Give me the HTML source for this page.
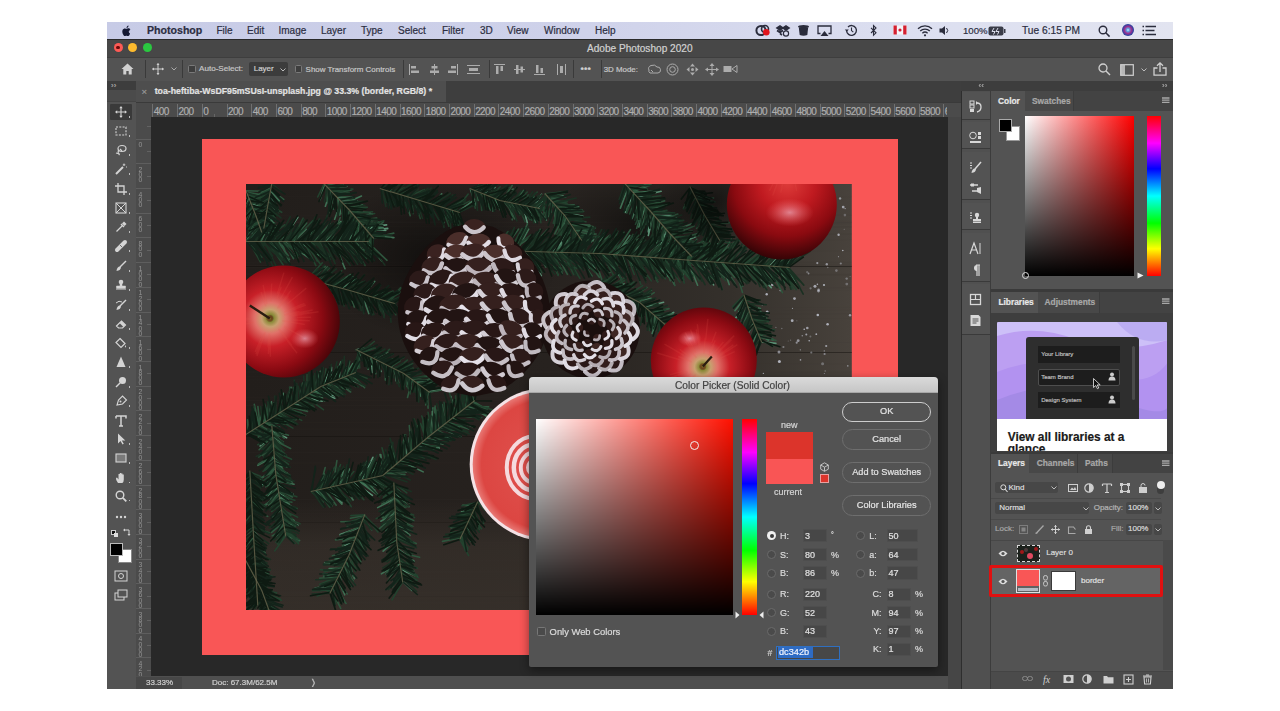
<!DOCTYPE html>
<html><head><meta charset="utf-8">
<style>
*{box-sizing:border-box}
html,body{margin:0;padding:0}
body{width:1280px;height:711px;background:#fff;position:relative;overflow:hidden;font-family:"Liberation Sans",sans-serif;}
.a{position:absolute}
.t{position:absolute;white-space:nowrap;line-height:1;-webkit-text-stroke:0.2px currentColor}
svg.a{overflow:visible}
</style></head>
<body>
<div id="root" style="position:absolute;left:0;top:0;width:1280px;height:711px;filter:blur(0.3px)">
<div class="a" style="left:107px;top:22px;width:1066px;height:16.5px;background:linear-gradient(90deg,#c7cbe6 0%,#cfd2ea 45%,#dcdff0 75%,#e2e4f0 100%);"></div>
<svg class="a" style="left:121px;top:24.5px" width="12" height="12" viewBox="0 0 12 12"><path d="M8.3 6.3c0-1.3 1.1-1.9 1.1-2-0.6-0.9-1.5-1-1.9-1-0.8-0.1-1.5 0.5-1.9 0.5-0.4 0-1-0.5-1.7-0.4C2.9 3.400 2.100 4 1.7 4.8c-0.9 1.500-0.2 3.8 0.6 5 0.4 0.6 0.9 1.300 1.5 1.300 0.6 0 0.8-0.4 1.600-0.4s0.9 0.4 1.6 0.4c0.6 0 1.1-0.6 1.4-1.200 0.5-0.7 0.6-1.300 0.6-1.400 0 0-1.300-0.5-1.300-2.2zM7 2.2c0.3-0.4 0.6-1 0.5-1.600-0.5 0-1.100 0.3-1.500 0.8-0.3 0.3-0.6 0.9-0.5 1.500 0.6 0 1.100-0.3 1.500-0.7z" fill="#141832"/></svg>
<div class="t" style="left:147px;top:25.00px;font-size:10.6px;color:#2c2e42;font-weight:bold;">Photoshop</div>
<div class="t" style="left:216.5px;top:25.6px;font-size:10px;color:#2c2e42;width:15.5px;">File</div>
<div class="t" style="left:247px;top:25.6px;font-size:10px;color:#2c2e42;width:16.8px;">Edit</div>
<div class="t" style="left:278.5px;top:25.6px;font-size:10px;color:#2c2e42;width:29px;">Image</div>
<div class="t" style="left:321px;top:25.6px;font-size:10px;color:#2c2e42;width:26px;">Layer</div>
<div class="t" style="left:361px;top:25.6px;font-size:10px;color:#2c2e42;width:23px;">Type</div>
<div class="t" style="left:398px;top:25.6px;font-size:10px;color:#2c2e42;width:29.5px;">Select</div>
<div class="t" style="left:442px;top:25.6px;font-size:10px;color:#2c2e42;width:23px;">Filter</div>
<div class="t" style="left:480px;top:25.6px;font-size:10px;color:#2c2e42;width:13px;">3D</div>
<div class="t" style="left:507px;top:25.6px;font-size:10px;color:#2c2e42;width:23px;">View</div>
<div class="t" style="left:544px;top:25.6px;font-size:10px;color:#2c2e42;width:38px;">Window</div>
<div class="t" style="left:595px;top:25.6px;font-size:10px;color:#2c2e42;width:23px;">Help</div>
<svg class="a" style="left:754px;top:24px" width="18" height="13" viewBox="0 0 18 13"><circle cx="7" cy="6.5" r="4.6" fill="none" stroke="#2a2c3c" stroke-width="2"/><circle cx="11" cy="5" r="3.5" fill="none" stroke="#2a2c3c" stroke-width="1.6"/><circle cx="12.3" cy="8.3" r="3.3" fill="#e0141c"/></svg>
<svg class="a" style="left:776px;top:24px" width="14" height="13" viewBox="0 0 14 13"><path d="M1 4l3-2 3 2-3 2zM7 4l3-2 3 2-3 2zM1 6.5l3 2 3-2M4 9.5l2 1.5" stroke="#2a2c3c" stroke-width="1.6" fill="#2a2c3c"/><circle cx="10" cy="9.5" r="2.6" fill="none" stroke="#2a2c3c" stroke-width="1.2"/></svg>
<svg class="a" style="left:797px;top:24px" width="13" height="13" viewBox="0 0 13 13"><ellipse cx="6.5" cy="2.5" rx="5.5" ry="1.6" fill="#2a2c3c"/><path d="M1.8 3.5h9.4l-0.9 7.5q-3.8 1.5-7.6 0z" fill="#2a2c3c"/></svg>
<svg class="a" style="left:817px;top:24.5px" width="15" height="12" viewBox="0 0 15 12"><path d="M3.5 8.5H1V1h13v7.5h-2.5" fill="none" stroke="#2a2c3c" stroke-width="1.3"/><path d="M7.5 6l4 5h-8z" fill="#2a2c3c"/></svg>
<svg class="a" style="left:844px;top:24px" width="14" height="13" viewBox="0 0 14 13"><path d="M2.6 6.5a4.9 4.9 0 1 0 1.4-3.5" fill="none" stroke="#2a2c3c" stroke-width="1.3"/><path d="M0.8 5.5l2 2.2 2-2.2z" fill="#2a2c3c"/><path d="M7.5 3.6v3l1.8 1.6" fill="none" stroke="#2a2c3c" stroke-width="1.1"/></svg>
<svg class="a" style="left:870px;top:24px" width="8" height="13" viewBox="0 0 8 13"><path d="M1 3.8l5 5-2.5 2.4V1.5L6 4 1 9" fill="none" stroke="#2a2c3c" stroke-width="1.1"/></svg>
<svg class="a" style="left:893px;top:25px" width="14" height="10" viewBox="0 0 14 10"><rect x="0" y="0.5" width="14" height="9" fill="#f4f4f8"/><rect x="0.5" y="0.5" width="3.3" height="9" fill="#d42030"/><rect x="10.2" y="0.5" width="3.3" height="9" fill="#d42030"/><circle cx="7" cy="5" r="1.6" fill="#d42030"/></svg>
<svg class="a" style="left:917px;top:24px" width="16" height="13" viewBox="0 0 16 13"><path d="M1 4.8a10 10 0 0 1 14 0M3.2 7a7 7 0 0 1 9.6 0M5.4 9.2a3.8 3.8 0 0 1 5.2 0" fill="none" stroke="#2a2c3c" stroke-width="1.3"/><circle cx="8" cy="11.3" r="1.1" fill="#2a2c3c"/></svg>
<svg class="a" style="left:939px;top:25px" width="11" height="11" viewBox="0 0 11 11"><path d="M0.5 3.5h2.5l3-2.5v9l-3-2.5H0.5z" fill="#2a2c3c"/><path d="M7.5 3a3.5 3.5 0 0 1 0 5" fill="none" stroke="#2a2c3c" stroke-width="1"/></svg>
<div class="t" style="left:963px;top:25.5px;font-size:9.6px;color:#2c2e42">100%</div>
<svg class="a" style="left:988px;top:25.5px" width="18" height="10" viewBox="0 0 18 10"><rect x="0.5" y="0.5" width="15" height="9" rx="2" fill="#3a3c48"/><rect x="16" y="3" width="1.5" height="4" fill="#3a3c48"/><path d="M6 2l-2 3.5h3l-1.5 3" stroke="#d8dae8" stroke-width="1" fill="none"/><path d="M10 2l-2 3.5h3l-1.5 3" stroke="#d8dae8" stroke-width="1" fill="none"/></svg>
<div class="t" style="left:1022px;top:25.8px;font-size:10.2px;color:#2c2e42">Tue 6:15 PM</div>
<svg class="a" style="left:1098px;top:24.5px" width="13" height="13" viewBox="0 0 13 13"><circle cx="5" cy="5" r="3.8" fill="none" stroke="#2a2c3c" stroke-width="1.4"/><path d="M7.8 7.8l3.8 3.8" stroke="#2a2c3c" stroke-width="1.5"/></svg>
<div class="a" style="left:1122px;top:24.3px;width:12px;height:12px;border-radius:50%;background:radial-gradient(circle at 50% 50%,#d0f0ff 0%,#60a0e0 18%,#a03090 40%,#3040a0 65%,#101a50 100%)"></div>
<svg class="a" style="left:1142px;top:25px" width="15" height="11" viewBox="0 0 15 11"><path d="M0.5 1.5h1.5M0.5 5.5h1.5M0.5 9.5h1.5M3.5 1.5h10.5M3.5 5.5h9M3.5 9.5h10.5" stroke="#2a2c3c" stroke-width="1.4"/></svg>
<div class="a" style="left:107px;top:38.5px;width:1066px;height:19px;background:#474747;border-top:1px solid #2a2a2a;"></div>
<div class="a" style="left:113.7px;top:43.2px;width:9px;height:9px;border-radius:50%;background:#fd5a55"></div>
<div class="a" style="left:128.1px;top:43.2px;width:9px;height:9px;border-radius:50%;background:#fdbb2e"></div>
<div class="a" style="left:143.2px;top:43.2px;width:9px;height:9px;border-radius:50%;background:#2ac840"></div>
<div class="a" style="left:116.4px;top:45.9px;width:3.6px;height:3.6px;border-radius:50%;background:#6b0a0a"></div>
<div class="t" style="left:587px;top:44.15px;font-size:10.1px;color:#d2d2d2;font-weight:normal;">Adobe Photoshop 2020</div>
<div class="a" style="left:107px;top:56.5px;width:1066px;height:24.5px;background:#535353;border-top:1px solid #3e3e3e;"></div>
<svg class="a" style="left:121px;top:63px" width="13" height="12" viewBox="0 0 13 12"><path d="M6.5 0.5L0.5 6h1.8v5.5h3v-3.5h2.4v3.5h3V6h1.8z" fill="#d0d0d0"/></svg>
<div class="a" style="left:144.5px;top:60px;width:1px;height:18px;background:#3a3a3a;"></div>
<svg class="a" style="left:152px;top:63px" width="12" height="12" viewBox="0 0 12 12"><path d="M6 0.5v11M0.5 6h11" stroke="#d0d0d0" stroke-width="1"/><path d="M6 0L4.5 2h3zM6 12l-1.5-2h3zM0 6l2-1.5v3zM12 6l-2-1.5v3z" fill="#d0d0d0"/></svg>
<svg class="a" style="left:171px;top:67px" width="6" height="4" viewBox="0 0 6 4"><path d="M0.5 0.5l2.5 2.5 2.5-2.5" stroke="#aaa" fill="none" stroke-width="1"/></svg>
<div class="a" style="left:182px;top:60px;width:1px;height:18px;background:#3a3a3a;"></div>
<div class="a" style="left:188.3px;top:65.3px;width:7.3px;height:7.3px;border:1px solid #7a7a7a;border-radius:1.5px;background:#3e3e3e"></div>
<div class="t" style="left:199px;top:65.45px;font-size:8.1px;color:#c6c6c6;font-weight:normal;">Auto-Select:</div>
<div class="a" style="left:249px;top:62px;width:39px;height:14px;background:#3c3c3c;border-radius:2px;"></div>
<div class="t" style="left:253.7px;top:65.30px;font-size:8px;color:#cfcfcf;font-weight:normal;">Layer</div>
<svg class="a" style="left:280px;top:67.5px" width="6" height="4" viewBox="0 0 6 4"><path d="M0.5 0.5l2.5 2.5 2.5-2.5" stroke="#bbb" fill="none" stroke-width="1"/></svg>
<div class="a" style="left:295px;top:65.3px;width:7.3px;height:7.3px;border:1px solid #7a7a7a;border-radius:1.5px;background:#3e3e3e"></div>
<div class="t" style="left:305.6px;top:65.53px;font-size:7.95px;color:#c6c6c6;font-weight:normal;">Show Transform Controls</div>
<div class="a" style="left:402.5px;top:60px;width:1px;height:18px;background:#3a3a3a;"></div>
<svg class="a" style="left:409px;top:63.5px" width="11" height="11" viewBox="0 0 11 11"><path d="M0.5 0v11" stroke="#acacac"/><rect x="2" y="2" width="5" height="2.5" fill="#acacac"/><rect x="2" y="6.5" width="8" height="2.5" fill="#acacac"/></svg>
<svg class="a" style="left:428.5px;top:63.5px" width="11" height="11" viewBox="0 0 11 11"><path d="M5.5 0v11" stroke="#acacac"/><rect x="2.5" y="2" width="6" height="2.5" fill="#acacac"/><rect x="1" y="6.5" width="9" height="2.5" fill="#acacac"/></svg>
<svg class="a" style="left:447px;top:63.5px" width="11" height="11" viewBox="0 0 11 11"><path d="M10.5 0v11" stroke="#acacac"/><rect x="4" y="2" width="5" height="2.5" fill="#acacac"/><rect x="1" y="6.5" width="8" height="2.5" fill="#acacac"/></svg>
<svg class="a" style="left:467px;top:63.5px" width="13" height="11" viewBox="0 0 13 11"><path d="M0 1.5h13M0 9.5h13" stroke="#acacac"/><rect x="2" y="4" width="9" height="3" fill="#acacac"/></svg>
<svg class="a" style="left:494px;top:63.5px" width="11" height="11" viewBox="0 0 11 11"><path d="M0 0.5h11" stroke="#acacac"/><rect x="2" y="2" width="2.5" height="8" fill="#acacac"/><rect x="6.5" y="2" width="2.5" height="5" fill="#acacac"/></svg>
<svg class="a" style="left:514px;top:63.5px" width="11" height="11" viewBox="0 0 11 11"><path d="M0 5.5h11" stroke="#acacac"/><rect x="2" y="1" width="2.5" height="9" fill="#acacac"/><rect x="6.5" y="2.5" width="2.5" height="6" fill="#acacac"/></svg>
<svg class="a" style="left:533.5px;top:63.5px" width="11" height="11" viewBox="0 0 11 11"><path d="M0 10.5h11" stroke="#acacac"/><rect x="2" y="1" width="2.5" height="8" fill="#acacac"/><rect x="6.5" y="4" width="2.5" height="5" fill="#acacac"/></svg>
<svg class="a" style="left:556px;top:63.5px" width="11" height="11" viewBox="0 0 11 11"><path d="M1.5 0v11M9.5 0v11" stroke="#acacac"/><rect x="4" y="2" width="3" height="7" fill="#acacac"/></svg>
<div class="a" style="left:489px;top:60px;width:1px;height:18px;background:#3a3a3a;"></div>
<div class="a" style="left:573px;top:60px;width:1px;height:18px;background:#3a3a3a;"></div>
<div class="t" style="left:580.5px;top:63.75px;font-size:9.5px;color:#d0d0d0;font-weight:bold;letter-spacing:0.2px;">&#8226;&#8226;&#8226;</div>
<div class="a" style="left:600.5px;top:60px;width:1px;height:18px;background:#3a3a3a;"></div>
<div class="t" style="left:603.7px;top:65.55px;font-size:7.9px;color:#c6c6c6;font-weight:normal;">3D Mode:</div>
<svg class="a" style="left:646px;top:63px" width="15" height="12" viewBox="0 0 15 12"><path d="M3 7a4 3 0 0 1 8-3 3 3 0 0 1 1 6H4a2.5 2.5 0 0 1-1-3z" fill="none" stroke="#acacac" stroke-width="1"/><path d="M5 7l2 2" stroke="#acacac"/></svg>
<svg class="a" style="left:666px;top:62.5px" width="13" height="13" viewBox="0 0 13 13"><circle cx="6.5" cy="6.5" r="5.5" fill="none" stroke="#acacac" stroke-width="1"/><circle cx="6.5" cy="6.5" r="2.8" fill="none" stroke="#acacac" stroke-width="1"/></svg>
<svg class="a" style="left:686px;top:62.5px" width="13" height="13" viewBox="0 0 13 13"><path d="M6.5 0.5l2.5 3h-5zM6.5 12.5l2.5-3h-5zM0.5 6.5l3-2.5v5zM12.5 6.5l-3-2.5v5z" fill="#acacac"/><circle cx="6.5" cy="6.5" r="1.5" fill="#acacac"/></svg>
<svg class="a" style="left:705px;top:62.5px" width="14" height="13" viewBox="0 0 14 13"><path d="M7 1v11M1 6.5h12" stroke="#acacac"/><path d="M7 0l-2.5 3h5zM7 13l-2.5-3h5zM0 6.5l3-2v4zM14 6.5l-3-2v4z" fill="#acacac"/></svg>
<svg class="a" style="left:723px;top:64px" width="15" height="10" viewBox="0 0 15 10"><rect x="0.5" y="2" width="8" height="6" fill="#acacac"/><path d="M9 5l5-3.5v7z" fill="none" stroke="#acacac"/></svg>
<svg class="a" style="left:1098px;top:63px" width="13" height="13" viewBox="0 0 13 13"><circle cx="5" cy="5" r="4" fill="none" stroke="#d0d0d0" stroke-width="1.3"/><path d="M8 8l4 4" stroke="#d0d0d0" stroke-width="1.5"/></svg>
<svg class="a" style="left:1120px;top:63.5px" width="14" height="12" viewBox="0 0 14 12"><rect x="0.7" y="0.7" width="12.6" height="10.6" fill="none" stroke="#d0d0d0" stroke-width="1.2"/><rect x="1" y="1" width="4" height="10" fill="#d0d0d0" opacity="0.8"/></svg>
<svg class="a" style="left:1141px;top:67.5px" width="6" height="4" viewBox="0 0 6 4"><path d="M0.5 0.5l2.5 2.5 2.5-2.5" stroke="#bbb" fill="none" stroke-width="1"/></svg>
<svg class="a" style="left:1153px;top:61.5px" width="14" height="14" viewBox="0 0 14 14"><path d="M4.5 6H1v7.2h12V6H9.5" fill="none" stroke="#d0d0d0" stroke-width="1.3"/><path d="M7 10V1M4 3.8L7 0.8l3 3" fill="none" stroke="#d0d0d0" stroke-width="1.3"/></svg>
<div class="a" style="left:107px;top:81px;width:28.5px;height:608px;background:#535353;"></div>
<div class="a" style="left:107px;top:81px;width:28.5px;height:9px;background:#3d3d3d;"></div>
<div class="a" style="left:107px;top:90px;width:28.5px;height:12px;background:#4b4b4b;border-bottom:1px solid #444;"></div>
<div class="t" style="left:111px;top:81.50px;font-size:8px;color:#9a9a9a;font-weight:bold;">&#8250;&#8250;</div>
<div class="a" style="left:110px;top:103.5px;width:22px;height:16.5px;background:#3a3a3a;border-radius:1px;"></div>
<svg class="a" style="left:115px;top:106px" width="12" height="12" viewBox="0 0 12 12"><path d="M6 1v10M1 6h10" stroke="#d4d4d4" stroke-width="1.1"/><path d="M6 0L4.3 2.2h3.4zM6 12l-1.7-2.2h3.4zM0 6l2.2-1.7v3.4zM12 6L9.8 4.3v3.4z" fill="#d4d4d4"/></svg>
<div class="a" style="left:128.5px;top:116px;width:1.5px;height:1.5px;background:#bbb;"></div>
<svg class="a" style="left:115px;top:125px" width="12" height="12" viewBox="0 0 12 12"><rect x="1" y="2" width="10" height="8" fill="none" stroke="#d4d4d4" stroke-width="1.1" stroke-dasharray="2 1.3"/></svg>
<div class="a" style="left:128.5px;top:135px;width:1.5px;height:1.5px;background:#bbb;"></div>
<svg class="a" style="left:115px;top:144px" width="12" height="12" viewBox="0 0 12 12"><ellipse cx="7" cy="4.5" rx="4" ry="3" fill="none" stroke="#d4d4d4" stroke-width="1.2"/><path d="M3.5 6q-1 3 1 5M1 9l4 1M5 5l2 2" stroke="#d4d4d4" stroke-width="1.1" fill="none"/></svg>
<div class="a" style="left:128.5px;top:154px;width:1.5px;height:1.5px;background:#bbb;"></div>
<svg class="a" style="left:115px;top:163px" width="12" height="12" viewBox="0 0 12 12"><path d="M1 11l7-7" stroke="#d4d4d4" stroke-width="2"/><path d="M9 0.5v2.5M7.8 1.8h2.5M11 4h1" stroke="#d4d4d4" stroke-width="0.9"/></svg>
<div class="a" style="left:128.5px;top:173px;width:1.5px;height:1.5px;background:#bbb;"></div>
<svg class="a" style="left:115px;top:183px" width="12" height="12" viewBox="0 0 12 12"><path d="M3 0v9h9M0 3h9v9" fill="none" stroke="#d4d4d4" stroke-width="1.3"/></svg>
<div class="a" style="left:128.5px;top:193px;width:1.5px;height:1.5px;background:#bbb;"></div>
<svg class="a" style="left:115px;top:202px" width="12" height="12" viewBox="0 0 12 12"><rect x="1" y="1" width="10" height="10" fill="none" stroke="#d4d4d4" stroke-width="1.1"/><path d="M1 1l10 10M11 1L1 11" stroke="#d4d4d4" stroke-width="1"/></svg>
<div class="a" style="left:128.5px;top:212px;width:1.5px;height:1.5px;background:#bbb;"></div>
<svg class="a" style="left:115px;top:221px" width="12" height="12" viewBox="0 0 12 12"><path d="M1.5 10.5l6-6" stroke="#d4d4d4" stroke-width="1.3"/><path d="M7 2.5l2-2 2.5 2.5-2 2z" fill="#d4d4d4"/><path d="M6 3l3 3" stroke="#d4d4d4" stroke-width="1.4"/></svg>
<div class="a" style="left:128.5px;top:231px;width:1.5px;height:1.5px;background:#bbb;"></div>
<svg class="a" style="left:115px;top:240px" width="12" height="12" viewBox="0 0 12 12"><path d="M2 10L10 2" stroke="#d4d4d4" stroke-width="4" stroke-linecap="round"/><path d="M5 5l2 2" stroke="#535353" stroke-width="0.8"/></svg>
<div class="a" style="left:128.5px;top:250px;width:1.5px;height:1.5px;background:#bbb;"></div>
<svg class="a" style="left:115px;top:260px" width="12" height="12" viewBox="0 0 12 12"><path d="M11 1L5 7" stroke="#d4d4d4" stroke-width="1.5"/><path d="M5 6.5q-3 0-3.5 4.5q4-0.5 4.5-3.5z" fill="#d4d4d4"/></svg>
<div class="a" style="left:128.5px;top:270px;width:1.5px;height:1.5px;background:#bbb;"></div>
<svg class="a" style="left:115px;top:279px" width="12" height="12" viewBox="0 0 12 12"><circle cx="6" cy="3" r="2.3" fill="#d4d4d4"/><path d="M5 5h2v2H5zM1.5 7h9v2.5h-9zM1 10.5h10" fill="#d4d4d4" stroke="#d4d4d4" stroke-width="0.5"/></svg>
<div class="a" style="left:128.5px;top:289px;width:1.5px;height:1.5px;background:#bbb;"></div>
<svg class="a" style="left:115px;top:299px" width="12" height="12" viewBox="0 0 12 12"><path d="M11 1L5 7" stroke="#d4d4d4" stroke-width="1.5"/><path d="M5 6.5q-3 0-3.5 4.5q4-0.5 4.5-3.5z" fill="#d4d4d4"/><path d="M1 4q3-3 6-1" fill="none" stroke="#d4d4d4" stroke-width="1"/></svg>
<div class="a" style="left:128.5px;top:309px;width:1.5px;height:1.5px;background:#bbb;"></div>
<svg class="a" style="left:115px;top:318px" width="12" height="12" viewBox="0 0 12 12"><path d="M1.5 8l5-5 4 4-3 3H3.5z" fill="none" stroke="#d4d4d4" stroke-width="1.2"/><path d="M6.5 3l4 4-2 2-4-4z" fill="#d4d4d4"/></svg>
<div class="a" style="left:128.5px;top:328px;width:1.5px;height:1.5px;background:#bbb;"></div>
<svg class="a" style="left:115px;top:337px" width="12" height="12" viewBox="0 0 12 12"><path d="M5 1.5l5 5-4 4-5-5z" fill="none" stroke="#d4d4d4" stroke-width="1.2"/><path d="M10.5 8q1.2 1.8 0 2.8q-1.2-1 0-2.8z" fill="#d4d4d4"/></svg>
<div class="a" style="left:128.5px;top:347px;width:1.5px;height:1.5px;background:#bbb;"></div>
<svg class="a" style="left:115px;top:356px" width="12" height="12" viewBox="0 0 12 12"><path d="M6 0.5L10.5 11h-9z" fill="#d4d4d4"/></svg>
<div class="a" style="left:128.5px;top:366px;width:1.5px;height:1.5px;background:#bbb;"></div>
<svg class="a" style="left:115px;top:376px" width="12" height="12" viewBox="0 0 12 12"><circle cx="7.5" cy="4.5" r="3.5" fill="#d4d4d4"/><path d="M5 7l-4 4" stroke="#d4d4d4" stroke-width="1.5"/></svg>
<div class="a" style="left:128.5px;top:386px;width:1.5px;height:1.5px;background:#bbb;"></div>
<svg class="a" style="left:115px;top:395px" width="12" height="12" viewBox="0 0 12 12"><path d="M2 10l1.5-5 4-4 4 4-4 4z" fill="none" stroke="#d4d4d4" stroke-width="1.1"/><circle cx="5.5" cy="6.5" r="1" fill="#d4d4d4"/></svg>
<div class="a" style="left:128.5px;top:405px;width:1.5px;height:1.5px;background:#bbb;"></div>
<svg class="a" style="left:115px;top:414.7px" width="12" height="12" viewBox="0 0 12 12"><path d="M1 1h10v2.5M1 1v2.5M6 1v10M4 11h4" fill="none" stroke="#d4d4d4" stroke-width="1.5"/></svg>
<svg class="a" style="left:115px;top:433px" width="12" height="12" viewBox="0 0 12 12"><path d="M3 0.5v10l2.5-2.5 2 3.5 1.3-0.8-2-3.3h3.5z" fill="#d4d4d4"/></svg>
<div class="a" style="left:128.5px;top:443px;width:1.5px;height:1.5px;background:#bbb;"></div>
<svg class="a" style="left:115px;top:452.4px" width="12" height="12" viewBox="0 0 12 12"><rect x="1" y="2" width="10" height="8" fill="#7a7a7a" stroke="#d4d4d4" stroke-width="1.1"/></svg>
<div class="a" style="left:128.5px;top:462.4px;width:1.5px;height:1.5px;background:#bbb;"></div>
<svg class="a" style="left:115px;top:471.5px" width="12" height="12" viewBox="0 0 12 12"><path d="M3 11q-2.5-3-2-5l1-0.5 1.5 2V2h1.3v4V1h1.4v5V1.5h1.3V6V2.5h1.3v5q0 2.5-1.5 3.5z" fill="#d4d4d4"/></svg>
<div class="a" style="left:128.5px;top:481.5px;width:1.5px;height:1.5px;background:#bbb;"></div>
<svg class="a" style="left:115px;top:489.8px" width="12" height="12" viewBox="0 0 12 12"><circle cx="5" cy="5" r="3.8" fill="none" stroke="#d4d4d4" stroke-width="1.4"/><path d="M7.8 7.8l3.5 3.5" stroke="#d4d4d4" stroke-width="1.8"/></svg>
<div class="a" style="left:128.5px;top:499.8px;width:1.5px;height:1.5px;background:#bbb;"></div>
<svg class="a" style="left:115px;top:511px" width="12" height="12" viewBox="0 0 12 12"><circle cx="2" cy="6" r="1.2" fill="#d4d4d4"/><circle cx="6" cy="6" r="1.2" fill="#d4d4d4"/><circle cx="10" cy="6" r="1.2" fill="#d4d4d4"/></svg>
<div class="a" style="left:111px;top:530px;width:5px;height:5px;background:#111;border:1px solid #ccc;"></div>
<div class="a" style="left:113.5px;top:532.5px;width:4.5px;height:4.5px;background:#ddd;"></div>
<svg class="a" style="left:123px;top:528px" width="8" height="8" viewBox="0 0 8 8"><path d="M1 2h5v5" fill="none" stroke="#d4d4d4" stroke-width="1"/><path d="M0 2l2-1.5v3zM6 8l-1.5-2h3z" fill="#d4d4d4"/></svg>
<div class="a" style="left:117.7px;top:549px;width:14px;height:14px;background:#fff;border:1px solid #888;"></div>
<div class="a" style="left:110.4px;top:542.7px;width:13px;height:13px;background:#000;border:1px solid #bbb;"></div>
<svg class="a" style="left:114px;top:570px" width="14" height="12" viewBox="0 0 14 12"><rect x="1" y="1" width="12" height="10" fill="none" stroke="#d4d4d4" stroke-width="1"/><circle cx="7" cy="6" r="2.5" fill="none" stroke="#d4d4d4" stroke-width="1"/></svg>
<svg class="a" style="left:114px;top:589px" width="14" height="13" viewBox="0 0 14 13"><rect x="1" y="4" width="9" height="7" fill="#535353" stroke="#d4d4d4" stroke-width="1"/><rect x="4" y="1" width="9" height="7" fill="#535353" stroke="#d4d4d4" stroke-width="1"/></svg>
<div class="a" style="left:135.5px;top:81px;width:825.5px;height:21px;background:#3e3e3e;"></div>
<div class="a" style="left:135.5px;top:81px;width:310.7px;height:21.5px;background:#4e4e4e;"></div>
<div class="t" style="left:141.5px;top:86.85px;font-size:9.5px;color:#9a9a9a;font-weight:normal;">&#215;</div>
<div class="t" style="left:154.7px;top:86.92px;font-size:8.75px;color:#e2e2e2;font-weight:bold;">toa-heftiba-WsDF95mSUsI-unsplash.jpg @ 33.3% (border, RGB/8) *</div>
<div class="a" style="left:135.5px;top:102px;width:825.5px;height:15px;background:#4b4b4b;border-top:1px solid #3a3a3a;"></div>
<div class="a" style="left:135.5px;top:117px;width:15.5px;height:559.5px;background:#4b4b4b;"></div>
<div class="a" style="left:152.37px;top:104px;width:0.7px;height:13px;background:#707070"></div>
<div class="a" style="left:164.73px;top:114px;width:0.6px;height:3px;background:#666"></div>
<div class="a" style="left:177.09px;top:104px;width:0.7px;height:13px;background:#707070"></div>
<div class="a" style="left:189.44px;top:114px;width:0.6px;height:3px;background:#666"></div>
<div class="a" style="left:201.80px;top:104px;width:0.7px;height:13px;background:#707070"></div>
<div class="a" style="left:214.16px;top:114px;width:0.6px;height:3px;background:#666"></div>
<div class="a" style="left:226.51px;top:104px;width:0.7px;height:13px;background:#707070"></div>
<div class="a" style="left:238.87px;top:114px;width:0.6px;height:3px;background:#666"></div>
<div class="a" style="left:251.23px;top:104px;width:0.7px;height:13px;background:#707070"></div>
<div class="a" style="left:263.59px;top:114px;width:0.6px;height:3px;background:#666"></div>
<div class="a" style="left:275.94px;top:104px;width:0.7px;height:13px;background:#707070"></div>
<div class="a" style="left:288.30px;top:114px;width:0.6px;height:3px;background:#666"></div>
<div class="a" style="left:300.66px;top:104px;width:0.7px;height:13px;background:#707070"></div>
<div class="a" style="left:313.01px;top:114px;width:0.6px;height:3px;background:#666"></div>
<div class="a" style="left:325.37px;top:104px;width:0.7px;height:13px;background:#707070"></div>
<div class="a" style="left:337.73px;top:114px;width:0.6px;height:3px;background:#666"></div>
<div class="a" style="left:350.08px;top:104px;width:0.7px;height:13px;background:#707070"></div>
<div class="a" style="left:362.44px;top:114px;width:0.6px;height:3px;background:#666"></div>
<div class="a" style="left:374.80px;top:104px;width:0.7px;height:13px;background:#707070"></div>
<div class="a" style="left:387.15px;top:114px;width:0.6px;height:3px;background:#666"></div>
<div class="a" style="left:399.51px;top:104px;width:0.7px;height:13px;background:#707070"></div>
<div class="a" style="left:411.87px;top:114px;width:0.6px;height:3px;background:#666"></div>
<div class="a" style="left:424.23px;top:104px;width:0.7px;height:13px;background:#707070"></div>
<div class="a" style="left:436.58px;top:114px;width:0.6px;height:3px;background:#666"></div>
<div class="a" style="left:448.94px;top:104px;width:0.7px;height:13px;background:#707070"></div>
<div class="a" style="left:461.30px;top:114px;width:0.6px;height:3px;background:#666"></div>
<div class="a" style="left:473.65px;top:104px;width:0.7px;height:13px;background:#707070"></div>
<div class="a" style="left:486.01px;top:114px;width:0.6px;height:3px;background:#666"></div>
<div class="a" style="left:498.37px;top:104px;width:0.7px;height:13px;background:#707070"></div>
<div class="a" style="left:510.73px;top:114px;width:0.6px;height:3px;background:#666"></div>
<div class="a" style="left:523.08px;top:104px;width:0.7px;height:13px;background:#707070"></div>
<div class="a" style="left:535.44px;top:114px;width:0.6px;height:3px;background:#666"></div>
<div class="a" style="left:547.80px;top:104px;width:0.7px;height:13px;background:#707070"></div>
<div class="a" style="left:560.15px;top:114px;width:0.6px;height:3px;background:#666"></div>
<div class="a" style="left:572.51px;top:104px;width:0.7px;height:13px;background:#707070"></div>
<div class="a" style="left:584.87px;top:114px;width:0.6px;height:3px;background:#666"></div>
<div class="a" style="left:597.22px;top:104px;width:0.7px;height:13px;background:#707070"></div>
<div class="a" style="left:609.58px;top:114px;width:0.6px;height:3px;background:#666"></div>
<div class="a" style="left:621.94px;top:104px;width:0.7px;height:13px;background:#707070"></div>
<div class="a" style="left:634.30px;top:114px;width:0.6px;height:3px;background:#666"></div>
<div class="a" style="left:646.65px;top:104px;width:0.7px;height:13px;background:#707070"></div>
<div class="a" style="left:659.01px;top:114px;width:0.6px;height:3px;background:#666"></div>
<div class="a" style="left:671.37px;top:104px;width:0.7px;height:13px;background:#707070"></div>
<div class="a" style="left:683.72px;top:114px;width:0.6px;height:3px;background:#666"></div>
<div class="a" style="left:696.08px;top:104px;width:0.7px;height:13px;background:#707070"></div>
<div class="a" style="left:708.44px;top:114px;width:0.6px;height:3px;background:#666"></div>
<div class="a" style="left:720.79px;top:104px;width:0.7px;height:13px;background:#707070"></div>
<div class="a" style="left:733.15px;top:114px;width:0.6px;height:3px;background:#666"></div>
<div class="a" style="left:745.51px;top:104px;width:0.7px;height:13px;background:#707070"></div>
<div class="a" style="left:757.87px;top:114px;width:0.6px;height:3px;background:#666"></div>
<div class="a" style="left:770.22px;top:104px;width:0.7px;height:13px;background:#707070"></div>
<div class="a" style="left:782.58px;top:114px;width:0.6px;height:3px;background:#666"></div>
<div class="a" style="left:794.94px;top:104px;width:0.7px;height:13px;background:#707070"></div>
<div class="a" style="left:807.29px;top:114px;width:0.6px;height:3px;background:#666"></div>
<div class="a" style="left:819.65px;top:104px;width:0.7px;height:13px;background:#707070"></div>
<div class="a" style="left:832.01px;top:114px;width:0.6px;height:3px;background:#666"></div>
<div class="a" style="left:844.36px;top:104px;width:0.7px;height:13px;background:#707070"></div>
<div class="a" style="left:856.72px;top:114px;width:0.6px;height:3px;background:#666"></div>
<div class="a" style="left:869.08px;top:104px;width:0.7px;height:13px;background:#707070"></div>
<div class="a" style="left:881.43px;top:114px;width:0.6px;height:3px;background:#666"></div>
<div class="a" style="left:893.79px;top:104px;width:0.7px;height:13px;background:#707070"></div>
<div class="a" style="left:906.15px;top:114px;width:0.6px;height:3px;background:#666"></div>
<div class="a" style="left:918.51px;top:104px;width:0.7px;height:13px;background:#707070"></div>
<div class="a" style="left:930.86px;top:114px;width:0.6px;height:3px;background:#666"></div>
<div class="a" style="left:943.22px;top:104px;width:0.7px;height:13px;background:#707070"></div>
<div class="a" style="left:151px;top:102px;width:796px;height:15px;overflow:hidden">
<div class="t" style="left:2.872000000000014px;top:5.20px;font-size:10px;color:#adadad;font-weight:normal;letter-spacing:-0.6px;">400</div>
<div class="t" style="left:27.586000000000013px;top:5.20px;font-size:10px;color:#adadad;font-weight:normal;letter-spacing:-0.6px;">200</div>
<div class="t" style="left:52.30000000000001px;top:5.20px;font-size:10px;color:#adadad;font-weight:normal;letter-spacing:-0.6px;">0</div>
<div class="t" style="left:77.01400000000001px;top:5.20px;font-size:10px;color:#adadad;font-weight:normal;letter-spacing:-0.6px;">200</div>
<div class="t" style="left:101.72800000000001px;top:5.20px;font-size:10px;color:#adadad;font-weight:normal;letter-spacing:-0.6px;">400</div>
<div class="t" style="left:126.44200000000001px;top:5.20px;font-size:10px;color:#adadad;font-weight:normal;letter-spacing:-0.6px;">600</div>
<div class="t" style="left:151.156px;top:5.20px;font-size:10px;color:#adadad;font-weight:normal;letter-spacing:-0.6px;">800</div>
<div class="t" style="left:175.87px;top:5.20px;font-size:10px;color:#adadad;font-weight:normal;letter-spacing:-0.6px;">1000</div>
<div class="t" style="left:200.584px;top:5.20px;font-size:10px;color:#adadad;font-weight:normal;letter-spacing:-0.6px;">1200</div>
<div class="t" style="left:225.298px;top:5.20px;font-size:10px;color:#adadad;font-weight:normal;letter-spacing:-0.6px;">1400</div>
<div class="t" style="left:250.012px;top:5.20px;font-size:10px;color:#adadad;font-weight:normal;letter-spacing:-0.6px;">1600</div>
<div class="t" style="left:274.726px;top:5.20px;font-size:10px;color:#adadad;font-weight:normal;letter-spacing:-0.6px;">1800</div>
<div class="t" style="left:299.44px;top:5.20px;font-size:10px;color:#adadad;font-weight:normal;letter-spacing:-0.6px;">2000</div>
<div class="t" style="left:324.154px;top:5.20px;font-size:10px;color:#adadad;font-weight:normal;letter-spacing:-0.6px;">2200</div>
<div class="t" style="left:348.868px;top:5.20px;font-size:10px;color:#adadad;font-weight:normal;letter-spacing:-0.6px;">2400</div>
<div class="t" style="left:373.582px;top:5.20px;font-size:10px;color:#adadad;font-weight:normal;letter-spacing:-0.6px;">2600</div>
<div class="t" style="left:398.29600000000005px;top:5.20px;font-size:10px;color:#adadad;font-weight:normal;letter-spacing:-0.6px;">2800</div>
<div class="t" style="left:423.01px;top:5.20px;font-size:10px;color:#adadad;font-weight:normal;letter-spacing:-0.6px;">3000</div>
<div class="t" style="left:447.72399999999993px;top:5.20px;font-size:10px;color:#adadad;font-weight:normal;letter-spacing:-0.6px;">3200</div>
<div class="t" style="left:472.438px;top:5.20px;font-size:10px;color:#adadad;font-weight:normal;letter-spacing:-0.6px;">3400</div>
<div class="t" style="left:497.15200000000004px;top:5.20px;font-size:10px;color:#adadad;font-weight:normal;letter-spacing:-0.6px;">3600</div>
<div class="t" style="left:521.866px;top:5.20px;font-size:10px;color:#adadad;font-weight:normal;letter-spacing:-0.6px;">3800</div>
<div class="t" style="left:546.5799999999999px;top:5.20px;font-size:10px;color:#adadad;font-weight:normal;letter-spacing:-0.6px;">4000</div>
<div class="t" style="left:571.2940000000001px;top:5.20px;font-size:10px;color:#adadad;font-weight:normal;letter-spacing:-0.6px;">4200</div>
<div class="t" style="left:596.008px;top:5.20px;font-size:10px;color:#adadad;font-weight:normal;letter-spacing:-0.6px;">4400</div>
<div class="t" style="left:620.722px;top:5.20px;font-size:10px;color:#adadad;font-weight:normal;letter-spacing:-0.6px;">4600</div>
<div class="t" style="left:645.4359999999999px;top:5.20px;font-size:10px;color:#adadad;font-weight:normal;letter-spacing:-0.6px;">4800</div>
<div class="t" style="left:670.1500000000001px;top:5.20px;font-size:10px;color:#adadad;font-weight:normal;letter-spacing:-0.6px;">5000</div>
<div class="t" style="left:694.864px;top:5.20px;font-size:10px;color:#adadad;font-weight:normal;letter-spacing:-0.6px;">5200</div>
<div class="t" style="left:719.578px;top:5.20px;font-size:10px;color:#adadad;font-weight:normal;letter-spacing:-0.6px;">5400</div>
<div class="t" style="left:744.2919999999999px;top:5.20px;font-size:10px;color:#adadad;font-weight:normal;letter-spacing:-0.6px;">5600</div>
<div class="t" style="left:769.0060000000001px;top:5.20px;font-size:10px;color:#adadad;font-weight:normal;letter-spacing:-0.6px;">5800</div>
<div class="t" style="left:793.72px;top:5.20px;font-size:10px;color:#adadad;font-weight:normal;letter-spacing:-0.6px;">6000</div>
</div>
<div class="a" style="left:147px;top:126.14px;width:4px;height:0.6px;background:#626262"></div>
<div class="a" style="left:136px;top:138.50px;width:15px;height:0.7px;background:#5e5e5e"></div>
<div class="a" style="left:147px;top:150.86px;width:4px;height:0.6px;background:#626262"></div>
<div class="a" style="left:136px;top:163.21px;width:15px;height:0.7px;background:#5e5e5e"></div>
<div class="a" style="left:147px;top:175.57px;width:4px;height:0.6px;background:#626262"></div>
<div class="a" style="left:136px;top:187.93px;width:15px;height:0.7px;background:#5e5e5e"></div>
<div class="a" style="left:147px;top:200.28px;width:4px;height:0.6px;background:#626262"></div>
<div class="a" style="left:136px;top:212.64px;width:15px;height:0.7px;background:#5e5e5e"></div>
<div class="a" style="left:147px;top:225.00px;width:4px;height:0.6px;background:#626262"></div>
<div class="a" style="left:136px;top:237.36px;width:15px;height:0.7px;background:#5e5e5e"></div>
<div class="a" style="left:147px;top:249.71px;width:4px;height:0.6px;background:#626262"></div>
<div class="a" style="left:136px;top:262.07px;width:15px;height:0.7px;background:#5e5e5e"></div>
<div class="a" style="left:147px;top:274.43px;width:4px;height:0.6px;background:#626262"></div>
<div class="a" style="left:136px;top:286.78px;width:15px;height:0.7px;background:#5e5e5e"></div>
<div class="a" style="left:147px;top:299.14px;width:4px;height:0.6px;background:#626262"></div>
<div class="a" style="left:136px;top:311.50px;width:15px;height:0.7px;background:#5e5e5e"></div>
<div class="a" style="left:147px;top:323.86px;width:4px;height:0.6px;background:#626262"></div>
<div class="a" style="left:136px;top:336.21px;width:15px;height:0.7px;background:#5e5e5e"></div>
<div class="a" style="left:147px;top:348.57px;width:4px;height:0.6px;background:#626262"></div>
<div class="a" style="left:136px;top:360.93px;width:15px;height:0.7px;background:#5e5e5e"></div>
<div class="a" style="left:147px;top:373.28px;width:4px;height:0.6px;background:#626262"></div>
<div class="a" style="left:136px;top:385.64px;width:15px;height:0.7px;background:#5e5e5e"></div>
<div class="a" style="left:147px;top:398.00px;width:4px;height:0.6px;background:#626262"></div>
<div class="a" style="left:136px;top:410.35px;width:15px;height:0.7px;background:#5e5e5e"></div>
<div class="a" style="left:147px;top:422.71px;width:4px;height:0.6px;background:#626262"></div>
<div class="a" style="left:136px;top:435.07px;width:15px;height:0.7px;background:#5e5e5e"></div>
<div class="a" style="left:147px;top:447.43px;width:4px;height:0.6px;background:#626262"></div>
<div class="a" style="left:136px;top:459.78px;width:15px;height:0.7px;background:#5e5e5e"></div>
<div class="a" style="left:147px;top:472.14px;width:4px;height:0.6px;background:#626262"></div>
<div class="a" style="left:136px;top:484.50px;width:15px;height:0.7px;background:#5e5e5e"></div>
<div class="a" style="left:147px;top:496.85px;width:4px;height:0.6px;background:#626262"></div>
<div class="a" style="left:136px;top:509.21px;width:15px;height:0.7px;background:#5e5e5e"></div>
<div class="a" style="left:147px;top:521.57px;width:4px;height:0.6px;background:#626262"></div>
<div class="a" style="left:136px;top:533.92px;width:15px;height:0.7px;background:#5e5e5e"></div>
<div class="a" style="left:147px;top:546.28px;width:4px;height:0.6px;background:#626262"></div>
<div class="a" style="left:136px;top:558.64px;width:15px;height:0.7px;background:#5e5e5e"></div>
<div class="a" style="left:147px;top:571.00px;width:4px;height:0.6px;background:#626262"></div>
<div class="a" style="left:136px;top:583.35px;width:15px;height:0.7px;background:#5e5e5e"></div>
<div class="a" style="left:147px;top:595.71px;width:4px;height:0.6px;background:#626262"></div>
<div class="a" style="left:136px;top:608.07px;width:15px;height:0.7px;background:#5e5e5e"></div>
<div class="a" style="left:147px;top:620.42px;width:4px;height:0.6px;background:#626262"></div>
<div class="a" style="left:136px;top:632.78px;width:15px;height:0.7px;background:#5e5e5e"></div>
<div class="a" style="left:147px;top:645.14px;width:4px;height:0.6px;background:#626262"></div>
<div class="a" style="left:136px;top:657.49px;width:15px;height:0.7px;background:#5e5e5e"></div>
<div class="a" style="left:147px;top:669.85px;width:4px;height:0.6px;background:#626262"></div>
<div class="a" style="left:136.5px;top:142.10px;font-size:6.8px;line-height:5.3px;color:#959595;width:8px;text-align:center">0</div>
<div class="a" style="left:136.5px;top:166.81px;font-size:6.8px;line-height:5.3px;color:#959595;width:8px;text-align:center">2<br>0<br>0</div>
<div class="a" style="left:136.5px;top:191.53px;font-size:6.8px;line-height:5.3px;color:#959595;width:8px;text-align:center">4<br>0<br>0</div>
<div class="a" style="left:136.5px;top:216.24px;font-size:6.8px;line-height:5.3px;color:#959595;width:8px;text-align:center">6<br>0<br>0</div>
<div class="a" style="left:136.5px;top:240.96px;font-size:6.8px;line-height:5.3px;color:#959595;width:8px;text-align:center">8<br>0<br>0</div>
<div class="a" style="left:136.5px;top:265.67px;font-size:6.8px;line-height:5.3px;color:#959595;width:8px;text-align:center">1<br>0<br>0<br>0</div>
<div class="a" style="left:136.5px;top:290.38px;font-size:6.8px;line-height:5.3px;color:#959595;width:8px;text-align:center">1<br>2<br>0<br>0</div>
<div class="a" style="left:136.5px;top:315.10px;font-size:6.8px;line-height:5.3px;color:#959595;width:8px;text-align:center">1<br>4<br>0<br>0</div>
<div class="a" style="left:136.5px;top:339.81px;font-size:6.8px;line-height:5.3px;color:#959595;width:8px;text-align:center">1<br>6<br>0<br>0</div>
<div class="a" style="left:136.5px;top:364.53px;font-size:6.8px;line-height:5.3px;color:#959595;width:8px;text-align:center">1<br>8<br>0<br>0</div>
<div class="a" style="left:136.5px;top:389.24px;font-size:6.8px;line-height:5.3px;color:#959595;width:8px;text-align:center">2<br>0<br>0<br>0</div>
<div class="a" style="left:136.5px;top:413.95px;font-size:6.8px;line-height:5.3px;color:#959595;width:8px;text-align:center">2<br>2<br>0<br>0</div>
<div class="a" style="left:136.5px;top:438.67px;font-size:6.8px;line-height:5.3px;color:#959595;width:8px;text-align:center">2<br>4<br>0<br>0</div>
<div class="a" style="left:136.5px;top:463.38px;font-size:6.8px;line-height:5.3px;color:#959595;width:8px;text-align:center">2<br>6<br>0<br>0</div>
<div class="a" style="left:136.5px;top:488.10px;font-size:6.8px;line-height:5.3px;color:#959595;width:8px;text-align:center">2<br>8<br>0<br>0</div>
<div class="a" style="left:136.5px;top:512.81px;font-size:6.8px;line-height:5.3px;color:#959595;width:8px;text-align:center">3<br>0<br>0<br>0</div>
<div class="a" style="left:136.5px;top:537.52px;font-size:6.8px;line-height:5.3px;color:#959595;width:8px;text-align:center">3<br>2<br>0<br>0</div>
<div class="a" style="left:136.5px;top:562.24px;font-size:6.8px;line-height:5.3px;color:#959595;width:8px;text-align:center">3<br>4<br>0<br>0</div>
<div class="a" style="left:136.5px;top:586.95px;font-size:6.8px;line-height:5.3px;color:#959595;width:8px;text-align:center">3<br>6<br>0<br>0</div>
<div class="a" style="left:136.5px;top:611.67px;font-size:6.8px;line-height:5.3px;color:#959595;width:8px;text-align:center">3<br>8<br>0<br>0</div>
<div class="a" style="left:136.5px;top:636.38px;font-size:6.8px;line-height:5.3px;color:#959595;width:8px;text-align:center">4<br>0<br>0<br>0</div>
<div class="a" style="left:136.5px;top:661.09px;font-size:6.8px;line-height:5.3px;color:#959595;width:8px;text-align:center">4<br>2<br>0<br>0</div>
<div class="a" style="left:151px;top:117px;width:796.5px;height:559.5px;background:#282828;"></div>
<div class="a" style="left:135.5px;top:676px;width:812px;height:12.5px;background:#4f4f4f;"></div>
<div class="a" style="left:135.5px;top:676.5px;width:46px;height:12.5px;background:#474747;"></div>
<div class="t" style="left:146px;top:678.80px;font-size:8px;color:#d0d0d0;font-weight:normal;">33.33%</div>
<div class="t" style="left:212px;top:678.80px;font-size:8px;color:#d0d0d0;font-weight:normal;">Doc: 67.3M/62.5M</div>
<div class="t" style="left:310px;top:678.80px;font-size:8px;color:#bbb;font-weight:normal;">&#x276D;</div>
<div class="a" style="left:947.5px;top:117px;width:13px;height:572px;background:#464646;"></div>
<div class="a" style="left:202px;top:138.5px;width:695.7px;height:516.2px;background:#f95656;"></div>
<svg class="a" style="left:246.2px;top:183.5px;overflow:hidden;filter:blur(0.45px)" width="605.8" height="426.5" viewBox="246.2 183.5 605.8 426.5"><defs><linearGradient id="wood" x1="0" y1="0" x2="1" y2="0"><stop offset="0" stop-color="#221e1b"/><stop offset="0.5" stop-color="#27221f"/><stop offset="0.8" stop-color="#34302b"/><stop offset="1" stop-color="#48423c"/></linearGradient><radialGradient id="ap" cx="0.45" cy="0.45" r="0.6"><stop offset="0" stop-color="#d83236"/><stop offset="0.4" stop-color="#b8161e"/><stop offset="0.78" stop-color="#8a0a12"/><stop offset="1" stop-color="#3a0406"/></radialGradient><radialGradient id="apA" cx="0.55" cy="0.3" r="0.72"><stop offset="0" stop-color="#de3c3a"/><stop offset="0.35" stop-color="#c01a20"/><stop offset="0.68" stop-color="#8a0a10"/><stop offset="1" stop-color="#2e0305"/></radialGradient><radialGradient id="apB" cx="0.38" cy="0.47" r="0.7"><stop offset="0" stop-color="#3a2a10"/><stop offset="0.05" stop-color="#8a8a38"/><stop offset="0.11" stop-color="#c8a070"/><stop offset="0.2" stop-color="#e07068"/><stop offset="0.36" stop-color="#c82028"/><stop offset="0.66" stop-color="#8a0a12"/><stop offset="1" stop-color="#2a0204"/></radialGradient><radialGradient id="apC" cx="0.49" cy="0.56" r="0.7"><stop offset="0" stop-color="#3a2a10"/><stop offset="0.05" stop-color="#8a8a38"/><stop offset="0.11" stop-color="#c8a070"/><stop offset="0.2" stop-color="#e07068"/><stop offset="0.36" stop-color="#c82028"/><stop offset="0.66" stop-color="#8a0a12"/><stop offset="1" stop-color="#2a0204"/></radialGradient><radialGradient id="hl" cx="0.5" cy="0.5" r="0.5"><stop offset="0" stop-color="#f8c8d8" stop-opacity="0.6"/><stop offset="1" stop-color="#ff8080" stop-opacity="0"/></radialGradient><radialGradient id="cav" cx="0.5" cy="0.5" r="0.5"><stop offset="0" stop-color="#8a8a30" stop-opacity="0.9"/><stop offset="0.5" stop-color="#7a3a18" stop-opacity="0.6"/><stop offset="1" stop-color="#600808" stop-opacity="0"/></radialGradient><radialGradient id="cup" cx="0.5" cy="0.5" r="0.5"><stop offset="0" stop-color="#e05450"/><stop offset="0.88" stop-color="#dc4642"/><stop offset="1" stop-color="#e87874"/></radialGradient><radialGradient id="shade" cx="0.5" cy="0.5" r="0.5"><stop offset="0" stop-color="#000" stop-opacity="0.55"/><stop offset="1" stop-color="#000" stop-opacity="0"/></radialGradient></defs><rect x="246.2" y="183.5" width="605.8" height="426.5" fill="url(#wood)"/><path d="M246.2 376.4h605.8" stroke="#3a3430" stroke-width="0.5" opacity="0.21"/><path d="M246.2 577.7h605.8" stroke="#3a3430" stroke-width="0.5" opacity="0.19"/><path d="M246.2 400.1h605.8" stroke="#3a3430" stroke-width="0.5" opacity="0.22"/><path d="M246.2 262.3h605.8" stroke="#3a3430" stroke-width="0.5" opacity="0.20"/><path d="M246.2 452.1h605.8" stroke="#3a3430" stroke-width="0.5" opacity="0.26"/><path d="M246.2 223.6h605.8" stroke="#3a3430" stroke-width="0.5" opacity="0.16"/><path d="M246.2 222.2h605.8" stroke="#3a3430" stroke-width="0.5" opacity="0.26"/><path d="M246.2 479.3h605.8" stroke="#3a3430" stroke-width="0.5" opacity="0.11"/><path d="M246.2 602.4h605.8" stroke="#3a3430" stroke-width="0.5" opacity="0.29"/><path d="M246.2 462.4h605.8" stroke="#3a3430" stroke-width="0.5" opacity="0.22"/><path d="M246.2 250.7h605.8" stroke="#3a3430" stroke-width="0.5" opacity="0.10"/><path d="M246.2 408.9h605.8" stroke="#3a3430" stroke-width="0.5" opacity="0.11"/><path d="M246.2 264.6h605.8" stroke="#3a3430" stroke-width="0.5" opacity="0.15"/><path d="M246.2 196.3h605.8" stroke="#3a3430" stroke-width="0.5" opacity="0.19"/><path d="M246.2 371.4h605.8" stroke="#3a3430" stroke-width="0.5" opacity="0.27"/><path d="M246.2 404.9h605.8" stroke="#3a3430" stroke-width="0.5" opacity="0.23"/><path d="M246.2 396.7h605.8" stroke="#3a3430" stroke-width="0.5" opacity="0.23"/><path d="M246.2 378.6h605.8" stroke="#3a3430" stroke-width="0.5" opacity="0.16"/><path d="M246.2 609.0h605.8" stroke="#3a3430" stroke-width="0.5" opacity="0.30"/><path d="M246.2 541.9h605.8" stroke="#3a3430" stroke-width="0.5" opacity="0.24"/><path d="M246.2 318.0h605.8" stroke="#3a3430" stroke-width="0.5" opacity="0.15"/><path d="M246.2 306.8h605.8" stroke="#3a3430" stroke-width="0.5" opacity="0.11"/><path d="M246.2 510.3h605.8" stroke="#3a3430" stroke-width="0.5" opacity="0.18"/><path d="M246.2 544.6h605.8" stroke="#3a3430" stroke-width="0.5" opacity="0.18"/><path d="M246.2 592.1h605.8" stroke="#3a3430" stroke-width="0.5" opacity="0.27"/><path d="M246.2 183.7h605.8" stroke="#3a3430" stroke-width="0.5" opacity="0.14"/><path d="M246.2 571.7h605.8" stroke="#3a3430" stroke-width="0.5" opacity="0.19"/><path d="M246.2 601.6h605.8" stroke="#3a3430" stroke-width="0.5" opacity="0.18"/><path d="M246.2 214.7h605.8" stroke="#3a3430" stroke-width="0.5" opacity="0.23"/><path d="M246.2 515.5h605.8" stroke="#3a3430" stroke-width="0.5" opacity="0.15"/><path d="M246.2 220.7h605.8" stroke="#3a3430" stroke-width="0.5" opacity="0.17"/><path d="M246.2 594.7h605.8" stroke="#3a3430" stroke-width="0.5" opacity="0.25"/><path d="M246.2 233.8h605.8" stroke="#3a3430" stroke-width="0.5" opacity="0.15"/><path d="M246.2 226.6h605.8" stroke="#3a3430" stroke-width="0.5" opacity="0.11"/><path d="M246.2 523.4h605.8" stroke="#3a3430" stroke-width="0.5" opacity="0.14"/><path d="M246.2 422.0h605.8" stroke="#3a3430" stroke-width="0.5" opacity="0.19"/><path d="M246.2 264.8h605.8" stroke="#3a3430" stroke-width="0.5" opacity="0.25"/><path d="M246.2 239.4h605.8" stroke="#3a3430" stroke-width="0.5" opacity="0.23"/><path d="M246.2 233.2h605.8" stroke="#3a3430" stroke-width="0.5" opacity="0.18"/><path d="M246.2 274.3h605.8" stroke="#3a3430" stroke-width="0.5" opacity="0.15"/><path d="M246.2 597.6h605.8" stroke="#3a3430" stroke-width="0.5" opacity="0.26"/><path d="M246.2 313.2h605.8" stroke="#3a3430" stroke-width="0.5" opacity="0.28"/><path d="M246.2 273.4h605.8" stroke="#3a3430" stroke-width="0.5" opacity="0.18"/><path d="M246.2 547.9h605.8" stroke="#3a3430" stroke-width="0.5" opacity="0.23"/><path d="M246.2 226.3h605.8" stroke="#3a3430" stroke-width="0.5" opacity="0.30"/><path d="M246.2 274.4h605.8" stroke="#3a3430" stroke-width="0.5" opacity="0.15"/><path d="M246.2 513.1h605.8" stroke="#3a3430" stroke-width="0.5" opacity="0.17"/><path d="M246.2 309.9h605.8" stroke="#3a3430" stroke-width="0.5" opacity="0.11"/><path d="M246.2 221.9h605.8" stroke="#3a3430" stroke-width="0.5" opacity="0.22"/><path d="M246.2 287.1h605.8" stroke="#3a3430" stroke-width="0.5" opacity="0.22"/><path d="M246.2 342.0h605.8" stroke="#3a3430" stroke-width="0.5" opacity="0.19"/><path d="M246.2 592.6h605.8" stroke="#3a3430" stroke-width="0.5" opacity="0.20"/><path d="M246.2 428.6h605.8" stroke="#3a3430" stroke-width="0.5" opacity="0.27"/><path d="M246.2 261.5h605.8" stroke="#3a3430" stroke-width="0.5" opacity="0.13"/><path d="M246.2 570.9h605.8" stroke="#3a3430" stroke-width="0.5" opacity="0.26"/><path d="M246.2 289.9h605.8" stroke="#3a3430" stroke-width="0.5" opacity="0.14"/><path d="M246.2 498.9h605.8" stroke="#3a3430" stroke-width="0.5" opacity="0.29"/><path d="M246.2 267.3h605.8" stroke="#3a3430" stroke-width="0.5" opacity="0.29"/><path d="M246.2 559.8h605.8" stroke="#3a3430" stroke-width="0.5" opacity="0.22"/><path d="M246.2 363.3h605.8" stroke="#3a3430" stroke-width="0.5" opacity="0.12"/><path d="M246.2 266h605.8" stroke="#15120f" stroke-width="1.2" opacity="0.5"/><path d="M246.2 352h605.8" stroke="#15120f" stroke-width="1.2" opacity="0.5"/><path d="M246.2 436h605.8" stroke="#15120f" stroke-width="1.2" opacity="0.5"/><path d="M246.2 522h605.8" stroke="#15120f" stroke-width="1.2" opacity="0.5"/><path d="M246.2 596h605.8" stroke="#15120f" stroke-width="1.2" opacity="0.5"/><circle cx="763.6" cy="372.9" r="0.7" fill="#c8ccd8" opacity="0.69"/><circle cx="783.6" cy="346.5" r="1.1" fill="#c8ccd8" opacity="0.46"/><circle cx="776.1" cy="326.9" r="0.6" fill="#c8ccd8" opacity="0.43"/><circle cx="811.5" cy="352.0" r="1.1" fill="#c8ccd8" opacity="0.45"/><circle cx="844.4" cy="228.8" r="0.5" fill="#c8ccd8" opacity="0.45"/><circle cx="801.0" cy="201.5" r="0.7" fill="#c8ccd8" opacity="0.50"/><circle cx="812.6" cy="215.0" r="0.9" fill="#c8ccd8" opacity="0.79"/><circle cx="850.2" cy="314.8" r="1.2" fill="#c8ccd8" opacity="0.62"/><circle cx="772.9" cy="196.7" r="0.5" fill="#c8ccd8" opacity="0.80"/><circle cx="824.5" cy="372.9" r="0.5" fill="#c8ccd8" opacity="0.65"/><circle cx="804.4" cy="328.8" r="0.8" fill="#c8ccd8" opacity="0.85"/><circle cx="766.9" cy="293.8" r="1.2" fill="#c8ccd8" opacity="0.80"/><circle cx="827.8" cy="323.7" r="1.3" fill="#c8ccd8" opacity="0.80"/><circle cx="792.4" cy="320.2" r="1.4" fill="#c8ccd8" opacity="0.78"/><circle cx="798.4" cy="340.2" r="1.4" fill="#c8ccd8" opacity="0.62"/><circle cx="817.5" cy="262.6" r="1.1" fill="#c8ccd8" opacity="0.63"/><circle cx="767.4" cy="311.5" r="1.5" fill="#c8ccd8" opacity="0.78"/><circle cx="827.0" cy="263.8" r="1.2" fill="#c8ccd8" opacity="0.62"/><circle cx="800.5" cy="349.3" r="0.6" fill="#c8ccd8" opacity="0.71"/><circle cx="762.7" cy="304.2" r="1.0" fill="#c8ccd8" opacity="0.43"/><circle cx="824.2" cy="284.5" r="1.1" fill="#c8ccd8" opacity="0.81"/><circle cx="783.5" cy="192.1" r="0.8" fill="#c8ccd8" opacity="0.67"/><circle cx="778.6" cy="222.2" r="1.4" fill="#c8ccd8" opacity="0.66"/><circle cx="800.7" cy="359.4" r="0.8" fill="#c8ccd8" opacity="0.67"/><circle cx="778.3" cy="271.9" r="1.3" fill="#c8ccd8" opacity="0.80"/><circle cx="841.0" cy="263.0" r="1.1" fill="#c8ccd8" opacity="0.47"/><circle cx="772.5" cy="284.3" r="1.3" fill="#c8ccd8" opacity="0.77"/><circle cx="825.4" cy="370.5" r="0.8" fill="#c8ccd8" opacity="0.39"/><circle cx="801.5" cy="242.3" r="0.7" fill="#c8ccd8" opacity="0.53"/><circle cx="817.6" cy="283.8" r="0.8" fill="#c8ccd8" opacity="0.76"/><circle cx="850.3" cy="276.0" r="0.6" fill="#c8ccd8" opacity="0.32"/><circle cx="840.3" cy="197.9" r="1.2" fill="#c8ccd8" opacity="0.61"/><circle cx="788.4" cy="340.4" r="0.5" fill="#c8ccd8" opacity="0.37"/><circle cx="801.8" cy="194.7" r="1.3" fill="#c8ccd8" opacity="0.43"/><circle cx="773.0" cy="198.9" r="1.1" fill="#c8ccd8" opacity="0.55"/><circle cx="818.0" cy="314.5" r="1.3" fill="#c8ccd8" opacity="0.83"/><circle cx="823.0" cy="227.9" r="1.0" fill="#c8ccd8" opacity="0.40"/><circle cx="761.0" cy="279.7" r="1.2" fill="#c8ccd8" opacity="0.40"/><circle cx="785.1" cy="255.7" r="1.2" fill="#c8ccd8" opacity="0.59"/><circle cx="816.5" cy="333.7" r="0.9" fill="#c8ccd8" opacity="0.74"/><circle cx="843.4" cy="206.6" r="1.4" fill="#c8ccd8" opacity="0.70"/><circle cx="772.0" cy="276.2" r="1.1" fill="#c8ccd8" opacity="0.80"/><circle cx="794.7" cy="298.1" r="1.4" fill="#c8ccd8" opacity="0.74"/><circle cx="846.9" cy="278.1" r="1.2" fill="#c8ccd8" opacity="0.41"/><circle cx="826.4" cy="345.5" r="1.1" fill="#c8ccd8" opacity="0.69"/><circle cx="779.6" cy="361.0" r="1.5" fill="#c8ccd8" opacity="0.84"/><circle cx="809.4" cy="340.2" r="0.8" fill="#c8ccd8" opacity="0.80"/><circle cx="838.7" cy="256.2" r="0.6" fill="#c8ccd8" opacity="0.54"/><circle cx="810.6" cy="336.0" r="1.0" fill="#c8ccd8" opacity="0.32"/><circle cx="834.4" cy="202.2" r="1.3" fill="#c8ccd8" opacity="0.40"/><circle cx="790.8" cy="339.7" r="0.6" fill="#c8ccd8" opacity="0.38"/><circle cx="807.5" cy="327.5" r="1.3" fill="#c8ccd8" opacity="0.68"/><circle cx="847.0" cy="283.6" r="1.4" fill="#c8ccd8" opacity="0.35"/><circle cx="780.4" cy="290.1" r="0.8" fill="#c8ccd8" opacity="0.70"/><circle cx="818.8" cy="289.3" r="1.3" fill="#c8ccd8" opacity="0.61"/><circle cx="788.7" cy="262.4" r="1.3" fill="#c8ccd8" opacity="0.80"/><circle cx="779.2" cy="351.6" r="1.5" fill="#c8ccd8" opacity="0.59"/><circle cx="812.7" cy="228.2" r="1.0" fill="#c8ccd8" opacity="0.58"/><circle cx="815.7" cy="195.3" r="1.5" fill="#c8ccd8" opacity="0.58"/><circle cx="796.9" cy="342.2" r="1.1" fill="#c8ccd8" opacity="0.57"/><circle cx="823.6" cy="202.5" r="1.0" fill="#c8ccd8" opacity="0.53"/><circle cx="848.0" cy="365.4" r="0.8" fill="#c8ccd8" opacity="0.56"/><circle cx="771.7" cy="272.4" r="1.3" fill="#c8ccd8" opacity="0.80"/><circle cx="803.8" cy="250.3" r="0.7" fill="#c8ccd8" opacity="0.64"/><circle cx="845.1" cy="214.6" r="1.3" fill="#c8ccd8" opacity="0.31"/><circle cx="777.9" cy="233.2" r="1.2" fill="#c8ccd8" opacity="0.48"/><circle cx="792.7" cy="307.8" r="0.6" fill="#c8ccd8" opacity="0.70"/><circle cx="771.3" cy="287.0" r="0.8" fill="#c8ccd8" opacity="0.41"/><circle cx="808.8" cy="273.0" r="0.9" fill="#c8ccd8" opacity="0.53"/><circle cx="808.7" cy="220.3" r="0.7" fill="#c8ccd8" opacity="0.65"/><circle cx="818.7" cy="290.6" r="1.4" fill="#c8ccd8" opacity="0.64"/><circle cx="838.8" cy="234.2" r="1.2" fill="#c8ccd8" opacity="0.75"/><circle cx="843.0" cy="250.0" r="0.8" fill="#c8ccd8" opacity="0.81"/><circle cx="780.1" cy="379.7" r="1.4" fill="#c8ccd8" opacity="0.37"/><circle cx="782.0" cy="328.0" r="0.8" fill="#c8ccd8" opacity="0.35"/><circle cx="836.6" cy="270.1" r="1.3" fill="#c8ccd8" opacity="0.37"/><circle cx="797.1" cy="320.2" r="0.5" fill="#c8ccd8" opacity="0.41"/><circle cx="822.8" cy="363.2" r="1.5" fill="#c8ccd8" opacity="0.36"/><circle cx="806.5" cy="334.0" r="1.0" fill="#c8ccd8" opacity="0.68"/><circle cx="777.4" cy="203.4" r="0.6" fill="#c8ccd8" opacity="0.32"/><circle cx="810.8" cy="287.8" r="1.1" fill="#c8ccd8" opacity="0.38"/><circle cx="777.0" cy="228.7" r="1.3" fill="#c8ccd8" opacity="0.84"/><circle cx="845.3" cy="208.1" r="0.6" fill="#c8ccd8" opacity="0.82"/><circle cx="802.5" cy="335.3" r="0.8" fill="#c8ccd8" opacity="0.56"/><circle cx="807.4" cy="271.7" r="1.1" fill="#c8ccd8" opacity="0.31"/><circle cx="824.5" cy="350.4" r="0.7" fill="#c8ccd8" opacity="0.55"/><circle cx="828.0" cy="267.0" r="0.7" fill="#c8ccd8" opacity="0.39"/><circle cx="807.2" cy="192.9" r="1.4" fill="#c8ccd8" opacity="0.74"/><circle cx="824.8" cy="353.5" r="1.1" fill="#c8ccd8" opacity="0.52"/><circle cx="815.2" cy="285.8" r="1.5" fill="#c8ccd8" opacity="0.74"/><linearGradient id="wb" x1="0" y1="0" x2="0" y2="1"><stop offset="0" stop-color="#3a332d" stop-opacity="0"/><stop offset="0.4" stop-color="#3a332d" stop-opacity="0.6"/><stop offset="1" stop-color="#3a332d" stop-opacity="0.75"/></linearGradient><rect x="246.2" y="500" width="605.8" height="111" fill="url(#wb)"/><ellipse cx="440" cy="260" rx="120" ry="80" fill="url(#shade)"/><ellipse cx="640" cy="225" rx="90" ry="60" fill="url(#shade)"/><path d="M248.5 196.3l-11.6 10.8M251.6 203.9l14.9 2.1M253.5 208.8l11.7 5.8M259.3 224.2l-6.8 12.1M269.6 196.2l6.3 7.3M267.1 210.1l-13.7 9.9M264.4 226.0l-15.1 7.9M337.7 197.2l14.9 -0.4M339.0 198.5l1.4 12.9M341.0 200.7l16.1 -0.5M364.4 226.8l22.4 -2.4M365.5 228.1l22.4 0.2M365.8 228.4l20.2 1.6M367.4 230.3l20.5 -2.6M270.5 241.0l12.7 13.9M281.7 241.0l16.3 -24.3M356.8 241.0l21.6 -19.2M478.4 191.4l10.4 -9.1M484.0 193.6l11.3 -6.8M522.9 204.6l4.6 17.7M533.6 206.7l8.1 -12.9M537.0 207.4l9.5 12.2M538.0 207.6l6.4 -8.8M550.0 198.5l13.2 -3.1M555.1 204.2l0.7 19.7M561.5 211.2l21.7 4.5M524.6 250.8l16.9 24.3M553.4 251.7l15.0 -18.6M557.3 251.8l11.8 -25.3M578.4 252.4l15.3 -13.3M611.7 253.9l24.7 -17.2M677.3 258.8l13.5 16.1M701.6 260.6l12.2 23.9M704.8 260.8l13.1 -17.8M744.5 263.7l12.2 -15.1M751.0 264.2l20.5 22.9M769.8 265.5l12.3 -11.7M771.4 265.6l14.6 -27.1M785.9 266.7l10.7 15.3M634.2 193.0l-8.8 18.9M637.6 196.6l23.7 -5.8M649.4 209.3l-0.9 22.2M653.7 214.2l-5.2 20.8M654.5 215.2l17.0 -0.4M667.2 229.7l-7.6 17.0M670.1 233.1l22.6 -2.3M679.5 243.0l16.4 -6.8M689.5 253.4l-5.5 14.2M615.7 289.8l2.5 17.8M645.3 306.6l18.5 -4.9M657.9 317.7l16.0 -5.8M747.2 303.5l-12.6 15.6M754.1 323.0l-9.7 15.8M761.6 341.2l14.5 1.7M293.2 403.8l13.7 5.1M294.7 402.8l19.2 4.9M304.3 396.7l18.1 4.0M311.5 392.1l-0.0 -13.4M313.9 390.5l21.1 7.3M315.5 389.5l19.5 6.0M322.1 385.5l18.5 5.7M323.8 384.9l6.1 -14.9M331.3 381.9l0.4 -15.1M344.5 376.6l12.7 5.5M356.4 349.2l10.2 -2.0M371.6 356.8l0.4 15.4M374.0 358.0l13.8 -6.4M376.8 359.4l4.4 11.6M390.9 366.4l8.2 -6.6M396.6 369.3l-0.1 11.3M428.7 391.0l11.8 -1.4M315.3 490.0l15.2 12.1M329.6 486.9l12.6 15.6M353.5 481.5l19.1 13.4M360.4 480.0l2.3 -14.3M361.9 479.7l11.2 -22.9M363.8 479.3l16.3 7.1M391.9 467.4l14.4 3.8M406.5 455.1l3.4 -18.6M418.1 445.2l21.3 2.3M455.7 415.1l-4.8 -19.3M401.1 569.3l15.9 6.4M402.8 580.6l9.4 9.3M361.1 524.0l8.3 11.9M359.9 527.1l-19.6 6.9M355.0 539.7l-14.7 8.4M351.2 549.4l-11.4 5.4M335.1 582.9l-19.8 4.8M333.7 585.6l-17.0 3.9M272.5 430.6l14.3 6.7M272.8 434.3l-12.5 11.2M275.0 461.2l10.8 12.4M276.3 476.0l-13.5 8.1M277.2 481.5l-10.5 16.0M277.7 484.5l15.6 9.2M277.8 485.1l-6.8 13.9M279.0 492.4l9.6 5.7M279.8 497.3l11.6 8.6M283.3 519.0l14.8 5.8" stroke="#5a9074" stroke-width="1.6" fill="none" stroke-linecap="round"/><path d="M246.1 190.3l-9.6 10.8M249.1 197.6l-7.2 8.6M249.3 198.2l-6.4 9.3M250.7 201.8l-5.1 19.0M256.7 217.1l15.6 3.0M258.0 220.8l-6.5 16.4M260.2 226.8l-13.2 13.4M261.3 230.1l15.1 5.4M270.6 190.4l8.8 10.0M268.7 200.9l6.4 7.9M266.2 215.5l8.1 7.1M265.0 222.1l5.6 8.5M264.6 224.6l6.8 12.1M264.1 227.4l6.4 10.1M324.3 183.3l14.3 -1.4M324.9 183.9l-4.5 15.2M327.6 186.7l19.5 -0.7M330.6 189.9l-5.0 15.9M334.1 193.5l18.1 -4.5M334.8 194.2l-4.4 12.6M338.8 198.4l2.0 15.0M341.6 201.2l-6.8 17.5M343.6 203.4l18.1 -7.9M350.7 210.8l19.6 1.4M356.7 217.9l15.9 -4.7M362.0 224.0l21.4 3.3M369.4 232.6l0.9 13.2M370.1 233.4l-7.2 12.8M371.7 235.3l22.4 1.8M246.8 241.0l6.1 -16.5M251.7 241.0l16.2 -16.9M261.1 241.0l10.8 -22.5M286.0 241.0l22.6 16.2M290.0 241.0l7.8 16.5M293.7 241.0l12.7 -12.3M299.5 241.0l17.7 -12.5M299.5 241.0l19.8 14.0M326.3 241.0l14.9 -20.2M334.1 241.0l11.1 27.2M349.0 241.0l12.0 -26.6M354.2 241.0l18.4 -19.0M355.8 241.0l18.9 -19.1M366.5 241.0l15.4 19.6M342.4 287.9l14.0 -10.1M362.0 293.5l7.0 19.6M363.6 293.9l11.3 -13.0M389.4 190.8l14.5 -12.0M413.9 198.2l11.4 -7.3M433.3 204.0l8.6 -10.7M450.0 209.0l4.6 14.8M457.7 211.3l17.1 -12.1M470.4 188.2l5.5 16.2M488.7 195.5l15.0 -3.9M495.2 198.1l5.1 11.1M500.6 200.1l12.7 -11.6M522.9 204.6l11.8 -7.7M526.9 205.4l8.9 16.5M557.8 207.1l21.1 -0.9M558.1 207.5l19.3 2.8M564.6 214.5l17.4 -5.2M565.9 216.4l-3.9 19.5M568.3 219.9l13.7 -3.0M571.2 224.2l18.9 0.5M571.2 224.2l-5.4 11.9M577.3 233.1l16.9 -0.2M497.1 250.1l14.1 -10.0M497.1 250.1l9.4 22.5M506.7 250.3l10.2 17.6M516.7 250.6l12.2 -21.9M539.5 251.3l18.8 -13.6M552.2 251.6l21.1 -16.0M561.9 251.9l16.6 -16.9M581.3 252.5l8.6 14.8M587.1 252.6l8.2 15.9M588.0 252.7l21.9 19.2M592.4 252.8l12.3 -19.8M595.7 252.9l12.2 17.7M602.7 253.2l18.5 24.2M615.5 254.2l17.4 -17.7M616.7 254.3l13.3 -19.4M624.5 254.8l10.5 -18.5M632.0 255.4l13.1 -19.9M647.0 256.5l17.0 -19.2M650.3 256.8l18.8 19.8M654.2 257.1l11.7 -16.4M656.9 257.3l13.9 -16.2M662.2 257.7l12.2 26.0M682.4 259.2l9.1 19.0M687.6 259.6l10.2 25.1M689.2 259.7l17.5 -12.1M702.3 260.6l14.8 17.0M717.0 261.7l14.6 -23.4M721.9 262.0l7.5 22.1M726.3 262.4l19.1 19.4M736.3 263.1l16.8 -12.0M758.6 264.7l14.9 15.6M776.1 266.0l14.6 20.4M627.5 185.7l24.1 -2.7M628.5 186.7l-7.9 20.9M632.5 191.1l16.8 -5.8M633.6 192.3l22.7 -2.1M633.6 192.3l-0.7 14.0M640.3 199.5l-8.0 18.5M642.2 201.5l-1.8 14.5M645.8 205.4l-6.8 21.0M648.9 208.8l18.3 -4.6M652.2 212.5l-2.5 15.0M653.7 214.2l22.9 3.2M660.3 221.8l-3.5 22.0M669.1 231.9l23.0 -8.6M676.6 239.9l-6.2 16.2M681.3 244.8l1.9 18.0M689.1 252.9l16.9 -3.5M690.0 254.0l-3.1 14.1M695.0 195.7l18.8 1.8M612.6 288.3l11.8 -5.1M619.5 291.7l-0.2 19.1M628.0 296.0l2.9 18.0M631.2 297.6l7.0 15.2M637.1 300.5l14.3 -2.8M654.5 314.7l-0.7 11.5M655.4 315.5l17.9 -2.3M657.9 317.7l-5.6 15.3M745.1 297.4l-10.0 12.8M745.8 299.3l-6.8 11.7M747.7 305.2l12.9 2.8M748.1 306.4l12.9 4.5M749.3 309.8l-10.4 17.5M757.8 331.8l-5.2 10.6M758.4 333.4l10.3 6.4M759.6 336.3l13.9 3.1M265.5 421.5l-0.5 -16.1M265.7 421.4l5.9 -20.1M278.7 413.1l4.9 -20.3M287.4 407.5l3.8 -20.6M309.7 393.3l13.0 4.1M312.7 391.3l7.8 -20.5M312.7 391.3l15.9 1.3M334.6 380.6l6.5 -19.3M339.8 378.5l0.2 -13.3M344.5 376.6l8.6 -13.6M350.7 374.1l10.0 -19.8M369.8 355.9l-1.5 12.9M407.8 375.8l-0.4 10.3M412.4 379.1l18.0 -4.4M415.1 381.1l14.3 -0.0M415.4 381.4l17.5 -1.3M416.4 382.1l10.9 -2.3M417.4 382.8l3.4 12.8M316.6 489.8l16.3 14.1M317.5 489.6l11.4 -15.6M327.4 487.3l14.7 16.4M329.6 486.9l10.2 -13.6M340.1 484.5l4.1 -16.7M342.7 484.0l10.6 15.5M346.4 483.1l3.3 -14.6M358.9 480.3l20.1 15.1M360.4 480.0l14.6 9.6M365.8 478.8l12.0 15.1M370.6 477.8l6.0 -16.0M383.3 474.7l-2.3 -20.6M385.9 472.5l-5.7 -18.5M400.5 460.2l22.9 11.2M421.2 442.6l17.5 5.5M423.9 440.4l19.3 3.1M426.7 438.0l15.4 3.8M428.1 436.8l21.9 -0.2M431.8 433.8l0.8 -26.3M440.2 427.2l20.8 9.0M441.4 426.3l-0.8 -14.7M452.5 417.6l20.5 8.6M465.1 407.8l3.5 -16.4M468.2 405.3l19.7 11.1M394.5 492.0l14.7 14.2M394.6 494.1l16.0 8.6M394.8 498.2l-16.9 8.9M395.1 504.7l7.8 9.7M395.5 512.4l-14.5 8.3M395.8 518.5l-9.6 11.9M396.0 521.8l14.1 13.1M396.7 535.8l-10.8 6.8M396.8 538.8l-13.5 11.8M397.9 548.1l16.4 12.6M400.0 562.1l-18.4 11.3M400.2 563.1l-11.8 17.0M347.3 558.4l-12.2 0.0M346.0 560.9l8.7 17.3M344.7 563.5l-19.7 -1.1M342.7 567.7l-13.4 0.3M340.7 571.7l-13.1 3.4M339.8 573.4l3.0 16.7M339.8 573.4l-16.8 -0.1M337.7 577.6l7.2 16.7M272.2 427.6l-11.7 11.1M272.6 432.3l8.5 8.1M272.9 435.8l10.5 7.6M274.5 455.6l-16.4 9.2M274.7 457.7l7.5 7.8M274.8 458.8l7.9 9.2M275.4 467.2l12.1 5.6M275.5 467.8l-13.2 9.4M277.0 480.3l17.3 3.4M278.3 488.1l-15.4 9.3M279.0 492.4l-14.0 13.1M279.5 495.7l10.1 8.2M279.6 496.2l11.2 10.8M281.6 508.9l-9.2 7.4M282.4 513.8l12.0 6.1M283.7 521.8l12.1 3.5M284.3 525.4l-6.9 10.8M285.9 535.3l13.8 4.8M475.7 505.8l-12.7 -1.1M474.0 509.4l-12.3 1.9M467.1 524.0l3.9 16.5M467.1 524.0l-15.9 3.1M250.7 482.7l-8.8 8.5M253.4 530.4l9.9 9.9M254.9 555.0l-12.4 9.2" stroke="#3f7054" stroke-width="1.6" fill="none" stroke-linecap="round"/><path d="M246.1 190.3l17.5 0.4M246.8 191.9l17.5 2.7M248.0 195.0l16.8 3.2M250.7 201.8l17.8 6.3M252.8 207.0l-5.6 18.0M253.0 207.6l12.4 4.7M255.6 214.0l14.6 5.8M255.6 214.1l-8.2 12.7M258.8 222.8l13.1 8.6M258.8 222.8l-3.7 10.9M259.3 224.2l15.3 2.4M259.8 225.7l14.8 4.9M260.2 226.8l18.1 3.9M260.5 227.6l16.4 5.1M271.2 187.2l-11.1 5.9M271.1 187.9l-9.7 6.4M270.9 189.3l13.1 9.7M268.1 204.3l-14.2 7.2M267.9 205.6l8.0 13.5M266.9 211.1l7.6 7.3M265.9 217.2l-15.5 8.3M265.0 222.1l-14.6 2.9M264.5 225.2l7.7 14.9M264.1 227.4l-10.8 2.7M326.1 185.2l13.6 -3.4M328.8 188.0l-0.3 15.2M331.1 190.3l-1.2 19.5M332.8 192.1l-2.3 20.6M336.1 195.6l-2.7 13.2M336.8 196.2l14.3 0.5M337.7 197.2l2.3 17.6M338.8 198.4l17.3 1.8M341.6 201.2l16.0 2.5M347.9 207.8l14.9 -3.6M349.5 209.5l-4.2 18.1M358.6 220.0l18.3 -2.4M359.5 221.1l20.1 1.2M359.5 221.1l-7.2 21.6M359.7 221.3l-2.0 15.5M361.0 222.9l13.4 2.8M361.0 222.9l0.5 17.3M371.7 235.3l-8.4 15.1M373.7 237.6l20.3 -5.0M373.7 237.6l-3.1 20.8M260.5 241.0l7.5 -20.3M264.8 241.0l11.9 -15.4M274.3 241.0l8.3 18.3M278.1 241.0l10.3 14.2M278.9 241.0l10.9 17.8M281.7 241.0l7.5 20.2M284.2 241.0l9.5 17.2M291.0 241.0l16.0 -18.5M310.6 241.0l15.2 17.8M314.4 241.0l15.8 -18.0M325.0 241.0l7.6 -16.7M329.7 241.0l9.1 -14.6M331.4 241.0l9.0 -23.8M338.8 241.0l15.0 -21.7M355.8 241.0l15.3 18.9M362.5 241.0l21.0 -19.7M367.2 241.0l11.0 -13.4M367.2 241.0l20.0 18.8M311.3 279.4l14.1 -13.6M316.5 280.9l10.9 -14.5M333.1 285.4l17.6 -11.4M339.5 287.1l13.5 -11.1M348.4 289.6l6.1 17.0M367.6 295.1l3.2 15.0M373.2 296.7l15.3 -7.3M404.3 195.3l6.1 19.9M452.0 209.6l6.3 11.4M473.6 189.4l14.6 -12.9M474.6 189.8l3.8 10.2M475.6 190.2l10.9 -11.9M481.6 192.6l8.4 15.4M484.3 193.7l6.3 15.6M487.8 195.1l18.1 -5.0M493.0 197.2l-0.0 13.6M502.2 200.4l10.2 -15.4M503.9 200.8l7.3 8.9M506.3 201.3l9.9 -13.7M506.3 201.3l8.5 17.0M509.5 201.9l12.2 -8.2M509.5 201.9l3.0 17.4M510.7 202.1l9.5 11.0M513.8 202.8l9.9 -12.9M517.8 203.6l12.2 13.3M550.0 198.5l1.5 13.1M550.7 199.3l-8.7 17.3M552.9 201.7l-4.3 14.3M556.2 205.3l18.2 -0.9M561.5 211.2l-1.2 12.7M562.6 212.4l-0.3 20.8M564.6 214.5l-9.7 18.9M566.4 217.1l-8.0 18.9M568.7 220.4l-10.9 16.4M569.8 222.0l-4.3 17.3M570.9 223.7l22.3 2.4M573.7 227.8l16.0 -3.0M574.8 229.4l13.5 1.6M575.9 231.0l19.7 -3.5M576.3 231.6l-4.9 11.7M576.6 232.0l17.6 1.8M578.6 234.9l17.7 -1.4M580.0 237.1l13.1 3.6M580.4 237.6l-3.1 12.5M502.6 250.2l16.3 -21.6M510.9 250.5l18.6 -12.9M514.0 250.5l13.7 -27.1M516.7 250.6l20.3 21.2M519.9 250.7l11.9 24.6M524.6 250.8l15.9 -22.0M527.2 250.9l20.3 -21.7M537.6 251.2l8.4 15.4M545.9 251.5l22.3 -19.7M547.6 251.5l10.7 22.8M553.4 251.7l8.9 21.1M554.5 251.7l14.4 13.9M555.8 251.7l17.7 -15.6M555.8 251.7l11.8 22.1M561.1 251.9l16.9 -17.5M568.2 252.1l11.8 -12.1M575.7 252.3l16.6 23.2M582.5 252.5l17.0 24.3M588.0 252.7l21.8 -17.9M588.8 252.7l13.6 16.3M593.1 252.8l9.5 28.0M613.6 254.0l8.7 28.5M614.0 254.1l16.6 -24.9M618.2 254.4l20.4 -16.1M622.3 254.7l6.4 18.7M626.0 255.0l10.5 14.3M627.4 255.1l16.0 -15.4M642.4 256.2l15.6 25.1M644.0 256.3l16.2 16.3M644.8 256.4l11.3 19.6M661.5 257.6l13.9 -14.0M663.3 257.7l7.2 22.6M664.3 257.8l19.0 -18.5M665.7 257.9l9.4 27.0M674.9 258.6l19.3 16.2M678.6 258.9l10.3 18.0M679.5 259.0l10.3 -17.6M681.3 259.1l8.4 16.1M685.8 259.4l11.2 -20.7M689.2 259.7l21.3 19.8M691.4 259.8l22.7 18.8M693.8 260.0l17.5 22.4M697.3 260.3l14.8 -11.8M708.0 261.0l18.7 -13.9M708.7 261.1l16.2 15.9M713.9 261.5l21.1 -20.2M722.4 262.1l12.7 20.9M723.8 262.2l11.0 14.8M729.8 262.6l13.1 23.3M734.0 262.9l16.1 -21.4M734.0 262.9l8.7 29.0M742.5 263.5l13.1 12.0M745.0 263.7l13.6 11.4M746.9 263.9l22.7 -19.3M753.0 264.3l13.8 21.7M766.6 265.3l7.9 15.3M768.2 265.4l14.4 26.8M773.9 265.8l15.4 -10.2M776.6 266.0l8.0 16.1M782.4 266.4l23.3 -17.2M630.0 188.4l-3.0 24.0M631.2 189.7l18.9 4.0M632.1 190.7l19.5 -7.7M637.9 197.0l-0.1 23.1M644.2 203.8l-7.3 24.0M645.4 205.0l19.5 -4.6M647.7 207.5l-6.9 22.4M654.5 215.2l0.5 16.0M655.6 216.4l14.9 1.0M657.8 219.0l16.8 0.2M658.8 220.1l19.2 -6.5M658.8 220.1l-3.4 14.3M663.0 224.9l-11.9 22.0M663.7 225.7l23.6 3.5M663.7 225.7l-0.4 24.3M665.4 227.7l-5.4 15.4M669.7 232.7l-4.0 14.1M671.2 234.3l-2.2 18.0M671.9 235.0l22.5 -9.5M675.0 238.2l2.1 20.3M676.3 239.5l22.4 -6.8M677.3 240.7l-7.9 22.8M683.4 247.0l14.8 2.8M684.1 247.8l18.4 1.5M684.9 248.5l19.6 -7.9M684.9 248.5l-1.5 20.4M685.8 249.5l16.3 -4.5M686.4 250.2l-3.8 21.0M688.0 251.8l17.7 -7.4M689.1 252.9l-6.2 23.7M690.6 254.5l22.3 -7.8M692.2 190.3l-8.5 17.7M696.2 198.1l18.8 3.2M704.2 213.5l-7.4 14.3M704.8 214.6l-3.2 13.6M710.1 223.5l19.7 -1.4M711.2 225.3l-1.8 19.5M600.3 282.2l-1.6 15.4M631.2 297.6l15.9 -10.7M638.7 301.3l13.0 -11.3M639.3 301.6l15.1 -9.5M642.6 304.3l14.4 -0.7M649.2 310.1l3.8 18.6M651.8 312.4l17.4 -4.3M655.4 315.5l0.2 14.9M656.4 316.3l2.7 11.0M664.6 323.5l17.7 -1.7M666.2 324.9l3.6 15.1M669.3 327.6l18.2 -4.5M748.1 306.4l-9.4 13.6M749.3 309.8l17.6 7.9M749.4 310.2l-10.4 9.7M750.4 313.1l-10.3 11.5M750.8 314.4l17.4 5.4M751.7 317.0l-3.9 11.5M759.0 334.7l17.2 5.2M760.0 337.1l13.1 1.1M761.0 339.5l11.8 6.0M248.4 432.5l-0.6 -13.1M251.1 430.7l12.3 3.4M254.2 428.8l16.6 10.0M254.9 428.3l13.1 8.1M258.5 426.0l3.7 -13.0M259.3 425.5l-4.8 -21.6M260.2 424.9l-2.1 -18.8M260.2 424.9l19.5 10.8M261.1 424.4l15.6 0.7M263.2 423.0l5.2 -14.2M264.3 422.3l4.1 -18.8M264.3 422.3l15.5 4.2M265.7 421.4l19.0 1.9M275.4 415.2l20.7 4.1M276.5 414.5l10.7 7.9M277.4 413.9l13.8 7.7M280.0 412.3l10.6 7.0M287.4 407.5l18.3 7.5M289.4 406.2l18.3 4.7M296.5 401.7l-1.2 -16.1M299.7 399.6l3.1 -17.0M309.2 393.6l15.7 6.8M313.2 391.0l15.2 5.3M319.1 387.2l2.4 -12.9M322.0 385.6l16.9 9.5M327.5 383.4l20.8 5.9M329.0 382.8l13.6 8.3M334.6 380.6l16.2 10.9M341.2 377.9l7.3 -12.0M341.2 377.9l11.9 6.4M342.2 377.5l5.6 -11.8M343.9 376.9l11.8 9.1M346.7 375.7l3.1 -14.9M348.3 375.1l9.8 -15.3M348.3 375.1l14.1 10.4M351.3 373.9l13.5 13.4M358.0 350.0l-0.1 18.0M359.7 350.9l-0.2 15.3M363.2 352.6l10.4 -6.5M367.5 354.7l0.3 13.4M370.6 356.3l5.4 16.9M373.8 357.9l13.6 -6.2M383.1 362.5l6.1 13.2M385.7 363.8l-0.2 15.8M386.7 364.4l-1.0 12.8M392.7 367.3l6.2 14.8M393.1 367.6l12.8 -2.3M398.8 370.4l4.2 15.5M409.9 377.3l1.5 11.1M412.4 379.1l-4.7 17.9M413.4 379.8l17.0 -0.2M413.4 379.8l2.5 10.9M417.4 382.8l18.4 -0.8M419.7 384.5l10.0 -6.3M427.3 390.0l1.0 17.6M428.7 391.0l-2.8 13.4M429.7 391.8l16.8 -3.6M318.5 489.3l13.6 16.2M319.5 489.1l5.9 -22.1M322.1 488.5l2.3 -15.4M324.4 488.0l12.0 16.7M330.6 486.6l10.9 -12.5M330.6 486.6l11.6 14.4M333.0 486.1l4.1 -26.0M339.8 484.6l8.1 -13.8M351.2 482.1l13.8 12.3M355.7 481.1l11.8 -20.7M369.3 478.1l19.4 9.0M372.2 477.4l19.8 8.7M374.2 476.9l12.0 -19.3M385.9 472.5l19.3 1.6M386.3 472.2l18.9 -1.4M388.2 470.6l16.1 0.2M391.8 467.5l18.6 1.3M397.2 462.9l-6.2 -18.1M399.1 461.3l21.9 1.9M400.5 460.2l4.4 -25.7M405.4 456.0l0.1 -16.9M411.7 450.6l-2.2 -25.5M417.2 446.0l0.9 -21.0M424.6 439.7l24.8 -1.9M431.3 434.2l-2.8 -15.4M436.2 430.3l-0.9 -24.8M437.2 429.6l14.2 7.6M437.9 429.0l-3.8 -21.7M438.4 428.6l22.2 1.0M439.2 428.0l-4.8 -19.3M441.6 426.2l17.9 0.6M445.6 423.0l-3.1 -18.9M447.4 421.6l21.5 6.8M456.1 414.8l15.3 1.7M462.2 410.0l3.5 -26.1M464.7 408.1l23.8 6.1M467.2 406.1l21.7 0.3M472.8 401.7l12.9 6.9M473.8 401.0l-3.4 -20.1M473.8 401.0l13.5 8.2M394.2 486.1l9.9 8.6M394.7 495.7l-12.7 7.9M394.8 497.6l11.1 5.7M394.8 497.6l-12.7 16.2M394.8 498.2l10.5 8.7M395.2 505.5l10.1 11.9M395.4 510.1l-12.0 7.6M395.4 510.7l-12.9 6.2M395.5 512.4l18.4 7.7M395.6 513.9l-15.7 14.0M395.8 517.6l17.3 8.3M396.1 523.5l-9.6 10.5M396.6 534.4l19.8 8.5M396.9 539.2l-12.8 8.4M397.0 541.3l10.5 8.6M398.5 551.8l21.3 5.0M398.6 552.6l13.5 12.2M399.1 556.1l-12.9 17.5M399.6 559.3l-7.3 11.2M399.7 560.3l11.1 5.4M400.8 567.5l13.1 2.9M401.2 569.9l-8.7 16.5M364.6 515.0l-14.0 2.7M363.4 518.1l8.6 11.3M362.3 520.9l-21.3 0.4M362.1 521.4l-14.7 5.2M360.3 526.0l-19.9 8.9M357.2 534.1l6.7 15.6M356.5 535.7l-13.3 5.0M356.1 536.7l-20.4 2.7M355.7 537.9l-13.1 6.8M355.5 538.3l6.2 14.1M351.7 548.2l9.3 13.1M350.7 550.7l-18.1 4.5M348.7 555.5l4.7 20.4M347.8 557.5l-21.4 4.0M346.5 560.1l3.3 13.6M344.7 563.5l9.4 11.3M343.8 565.4l9.5 15.1M342.9 567.2l4.8 14.4M342.9 567.2l-19.1 8.6M339.2 574.6l3.9 15.5M338.2 576.7l-18.3 1.1M336.7 579.6l10.8 13.9M335.1 582.9l10.3 18.9M333.1 586.9l13.2 16.1M331.8 589.4l9.1 18.5M272.2 427.6l12.2 10.1M272.3 428.2l-13.9 8.3M272.4 429.7l16.2 5.1M272.4 429.7l-7.4 10.4M272.8 435.0l10.6 6.4M272.9 435.8l-13.6 13.4M273.1 438.3l-6.6 8.6M273.2 439.3l17.6 8.7M273.4 442.3l12.7 12.4M273.7 445.5l10.3 8.4M273.7 445.5l-11.1 9.5M274.4 454.5l8.5 8.4M274.4 454.5l-15.7 9.0M274.6 456.3l-9.6 12.9M274.7 457.7l-9.7 6.9M275.1 463.1l12.1 3.4M275.4 466.4l-6.5 11.0M275.4 467.2l-14.6 11.4M275.7 470.2l13.1 10.1M275.7 470.2l-14.8 7.4M275.7 470.9l8.8 7.5M275.9 472.3l16.7 9.4M276.0 473.4l-6.2 9.3M276.1 474.8l13.0 4.7M277.0 480.2l11.8 11.0M277.0 480.2l-11.1 6.2M278.2 487.7l-7.8 8.0M278.3 488.1l14.3 8.4M279.4 494.9l-16.1 10.5M279.5 495.7l-10.6 9.0M279.8 497.3l-8.6 8.9M280.1 499.1l12.0 2.6M283.3 519.0l-11.3 11.3M283.7 521.8l-11.9 10.2M283.9 523.0l-10.0 14.3M284.0 523.8l-8.7 11.2M284.7 528.2l-12.3 7.2M472.1 513.5l7.1 10.1M463.8 530.9l-11.1 5.9M460.8 537.2l-18.1 3.7M250.9 486.2l-9.7 9.2M251.4 494.9l-10.7 9.1M251.7 500.2l9.9 8.7M252.2 508.3l15.7 7.6M253.4 529.3l-12.8 13.5M253.7 535.0l-12.4 10.7M253.8 536.9l-13.4 12.2M253.9 538.9l11.6 13.6M254.0 539.2l-12.8 11.3M254.2 543.1l8.7 5.7M256.7 583.7l-8.9 11.2M249.0 565.7l-7.1 10.9M250.2 567.9l18.7 5.5" stroke="#2e553d" stroke-width="1.6" fill="none" stroke-linecap="round"/><path d="M247.6 193.9l13.6 2.4M248.0 195.0l-8.1 7.4M248.5 196.3l15.7 0.4M249.1 197.6l11.4 1.0M249.3 198.2l11.8 3.5M249.8 199.4l-6.6 15.3M250.8 202.1l-9.5 8.8M252.3 205.7l12.6 3.9M252.3 205.7l-8.3 15.7M253.0 207.6l-8.8 13.5M253.6 209.1l13.4 5.9M254.0 210.1l15.5 2.6M254.5 211.3l-5.4 17.3M255.1 212.8l-9.4 10.6M257.5 219.4l-6.1 11.0M258.0 220.8l17.6 5.2M258.2 221.3l12.7 8.8M258.2 221.3l-11.3 15.9M261.7 231.2l15.3 7.9M270.9 188.8l-9.7 4.7M270.9 189.3l-8.8 7.8M270.0 194.0l9.5 8.1M269.5 196.9l-10.7 6.9M269.3 197.9l-13.8 2.8M269.1 199.1l-11.3 9.9M268.7 200.9l-11.9 6.8M268.2 203.6l13.7 8.2M267.5 208.1l-11.4 8.5M266.3 215.0l-11.1 5.2M265.9 217.2l11.9 10.2M265.6 219.0l-15.8 5.7M265.2 221.2l6.3 7.8M264.8 223.2l9.1 6.8M324.3 183.3l-6.4 13.2M326.4 185.5l0.7 15.1M328.4 187.6l15.2 -3.3M328.8 188.0l13.0 -1.7M331.1 190.3l18.4 1.5M331.8 191.1l21.3 -2.5M346.9 206.8l20.7 -0.1M347.1 206.9l-0.6 17.0M350.7 210.8l-0.7 19.8M351.3 211.6l14.5 -4.2M351.4 211.6l16.0 0.3M352.8 213.3l19.9 -2.1M355.3 216.1l17.4 2.4M355.3 216.1l-7.7 14.5M356.1 217.2l18.7 -4.2M356.7 217.9l1.0 14.0M357.1 218.2l-0.3 15.0M357.7 219.0l-0.9 17.8M359.7 221.3l17.6 -2.3M362.0 224.0l1.0 15.2M363.5 225.8l20.6 -5.5M363.5 225.8l-3.2 19.8M367.4 230.3l-2.8 19.7M368.4 231.4l-6.9 13.6M368.6 231.7l12.8 0.7M370.1 233.4l14.2 2.9M370.9 234.4l1.1 18.3M248.0 241.0l14.0 15.9M249.3 241.0l11.4 20.6M254.2 241.0l15.0 -13.1M254.8 241.0l6.3 -17.1M256.2 241.0l11.3 -25.4M257.5 241.0l11.4 -19.2M262.9 241.0l22.2 -16.9M268.1 241.0l15.3 23.5M268.4 241.0l14.0 14.9M272.1 241.0l11.9 13.8M275.7 241.0l7.4 18.7M278.9 241.0l14.3 -15.7M282.7 241.0l13.6 16.8M283.3 241.0l16.5 13.8M287.2 241.0l10.5 14.3M291.7 241.0l11.6 -23.4M292.7 241.0l20.5 -20.9M293.7 241.0l15.7 16.5M298.1 241.0l11.9 15.2M304.2 241.0l11.9 24.1M304.3 241.0l16.7 23.3M307.1 241.0l10.3 19.6M310.7 241.0l13.7 16.3M312.7 241.0l8.2 15.6M317.6 241.0l11.9 15.2M319.5 241.0l22.1 -18.8M319.5 241.0l7.9 15.6M327.5 241.0l13.4 16.4M332.4 241.0l11.5 15.0M334.1 241.0l14.5 -14.8M336.0 241.0l14.8 19.1M337.3 241.0l22.1 16.2M338.8 241.0l14.0 9.8M340.3 241.0l11.2 12.0M343.8 241.0l14.5 -14.7M346.0 241.0l20.7 17.2M350.7 241.0l14.6 24.0M357.4 241.0l14.1 -12.1M363.7 241.0l13.1 -13.1M364.7 241.0l12.4 -12.4M307.9 278.5l14.6 -16.2M308.9 278.8l7.0 12.6M309.1 278.8l6.7 20.0M312.2 279.7l2.8 17.5M315.4 280.6l13.9 -12.7M315.4 280.6l10.0 18.8M317.8 281.2l9.9 -7.4M324.5 283.1l17.4 -12.8M328.0 284.0l5.2 12.0M332.2 285.2l6.8 15.3M334.4 285.7l16.6 -9.7M357.6 292.2l12.1 -9.1M373.2 296.7l7.5 12.7M376.9 297.8l16.4 -7.3M378.4 298.2l3.0 12.4M381.6 299.1l2.9 17.8M386.5 300.6l16.2 -10.1M387.6 300.9l13.1 -13.7M387.6 300.9l8.5 13.5M389.8 301.5l11.3 -13.7M391.6 302.0l8.8 13.9M390.8 191.2l11.0 -11.6M394.2 192.3l10.9 -5.3M397.9 193.4l3.5 12.3M400.0 194.0l16.1 -6.9M407.8 196.3l16.9 -7.3M412.1 197.6l1.2 15.6M413.9 198.2l6.5 19.9M419.0 199.7l10.3 -7.9M433.6 204.1l10.9 18.0M442.2 206.7l6.9 19.0M445.4 207.6l9.8 16.7M446.4 207.9l2.8 12.3M447.2 208.2l11.9 17.2M449.2 208.8l15.0 -9.9M452.0 209.6l17.7 -9.0M455.1 210.5l13.3 -16.9M472.3 188.9l3.1 18.7M480.5 192.2l1.4 17.7M484.0 193.6l3.9 10.8M488.7 195.5l1.9 11.7M490.3 196.1l10.0 -9.7M494.5 197.8l0.5 11.2M495.2 198.1l14.6 -11.1M504.8 201.0l9.0 -7.7M515.6 203.1l11.9 -11.6M518.1 203.6l7.2 17.6M519.2 203.8l9.5 -9.5M519.2 203.8l10.6 15.3M524.5 204.9l12.9 -13.4M525.7 205.1l6.0 14.6M533.7 206.7l4.1 14.1M535.4 207.1l11.0 -11.3M535.4 207.1l4.7 10.6M537.0 207.4l7.1 -10.1M538.0 207.6l3.1 14.5M545.3 193.4l20.8 -2.4M545.3 193.4l-1.6 22.6M546.5 194.7l-3.7 15.0M548.0 196.3l16.8 -3.6M549.2 197.6l16.8 -0.8M549.2 197.6l-3.5 18.0M550.2 198.7l14.1 2.9M550.7 199.3l15.6 3.0M552.8 201.6l14.7 -1.1M552.8 201.6l-5.5 14.5M552.9 201.7l14.5 1.1M554.0 202.9l-8.1 15.4M554.4 203.4l1.4 13.4M557.0 206.2l13.8 2.2M557.8 207.1l-3.1 20.4M558.1 207.5l-4.6 15.2M559.8 209.3l-4.0 16.6M563.0 212.8l20.9 -1.9M563.7 213.6l-4.8 17.9M565.4 215.6l-6.2 13.9M567.9 219.3l18.3 2.0M570.0 222.4l-0.9 18.7M572.0 225.2l20.0 4.8M572.6 226.1l16.2 1.3M572.9 226.6l-10.2 16.0M573.7 227.8l-3.7 22.3M576.6 232.0l-5.5 13.0M578.3 234.6l15.0 2.3M579.1 235.7l-1.1 12.8M580.0 237.1l-0.9 14.0M580.4 237.6l17.8 -2.1M582.0 239.9l22.6 -4.8M495.2 250.0l12.9 -19.0M496.9 250.1l13.3 -16.0M498.7 250.1l11.9 19.1M500.5 250.2l8.1 24.0M504.7 250.3l15.0 24.2M506.7 250.3l13.5 -11.0M508.0 250.4l19.4 -22.6M508.0 250.4l16.4 21.8M509.0 250.4l21.9 -15.8M509.0 250.4l9.9 15.6M509.9 250.4l12.3 -22.4M509.9 250.4l17.0 13.9M514.0 250.5l9.9 15.0M517.4 250.6l8.3 23.2M523.7 250.8l10.9 17.3M530.6 251.0l13.9 11.4M531.7 251.0l10.5 21.5M540.8 251.3l12.2 12.2M547.2 251.5l10.7 -18.9M549.3 251.6l14.6 -22.9M549.3 251.6l9.1 23.4M551.4 251.6l11.7 19.0M557.3 251.8l19.6 16.4M559.4 251.8l14.1 -11.2M561.1 251.9l23.0 17.7M561.9 251.9l14.0 11.2M563.2 251.9l10.7 22.2M563.3 252.0l19.1 -16.2M564.7 252.0l15.4 25.9M574.4 252.3l20.8 19.4M581.3 252.5l11.0 -25.7M584.3 252.6l16.0 12.8M593.1 252.8l17.2 -16.4M598.2 252.9l13.9 -15.7M598.2 252.9l18.8 15.8M601.7 253.1l14.1 25.5M603.8 253.3l12.7 15.5M607.7 253.6l10.3 -22.8M608.7 253.7l15.1 -13.1M610.5 253.8l13.8 -22.2M613.6 254.0l16.1 -9.8M614.0 254.1l7.9 26.3M616.7 254.3l8.2 18.2M619.2 254.4l19.8 -19.6M620.8 254.6l12.3 -20.7M627.4 255.1l7.1 18.9M630.7 255.3l10.3 28.5M632.0 255.4l14.1 21.5M634.1 255.6l17.4 24.8M637.3 255.8l15.1 -16.7M638.2 255.9l14.6 -18.1M646.1 256.5l23.5 -17.7M648.7 256.7l9.0 24.1M650.3 256.8l16.3 -15.9M651.8 256.9l13.8 21.4M655.8 257.2l16.4 -12.0M656.8 257.3l5.6 17.4M664.3 257.8l15.9 24.1M667.9 258.1l19.1 -19.7M668.8 258.2l16.7 -17.0M671.6 258.4l18.3 20.1M672.0 258.4l12.4 20.9M673.0 258.5l11.9 -22.7M674.7 258.6l18.4 20.6M676.4 258.7l8.1 23.8M683.2 259.2l24.5 -15.8M684.7 259.3l18.5 -15.8M687.3 259.5l15.2 -18.9M687.3 259.5l11.9 20.9M687.6 259.6l12.2 -11.8M689.6 259.7l21.3 -16.7M693.8 260.0l12.9 -17.5M695.8 260.1l13.3 -27.5M697.3 260.3l13.5 23.7M698.2 260.3l13.5 -16.1M704.8 260.8l21.2 19.3M707.0 261.0l13.6 -19.6M710.4 261.2l14.9 -22.0M713.9 261.5l8.7 27.5M714.7 261.5l8.4 -17.2M714.7 261.5l10.7 13.6M715.9 261.6l9.1 -17.1M719.1 261.8l20.4 -21.9M720.0 261.9l16.6 -22.1M728.3 262.5l19.4 -20.5M737.4 263.2l17.7 -17.2M737.4 263.2l8.6 17.8M739.8 263.4l19.5 18.9M743.4 263.6l18.6 -11.4M744.5 263.7l9.8 15.8M745.0 263.7l16.5 -23.3M749.6 264.1l22.4 -16.8M751.0 264.2l17.5 -13.0M751.9 264.2l11.5 -17.1M753.6 264.4l15.8 17.6M758.3 264.7l23.2 -19.1M763.0 265.0l21.3 18.9M765.0 265.2l17.5 -25.1M766.6 265.3l8.0 -16.6M768.2 265.4l14.0 -23.9M772.7 265.7l14.1 -15.9M772.7 265.7l19.2 20.5M773.9 265.8l6.0 19.2M778.4 266.2l20.9 -16.6M779.4 266.2l17.0 22.9M779.7 266.3l13.5 22.2M786.9 266.8l12.9 19.3M626.7 184.8l17.3 -1.7M628.7 187.0l20.9 -6.4M630.0 188.4l16.9 -6.2M630.3 188.7l17.4 -0.2M630.3 188.7l-5.6 20.2M634.8 193.6l15.9 -0.1M634.8 193.6l-7.6 18.4M636.5 195.4l-6.7 18.1M638.9 198.0l22.2 -2.7M641.0 200.3l-4.5 17.0M642.1 201.5l21.3 -2.8M643.2 202.7l20.1 0.8M644.3 203.9l13.8 0.5M644.3 203.9l-8.6 19.9M645.4 205.0l0.8 19.2M647.7 207.5l18.7 -2.3M650.1 210.2l24.8 2.4M650.1 210.2l-9.4 23.5M652.2 212.5l15.0 -2.8M653.2 213.7l23.6 5.0M654.8 215.6l-1.8 14.0M657.8 219.0l-3.1 20.6M659.3 220.7l21.8 4.9M660.7 222.3l19.9 -3.7M661.8 223.6l22.1 -3.7M665.0 227.3l-7.9 24.0M665.4 227.7l15.9 1.6M666.3 228.7l1.9 19.9M667.9 230.6l-5.9 18.5M671.2 234.3l19.3 -2.6M671.9 235.0l1.7 19.5M673.4 236.5l18.2 -0.7M674.0 237.2l25.1 -2.0M675.0 238.2l19.4 2.5M675.4 238.6l-0.1 24.6M677.3 240.7l18.8 2.0M679.5 243.0l-4.2 13.6M683.1 246.7l-3.2 16.4M683.4 247.0l-2.4 19.5M684.1 247.8l-5.5 18.3M688.0 251.8l-3.2 13.9M690.6 254.5l-4.8 15.2M691.3 255.3l-1.7 14.7M690.3 186.7l14.7 7.0M691.7 189.4l9.8 4.5M691.7 189.4l-6.6 16.0M695.6 196.8l-9.2 10.8M696.2 198.1l-2.2 16.0M696.4 198.5l11.8 3.1M699.6 204.6l13.6 1.3M700.4 206.2l-6.6 15.6M711.9 226.5l-6.0 18.1M714.5 230.9l12.6 1.3M717.8 236.3l-3.6 18.8M720.0 239.9l16.4 4.9M601.3 282.7l13.0 -7.8M601.3 282.7l0.8 17.2M602.1 283.1l15.3 -9.3M603.8 283.9l4.8 15.1M606.5 285.2l8.2 -7.2M609.7 286.8l16.5 -10.5M611.3 287.7l17.3 -3.5M611.8 287.9l12.9 -7.9M615.2 289.6l18.6 -3.5M617.1 290.5l7.2 17.1M620.0 292.0l14.3 -10.6M625.6 294.8l10.3 -3.5M626.6 295.3l16.3 -10.2M627.3 295.6l6.1 14.9M638.7 301.3l-0.1 11.0M642.1 303.9l-0.3 13.4M646.0 307.2l1.2 12.5M648.7 309.6l-1.6 11.3M649.2 310.1l16.6 -1.0M650.2 311.0l-0.4 19.1M653.1 313.5l-1.1 14.0M653.7 314.0l19.0 1.3M661.4 320.7l-4.5 18.7M663.4 322.5l13.3 -3.2M665.2 324.0l-4.4 17.3M667.3 325.9l19.3 -1.6M669.3 327.6l-0.6 15.2M670.1 328.3l-3.0 17.6M670.4 328.6l10.9 -1.5M670.4 328.6l-2.7 12.3M671.2 329.3l-3.0 19.0M744.2 294.5l-11.4 11.7M745.8 299.3l11.9 1.4M751.4 316.3l12.3 6.9M751.4 316.3l-5.8 15.1M752.0 318.0l16.6 3.3M753.4 321.4l-10.3 12.3M754.4 323.8l17.1 1.5M754.6 324.2l-9.3 10.7M755.4 326.1l-6.6 19.1M756.3 328.4l18.6 0.9M758.2 333.0l16.9 2.2M758.4 333.4l-5.3 15.3M248.9 432.1l14.2 4.1M253.9 428.9l0.7 -23.0M259.3 425.5l13.7 9.7M265.5 421.5l22.9 1.8M268.2 419.8l-3.2 -16.3M271.4 417.7l2.0 -15.3M273.8 416.2l19.3 11.4M275.4 415.2l0.4 -13.5M279.1 412.8l17.2 11.0M280.0 412.3l1.6 -16.9M282.4 410.7l19.5 9.2M285.9 408.5l15.6 3.7M288.1 407.1l1.3 -12.8M291.2 405.0l14.4 2.5M292.3 404.4l-2.5 -17.8M293.4 403.7l12.5 4.5M294.7 402.8l-1.3 -16.1M297.3 401.2l16.6 6.3M301.4 398.5l12.6 7.8M303.1 397.5l14.7 4.2M305.3 396.1l18.3 13.1M306.9 395.0l0.3 -20.9M319.3 387.1l13.5 6.4M324.1 384.7l2.0 -16.3M326.2 383.9l14.5 8.7M330.2 382.3l12.8 11.8M336.0 380.0l13.3 7.5M338.3 379.1l-0.3 -13.1M351.3 373.9l6.7 -18.6M352.6 373.3l14.7 4.5M353.7 372.9l5.5 -17.5M357.9 349.9l2.0 17.5M359.7 350.9l14.7 -5.1M361.5 351.7l13.0 -10.7M362.4 352.2l13.1 -4.6M375.8 358.9l14.0 -10.1M378.1 360.1l15.2 -6.5M384.2 363.1l9.0 -5.0M387.3 364.7l16.8 -7.6M390.6 366.3l9.7 -5.8M395.7 368.8l11.9 -9.2M398.8 370.4l14.2 -7.4M401.1 371.6l12.4 -4.1M402.8 372.4l5.9 16.1M406.5 374.8l10.8 -1.1M406.6 374.9l10.8 -2.8M410.8 377.9l-0.5 15.6M411.1 378.2l14.6 -2.9M419.7 384.5l2.9 10.7M421.5 385.8l16.3 -4.3M311.2 491.0l12.3 10.7M316.6 489.8l9.9 -11.4M317.5 489.6l12.5 17.1M321.0 488.8l13.9 -22.1M332.0 486.3l8.7 -22.1M337.4 485.1l14.1 21.0M343.4 483.8l10.6 -12.7M348.9 482.6l15.2 16.6M358.9 480.3l9.5 -12.5M360.2 480.1l18.9 8.0M363.0 479.4l11.2 -20.7M363.8 479.3l12.5 -14.8M364.9 479.0l20.5 12.6M365.8 478.8l9.5 -20.7M370.7 477.7l18.9 16.1M381.1 475.4l6.8 -17.4M382.8 475.0l13.1 11.9M384.3 473.9l16.1 2.5M384.7 473.6l-0.0 -16.7M387.4 471.3l1.0 -17.4M388.2 470.6l-6.0 -23.3M390.1 469.0l14.7 3.3M391.8 467.5l-1.4 -14.9M396.1 463.9l-6.4 -18.9M396.1 463.9l18.2 -1.4M403.2 457.8l2.7 -23.5M410.1 452.0l14.2 5.4M410.6 451.6l2.0 -24.0M412.8 449.7l25.6 -1.6M415.2 447.7l-2.5 -15.9M418.9 444.6l21.0 1.2M422.6 441.4l-8.3 -22.9M424.6 439.7l-1.6 -19.5M425.9 438.6l-5.1 -15.5M428.8 436.2l-6.8 -20.6M432.5 433.2l-4.3 -21.5M434.5 431.7l2.5 -22.1M437.9 429.0l20.6 -0.6M444.1 424.2l19.2 0.7M447.4 421.6l-3.2 -19.9M449.6 419.9l5.2 -20.9M451.8 418.2l1.5 -16.5M455.7 415.1l26.3 1.9M456.1 414.8l-6.9 -23.9M457.0 414.1l-1.2 -18.8M466.0 407.1l1.6 -14.8M468.9 404.8l3.0 -20.9M469.5 404.3l16.3 6.8M471.1 403.0l21.8 6.2M394.0 482.3l13.0 10.1M394.1 484.3l-12.0 15.8M394.2 486.1l-11.8 8.0M394.4 489.1l-10.8 7.6M394.4 490.3l-11.4 8.7M394.9 500.5l12.2 6.2M395.3 508.1l18.5 6.5M395.3 508.9l-18.9 9.2M395.4 510.7l19.3 6.4M395.5 512.9l-12.9 16.5M395.6 513.9l15.3 7.3M395.9 520.3l16.1 5.9M396.0 522.1l17.4 10.1M396.1 524.4l7.8 9.6M396.5 532.1l13.9 6.6M396.5 532.8l18.1 10.2M396.7 535.8l14.3 7.5M396.8 537.7l13.9 5.2M397.1 542.9l11.3 10.5M397.4 544.7l15.5 8.4M398.7 553.6l-7.6 13.3M399.4 557.9l11.7 8.5M399.6 559.3l17.8 8.4M400.2 563.1l17.3 11.7M400.7 566.7l17.8 10.5M401.3 570.6l15.9 9.2M401.6 572.5l15.4 13.2M401.6 572.6l10.6 7.2M402.9 581.2l-10.7 18.2M364.8 514.4l13.3 17.1M364.8 514.4l-13.7 0.7M364.6 515.0l15.4 15.4M364.0 516.6l-11.4 3.9M356.1 536.7l5.9 16.9M354.5 540.9l7.9 11.8M349.9 552.7l5.6 18.4M347.3 558.4l8.8 9.5M343.4 566.1l-19.1 5.3M342.3 568.3l10.0 16.8M341.2 570.6l-20.6 -1.4M340.7 571.7l11.1 14.1M338.7 575.6l-18.9 8.4M334.6 583.8l-13.6 6.6M332.8 587.4l3.1 16.1M331.8 589.4l-19.1 0.9M331.4 590.2l-14.1 5.2M272.3 428.2l8.8 7.7M272.6 432.9l11.0 10.0M273.0 437.3l-15.0 6.9M273.4 441.9l8.0 7.4M273.4 441.9l-8.2 9.8M273.5 443.6l10.2 8.7M273.7 445.2l8.7 6.6M273.7 445.2l-14.8 11.5M273.8 447.4l12.8 7.5M273.9 448.8l-9.9 7.9M274.1 450.7l17.6 8.1M274.2 452.4l14.5 11.4M274.8 459.3l-9.9 10.1M275.0 462.0l-10.8 7.8M275.1 463.5l8.9 6.5M275.1 463.5l-11.9 7.4M275.2 464.5l15.3 10.3M275.2 464.5l-9.0 9.7M275.7 470.9l-15.3 11.8M276.1 474.8l-13.3 10.9M276.3 476.0l13.7 4.7M276.8 479.1l14.6 4.8M277.0 480.3l-9.9 15.6M277.7 484.5l-6.6 9.2M277.9 485.7l9.4 7.5M278.7 490.4l18.3 5.9M278.7 490.9l13.3 7.8M279.1 493.5l-8.2 12.0M279.4 494.9l15.6 4.9M280.1 499.3l10.7 2.2M280.7 503.2l16.8 4.7M280.8 503.9l-9.0 7.1M281.1 505.8l8.6 8.7M281.5 508.4l9.5 6.6M281.5 508.4l-9.0 6.5M281.6 508.9l16.2 7.7M281.9 510.3l11.0 8.1M282.1 511.8l11.5 9.8M282.5 514.2l12.6 11.7M282.8 516.3l17.5 6.9M283.1 517.9l11.8 5.0M283.4 520.1l13.2 4.3M283.9 523.0l12.3 5.0M284.7 528.2l12.3 9.3M285.0 529.5l13.7 13.6M285.0 529.5l-8.8 12.5M285.3 531.5l14.0 7.8M285.3 531.8l13.5 9.6M285.5 533.2l9.7 9.8M285.5 533.2l-7.8 8.0M285.8 534.8l-8.2 8.8M285.9 535.3l-10.9 15.1M477.9 501.3l7.2 8.4M477.5 502.1l-15.3 3.2M477.0 503.2l-14.4 5.5M476.1 505.0l5.2 9.8M475.7 505.8l8.2 17.2M475.3 506.7l-16.0 8.3M473.4 510.6l6.0 18.2M472.2 513.3l-13.0 0.2M472.1 513.5l-10.8 1.8M471.4 514.9l10.3 13.4M464.2 530.0l-13.3 2.4M462.2 534.4l5.6 15.2M461.8 535.3l3.6 14.4M461.8 535.3l-17.0 1.4M461.3 536.2l5.5 12.8M460.8 537.2l7.2 10.5M460.0 538.9l8.8 16.1M250.1 471.6l11.1 4.3M251.8 501.5l11.3 7.8M252.0 504.6l-8.0 9.1M252.3 510.6l-9.2 14.3M252.6 514.7l-8.3 6.8M252.8 518.2l-13.2 9.4M253.1 524.7l8.8 5.4M253.3 527.0l16.5 5.3M253.3 527.0l-9.5 5.0M253.6 533.0l-11.7 6.9M254.1 541.1l-12.4 6.7M254.2 544.0l-11.2 7.3M254.3 544.3l-10.6 7.5M254.6 549.0l10.3 8.0M254.9 555.0l9.2 9.7M255.2 559.1l11.4 4.8M255.3 561.9l10.4 3.2M255.4 562.8l-11.2 7.9M255.5 565.0l14.7 4.8M255.5 565.0l-10.9 9.1M256.0 572.9l12.4 4.3M256.2 575.8l6.7 7.8M256.5 581.4l10.6 6.3M256.8 585.9l9.9 6.6M256.9 587.6l-6.8 9.6M257.7 600.9l13.9 7.5M257.9 603.2l-15.6 7.0M247.1 562.0l17.6 4.4M248.5 564.6l-9.4 11.2M249.6 566.8l-4.6 14.9M253.2 573.4l19.0 2.1M253.9 574.9l11.4 -0.1M253.9 574.9l-8.2 16.9M254.1 575.2l10.5 4.7M256.1 578.9l-2.4 19.7M261.9 589.9l14.9 2.5M262.8 592.3l17.6 6.3M263.6 594.5l18.1 5.3M264.0 595.4l-14.1 13.1M265.5 599.6l-5.6 10.4M266.6 602.6l13.9 2.0M266.9 603.4l15.8 8.9M267.7 605.8l-8.4 11.6M268.7 608.5l9.4 6.2M269.0 609.3l10.7 2.8" stroke="#22422e" stroke-width="1.6" fill="none" stroke-linecap="round"/><path d="M246.9 192.3l10.4 3.1M247.6 193.9l-8.5 13.1M249.8 199.4l15.6 4.1M250.8 202.1l14.7 0.4M251.8 204.6l-6.3 10.1M255.6 214.0l-10.4 10.3M256.1 215.3l-7.2 9.0M256.6 216.7l-8.2 15.3M256.7 217.1l-14.2 12.6M257.3 218.8l12.4 5.7M257.5 219.4l13.0 5.4M259.8 225.7l-12.3 14.5M260.8 228.7l-5.6 13.5M261.7 231.2l-5.0 11.4M272.0 183.2l9.4 7.6M271.6 185.0l10.3 6.8M270.3 192.2l-10.8 3.1M270.0 194.0l-9.6 8.4M269.6 196.2l-10.8 3.2M268.9 200.0l10.2 12.7M267.9 205.6l-11.2 5.4M267.8 206.2l13.4 11.2M267.4 208.5l10.6 6.7M267.1 210.1l9.8 10.1M266.8 211.9l9.0 6.5M265.7 218.4l8.3 10.1M265.7 218.4l-13.4 3.2M265.3 220.3l9.4 7.5M265.3 220.3l-7.8 7.2M264.5 225.2l-10.6 6.5M327.6 186.7l-3.0 14.7M328.4 187.6l2.3 22.8M330.6 189.9l11.9 -5.2M339.0 198.5l15.7 -0.7M340.2 199.8l-2.7 14.9M341.0 200.7l-2.8 12.7M342.2 201.9l21.4 -1.0M342.2 201.9l-4.7 14.1M342.7 202.4l0.4 17.5M344.6 204.4l0.7 15.3M345.5 205.3l15.0 -3.7M345.5 205.3l1.4 22.4M348.7 208.7l16.4 -4.0M348.7 208.7l-5.5 13.9M351.3 211.6l0.7 17.1M351.4 211.6l-1.0 14.2M352.4 212.8l0.7 16.2M352.8 213.3l-4.2 12.1M353.7 214.3l-3.8 18.4M354.3 215.1l12.8 1.2M356.1 217.2l-2.6 16.8M357.7 219.0l17.7 4.5M358.6 220.0l-7.6 14.2M360.7 222.4l15.1 1.6M362.9 225.0l-5.3 15.1M364.3 226.7l13.5 -3.3M364.4 226.8l0.3 19.8M366.8 229.6l16.5 -0.7M366.8 229.6l-8.2 19.8M368.6 231.7l0.2 19.2M370.9 234.4l21.1 -0.0M372.4 236.2l0.3 13.4M250.4 241.0l10.5 12.5M253.2 241.0l23.0 -18.5M258.3 241.0l12.1 18.6M259.3 241.0l7.0 -16.9M260.5 241.0l22.8 18.8M261.1 241.0l11.8 24.2M262.9 241.0l19.6 18.7M263.5 241.0l9.2 14.5M264.8 241.0l11.3 24.1M267.0 241.0l18.3 20.8M269.6 241.0l19.7 16.3M270.5 241.0l22.4 -18.2M272.9 241.0l9.6 -19.5M275.3 241.0l11.8 21.3M275.7 241.0l12.9 -15.2M277.4 241.0l7.9 17.9M278.1 241.0l12.3 -24.8M280.9 241.0l20.1 -14.5M284.2 241.0l18.9 -16.3M286.0 241.0l8.3 -15.8M287.2 241.0l17.0 -12.3M287.6 241.0l10.8 -14.2M287.6 241.0l13.4 11.1M288.7 241.0l15.3 11.5M295.6 241.0l8.9 -22.1M296.5 241.0l15.2 -14.7M296.5 241.0l13.0 16.5M304.3 241.0l8.0 -14.8M305.3 241.0l10.0 -24.4M308.6 241.0l11.0 -22.7M312.9 241.0l15.9 13.7M314.4 241.0l16.3 17.8M315.9 241.0l18.7 18.2M316.2 241.0l11.0 19.1M317.6 241.0l10.1 -26.6M318.2 241.0l12.1 20.6M320.4 241.0l17.4 -15.7M320.4 241.0l20.5 16.8M323.7 241.0l13.0 -12.5M325.0 241.0l10.4 22.1M333.4 241.0l10.6 -13.6M333.4 241.0l17.0 23.9M342.7 241.0l10.5 -16.7M343.8 241.0l14.0 22.9M347.1 241.0l14.7 21.7M352.2 241.0l13.4 11.8M353.7 241.0l15.2 -21.7M359.2 241.0l15.2 -19.8M362.5 241.0l7.5 16.8M364.7 241.0l16.2 17.4M365.7 241.0l12.1 15.7M366.5 241.0l10.9 -13.6M368.2 241.0l9.1 -21.1M368.2 241.0l16.9 23.6M307.9 278.5l5.4 19.2M308.9 278.8l9.2 -10.2M309.1 278.8l12.2 -9.4M311.3 279.4l4.1 12.6M312.2 279.7l12.6 -15.1M313.8 280.1l8.6 10.6M314.4 280.3l14.5 -13.4M317.8 281.2l6.0 15.6M319.7 281.7l16.9 -13.3M322.6 282.5l5.1 13.8M324.1 282.9l16.9 -10.1M332.2 285.2l12.4 -8.4M333.1 285.4l3.4 15.7M335.3 286.0l1.5 15.3M337.7 286.6l6.7 19.1M338.1 286.8l14.6 -12.4M343.6 288.3l13.9 -5.7M346.7 289.1l3.3 11.8M347.8 289.4l16.9 -8.7M348.4 289.6l14.1 -8.4M350.4 290.1l14.2 -15.7M350.4 290.1l8.4 13.1M351.2 290.4l6.3 12.8M352.1 290.6l9.2 -8.6M356.4 291.8l6.5 11.4M357.6 292.2l3.9 17.8M361.0 293.2l3.0 20.1M366.1 294.7l8.1 19.4M369.0 295.5l3.5 18.9M374.2 297.0l9.8 17.9M378.7 298.3l15.1 -7.2M378.7 298.3l5.8 18.6M381.7 299.2l8.0 11.5M388.6 301.2l20.1 -8.5M389.8 301.5l1.4 20.3M392.9 302.4l13.8 -7.4M395.0 303.0l9.5 -8.3M395.0 303.0l8.6 14.5M380.9 188.3l6.2 13.8M381.5 188.5l10.0 -9.1M382.2 188.7l3.9 17.3M384.1 189.2l7.7 18.7M385.2 189.5l10.0 15.0M386.5 190.0l17.3 -7.2M392.5 191.7l15.1 -9.8M395.3 192.6l9.0 -8.9M397.1 193.1l17.3 -12.0M399.4 193.8l11.7 -9.8M400.8 194.3l17.7 -8.0M400.8 194.3l7.2 14.5M404.3 195.3l14.0 -11.5M406.0 195.8l13.4 -14.8M406.0 195.8l2.4 15.7M406.9 196.1l11.3 -6.4M407.8 196.3l8.4 11.9M410.0 197.0l8.9 -8.5M413.7 198.1l10.4 -8.2M415.6 198.7l12.6 -11.0M416.3 198.9l15.4 -11.3M416.3 198.9l6.3 18.9M418.4 199.5l11.6 -9.1M418.4 199.5l9.2 18.3M419.0 199.7l8.6 11.9M425.0 201.5l6.3 13.0M429.4 202.8l11.3 -4.5M429.4 202.8l9.7 16.6M430.3 203.1l13.7 -6.4M433.6 204.1l17.0 -11.3M436.2 204.9l13.5 -5.1M440.9 206.3l12.1 -12.0M440.9 206.3l3.3 20.7M446.4 207.9l11.3 -6.0M447.8 208.3l12.2 -8.2M449.2 208.8l2.1 21.0M450.0 209.0l14.8 -7.5M453.8 210.1l12.2 -11.5M454.4 210.3l11.4 -10.1M455.1 210.5l3.2 20.2M456.5 210.9l18.0 -6.9M457.7 211.3l7.2 17.3M458.7 211.6l2.3 19.1M459.4 211.8l14.9 -7.1M471.7 188.7l18.1 -4.5M474.6 189.8l15.1 -10.8M475.6 190.2l2.1 19.6M477.3 190.9l4.0 11.2M483.0 193.2l9.3 -7.9M484.3 193.7l12.6 -4.8M486.0 194.4l0.9 11.6M489.7 195.9l16.1 -7.4M492.0 196.8l15.2 -12.5M494.5 197.8l10.6 -3.2M498.4 199.4l2.8 10.9M504.8 201.0l7.5 9.3M505.9 201.2l6.6 10.1M508.2 201.6l11.8 13.2M510.4 202.1l6.6 18.2M510.7 202.1l8.2 -7.9M512.4 202.5l8.9 -12.0M512.4 202.5l11.9 13.4M513.1 202.6l7.3 8.9M515.6 203.1l8.4 9.4M520.9 204.2l15.7 -11.3M523.8 204.8l9.1 -13.7M523.8 204.8l7.6 12.0M525.7 205.1l9.4 -12.6M527.7 205.5l11.2 -10.7M530.2 206.0l11.7 -11.6M530.2 206.0l5.1 12.5M531.3 206.3l14.9 -9.0M531.3 206.3l2.7 16.1M532.4 206.5l11.8 -7.9M533.7 206.7l12.3 -12.1M536.5 207.3l15.2 -12.2M539.4 207.9l12.2 -6.9M539.4 207.9l2.7 11.5M545.9 194.0l-4.7 17.1M546.5 194.7l17.1 1.4M547.5 195.7l-8.3 16.4M554.0 202.9l22.4 -5.4M555.1 204.2l20.6 1.3M557.0 206.2l0.3 18.5M560.3 209.8l-2.6 15.0M563.7 213.6l18.8 -1.8M566.4 217.1l17.0 2.9M567.3 218.4l22.7 -1.8M567.3 218.4l-5.5 18.6M567.9 219.3l-3.0 12.4M568.3 219.9l-11.9 17.2M568.7 220.4l13.1 -2.3M572.9 226.6l20.3 0.9M574.2 228.6l14.2 -1.2M574.2 228.6l-3.9 15.6M574.8 229.4l-4.6 19.5M575.9 231.0l-12.1 18.8M576.3 231.6l15.6 5.2M577.3 233.1l-4.4 14.8M579.1 235.7l14.3 2.6M581.0 238.6l13.6 -1.9M582.0 239.9l-8.4 16.9M498.7 250.1l9.9 -15.4M499.6 250.1l10.9 -16.4M500.5 250.2l10.0 -16.3M502.1 250.2l7.8 15.3M504.1 250.3l10.4 -23.2M505.7 250.3l7.7 -17.8M515.6 250.6l12.7 -24.3M515.6 250.6l7.6 22.0M517.4 250.6l20.8 -14.2M518.9 250.7l20.2 -16.5M521.0 250.7l16.9 -12.1M521.3 250.8l13.4 21.4M522.4 250.8l13.6 13.3M526.3 250.9l14.3 -14.7M535.5 251.2l8.4 -15.8M535.5 251.2l19.6 22.5M536.2 251.2l11.1 -12.9M536.2 251.2l14.5 11.8M538.5 251.2l16.1 -13.3M539.5 251.3l14.1 13.2M540.8 251.3l15.6 -12.3M542.1 251.3l17.0 18.6M542.9 251.4l13.6 11.2M544.8 251.4l12.0 12.1M547.2 251.5l12.6 14.5M547.6 251.5l10.6 -17.3M552.2 251.6l19.5 16.3M559.0 251.8l15.0 13.9M559.4 251.8l7.8 16.8M563.2 251.9l15.2 -12.1M566.3 252.0l10.1 23.1M567.4 252.1l7.4 -17.2M568.2 252.1l15.5 13.5M568.6 252.1l9.8 15.8M569.6 252.1l16.8 -15.8M571.0 252.2l14.0 13.6M572.5 252.2l18.6 -21.2M580.0 252.4l19.2 15.2M582.5 252.5l12.0 -21.2M584.3 252.6l10.9 -26.1M585.6 252.6l18.3 -13.6M585.6 252.6l16.6 14.5M588.8 252.7l13.0 -23.5M590.3 252.7l7.1 -16.3M596.5 252.9l12.4 22.1M599.3 253.0l11.2 -18.6M599.3 253.0l16.2 13.7M600.6 253.0l11.8 -12.7M608.7 253.7l13.6 12.4M615.5 254.2l8.8 14.8M617.8 254.3l25.7 -15.4M619.2 254.4l8.0 27.9M624.2 254.8l21.8 -15.2M626.0 255.0l9.4 -19.1M628.8 255.2l12.8 18.8M630.1 255.3l12.9 -18.3M633.3 255.5l19.8 -14.9M634.1 255.6l23.3 -19.3M635.6 255.7l16.6 15.1M636.3 255.7l18.4 18.8M637.3 255.8l8.7 15.1M638.2 255.9l7.9 26.0M640.9 256.1l12.1 17.6M641.7 256.1l18.7 -23.4M641.7 256.1l16.7 21.6M644.8 256.4l11.8 -25.4M646.1 256.5l16.8 21.4M648.1 256.6l10.6 -14.7M648.7 256.7l16.0 -13.2M651.8 256.9l15.0 -19.2M653.4 257.0l16.1 -23.4M654.2 257.1l15.4 18.0M658.1 257.4l14.5 16.4M659.3 257.5l17.6 -15.5M659.3 257.5l16.8 17.2M661.5 257.6l15.8 18.7M662.2 257.7l13.0 -13.4M666.6 258.0l9.2 -14.7M673.0 258.5l10.1 17.0M676.4 258.7l14.9 -16.8M677.3 258.8l13.1 -24.3M678.6 258.9l20.2 -13.2M679.5 259.0l12.8 20.8M681.0 259.1l11.8 16.9M684.7 259.3l7.4 19.0M692.3 259.9l12.9 24.3M694.9 260.1l7.0 20.4M695.8 260.1l18.8 18.0M702.3 260.6l11.5 -18.3M703.3 260.7l20.6 -21.1M707.0 261.0l10.3 15.3M711.5 261.3l16.6 -18.0M721.9 262.0l15.4 -23.4M722.4 262.1l9.3 -19.1M723.8 262.2l21.3 -16.1M725.4 262.3l21.7 20.8M726.3 262.4l15.0 -15.9M727.8 262.5l12.2 -25.4M731.5 262.7l10.7 -19.0M731.5 262.7l7.7 17.7M732.4 262.8l20.0 -22.1M732.4 262.8l16.6 19.6M737.8 263.2l10.9 14.8M738.9 263.3l22.1 -21.0M741.1 263.4l15.4 -13.8M747.4 263.9l15.5 -12.2M748.8 264.0l21.6 -20.3M748.8 264.0l15.1 22.9M749.6 264.1l17.4 25.2M751.9 264.2l8.2 21.7M754.5 264.4l18.7 -14.1M754.5 264.4l18.3 18.5M756.6 264.6l20.8 22.5M758.3 264.7l10.0 15.4M763.0 265.0l14.9 -26.4M763.8 265.1l21.5 -18.7M767.3 265.3l20.1 -19.4M767.3 265.3l8.5 15.4M769.8 265.5l13.1 11.5M781.0 266.3l13.8 -13.4M782.9 266.5l19.0 15.7M784.3 266.6l6.8 22.2M785.9 266.7l24.7 -16.2M788.5 266.9l15.5 17.7M789.1 266.9l14.3 26.7M625.1 183.2l19.2 -3.1M625.1 183.2l-5.8 15.8M625.7 183.8l24.4 1.6M627.5 185.7l-7.5 17.4M628.7 187.0l-3.1 22.9M635.2 194.0l16.4 2.0M639.6 198.8l14.9 -6.0M639.6 198.8l-4.7 20.9M642.1 201.5l-0.5 25.1M643.2 202.7l-2.3 23.0M647.1 206.9l20.4 -3.6M647.1 206.9l-2.7 20.5M651.7 212.0l22.7 1.4M651.7 212.0l1.3 24.0M659.3 220.7l-8.5 16.5M660.3 221.8l21.5 -7.2M661.7 223.5l-8.3 19.9M663.0 224.9l15.1 -4.5M664.4 226.6l-6.0 14.6M665.0 227.3l17.8 -4.8M666.3 228.7l19.7 -2.1M670.1 233.1l-7.5 21.5M672.8 235.9l-9.3 23.2M673.4 236.5l-6.5 23.3M676.3 239.5l-1.8 19.9M676.6 239.9l13.7 -5.3M678.2 241.6l13.1 -5.7M679.7 243.1l-0.9 13.8M680.5 244.0l14.8 1.9M683.1 246.7l19.3 1.9M689.5 253.4l19.8 -1.8M690.0 254.0l20.7 -1.5M694.2 194.2l-10.3 14.7M697.2 199.9l-6.5 18.4M698.6 202.7l12.4 2.9M699.6 204.6l-4.5 14.1M701.5 208.3l-3.2 15.4M702.2 209.7l13.7 1.6M702.2 209.7l-10.5 14.7M703.7 212.5l-9.8 11.1M705.1 215.2l-8.0 11.1M706.4 217.4l12.1 -0.0M706.8 218.0l-4.3 16.5M707.5 219.2l-9.4 11.6M708.9 221.5l11.1 -0.9M710.6 224.4l19.0 4.2M711.9 226.5l15.6 2.4M712.4 227.3l-9.6 11.9M713.8 229.6l16.7 3.9M714.5 230.9l-2.9 14.5M715.2 231.9l12.0 4.7M715.7 232.9l-2.0 15.2M720.0 239.9l-3.0 17.3M600.3 282.2l9.2 -7.8M603.8 283.9l11.1 -6.7M604.6 284.3l12.3 -11.4M609.0 286.5l0.5 11.9M611.8 287.9l4.2 17.9M612.6 288.3l6.5 12.9M615.2 289.6l-1.2 16.1M617.1 290.5l11.0 -6.2M617.5 290.8l17.7 -6.4M617.5 290.8l7.3 15.1M619.5 291.7l12.2 -10.6M621.8 292.9l10.5 -7.7M621.8 292.9l4.8 12.0M622.0 293.0l16.2 -2.5M623.0 293.5l3.5 16.6M625.6 294.8l1.6 17.4M628.0 296.0l15.9 -3.7M629.3 296.6l16.8 -9.4M629.9 296.9l6.6 14.3M632.4 298.2l2.1 13.9M633.9 299.0l8.5 -7.5M633.9 299.0l1.1 17.9M634.6 299.3l12.7 -2.1M634.6 299.3l-0.8 16.1M635.6 299.8l16.1 -11.1M637.5 300.7l13.9 -9.6M640.7 302.6l15.0 -5.0M641.6 303.4l14.3 -5.4M644.6 306.0l-4.0 18.7M646.0 307.2l16.7 -2.5M646.9 308.0l11.7 -4.4M647.4 308.5l10.5 -5.4M650.5 311.2l17.0 -6.2M650.5 311.2l-2.9 18.4M651.8 312.4l1.9 12.4M652.3 312.7l10.8 -0.8M654.5 314.7l16.7 -2.8M657.5 317.3l-3.7 10.7M659.7 319.3l-1.3 11.7M660.3 319.8l14.4 -1.6M662.8 321.9l12.0 -1.3M662.8 321.9l-0.3 11.9M664.6 323.5l-5.6 16.6M667.3 325.9l-0.2 12.9M668.3 326.7l12.8 -3.6M745.0 297.0l-6.1 12.3M746.3 300.9l11.1 6.2M746.4 301.3l13.2 9.1M746.4 301.3l-6.5 16.9M746.9 302.8l19.6 1.5M749.0 308.9l-8.4 16.1M749.8 311.4l-5.1 16.5M750.1 312.3l15.3 1.2M750.1 312.3l-7.6 16.7M750.8 314.4l-4.7 11.5M752.0 318.0l-7.4 13.8M752.7 319.8l12.2 6.7M753.4 321.4l12.7 0.1M755.3 325.9l16.8 -0.7M755.4 326.1l16.4 0.6M756.1 327.9l15.1 5.1M756.1 327.9l-3.1 11.2M756.3 328.4l-7.4 11.5M759.0 334.7l-5.0 14.2M759.4 335.7l-8.3 17.8M760.0 337.1l-12.4 15.2M761.0 339.5l-12.7 11.9M247.4 433.1l18.2 1.3M252.2 430.0l0.5 -18.1M252.2 430.0l17.6 4.7M253.0 429.5l2.9 -13.8M253.0 429.5l15.8 1.1M258.5 426.0l11.7 7.1M261.1 424.4l4.4 -15.6M262.7 423.3l-1.9 -17.3M269.4 419.0l-1.6 -17.7M269.4 419.0l16.4 1.1M270.9 418.1l3.4 -12.7M271.4 417.7l15.6 1.1M272.1 417.3l-3.2 -15.8M275.9 414.9l-0.5 -13.1M276.5 414.5l-1.4 -19.0M278.7 413.1l11.8 6.8M279.1 412.8l1.8 -15.5M281.1 411.5l6.9 -17.8M281.1 411.5l17.0 12.4M283.2 410.2l5.8 -19.4M288.1 407.1l11.7 7.8M295.3 402.5l17.9 1.3M297.3 401.2l-2.9 -21.6M297.8 400.8l-0.8 -18.0M297.8 400.8l11.6 7.3M300.9 398.9l-2.5 -13.2M301.4 398.5l4.9 -17.4M304.3 396.7l-0.3 -21.2M305.3 396.1l4.1 -12.3M306.0 395.6l2.4 -14.6M306.0 395.6l11.3 6.3M307.9 394.4l5.9 -18.9M309.2 393.6l-0.1 -22.3M311.5 392.1l10.8 6.7M313.9 390.5l-0.2 -12.9M315.5 389.5l-0.6 -16.5M316.2 389.1l5.4 -17.6M317.2 388.5l0.4 -17.8M317.2 388.5l13.3 2.4M319.1 387.2l20.9 8.0M322.0 385.6l1.5 -18.5M324.1 384.7l18.7 6.4M329.0 382.8l2.5 -18.9M329.5 382.6l16.3 11.6M332.9 381.2l4.2 -19.9M336.0 380.0l6.6 -20.6M339.8 378.5l11.5 10.9M342.2 377.5l16.4 9.0M343.9 376.9l0.6 -21.0M345.4 376.2l20.4 9.3M347.7 375.3l10.2 -19.2M347.7 375.3l13.2 8.0M349.0 374.8l20.1 5.9M354.5 372.6l3.1 -13.7M356.0 372.0l2.6 -19.0M357.9 349.9l11.9 -4.4M362.4 352.2l7.0 15.4M367.3 354.6l9.8 -3.1M371.6 356.8l13.5 -8.3M372.8 357.4l8.1 -6.7M379.9 360.9l7.2 13.5M380.6 361.3l11.3 -7.7M384.2 363.1l5.8 13.6M390.6 366.3l3.7 11.1M390.9 366.4l-1.9 17.7M392.7 367.3l13.1 -2.3M394.5 368.2l8.8 -5.8M394.5 368.2l5.0 17.9M395.5 368.7l12.1 -5.1M397.7 369.9l-0.5 13.0M403.5 372.8l0.9 11.3M404.4 373.3l-0.0 13.1M405.2 373.8l16.1 -7.2M406.5 374.8l3.9 14.0M406.6 374.9l-2.5 13.5M408.4 376.2l12.9 -3.2M408.4 376.2l2.1 11.6M410.8 377.9l17.9 -1.2M413.7 380.1l1.7 11.7M415.1 381.1l-1.7 10.3M418.4 383.5l15.0 -3.4M418.4 383.5l-2.0 10.8M419.5 384.3l-0.6 17.3M424.9 388.3l15.1 -1.0M424.9 388.3l2.6 16.0M427.8 390.4l-2.1 12.1M312.1 490.7l11.6 16.1M318.5 489.3l7.5 -15.2M321.0 488.8l10.5 16.4M324.4 488.0l10.1 -15.1M325.8 487.7l16.3 9.6M333.0 486.1l9.8 10.8M334.6 485.7l9.2 -20.1M334.6 485.7l16.5 14.9M335.1 485.6l3.0 -18.7M335.7 485.5l10.7 -13.4M335.7 485.5l23.2 10.0M337.4 485.1l2.7 -17.8M342.7 484.0l4.6 -20.0M346.4 483.1l12.9 15.6M347.8 482.8l14.2 11.2M352.6 481.8l13.6 -19.7M357.9 480.6l12.1 -19.5M363.0 479.4l17.1 17.3M367.2 478.5l9.9 -24.0M368.5 478.2l16.8 9.0M370.7 477.7l9.1 -11.6M372.2 477.4l16.9 -18.8M372.8 477.3l13.5 8.2M376.2 476.5l12.6 9.5M376.8 476.4l14.3 -19.5M379.0 475.9l14.7 13.9M384.7 473.6l22.6 7.8M386.3 472.2l-0.3 -23.0M389.1 469.8l21.5 9.6M391.9 467.4l1.2 -25.5M394.6 465.1l18.7 8.6M397.2 462.9l20.9 0.2M397.9 462.4l-7.6 -24.6M401.5 459.3l18.6 -1.7M403.2 457.8l18.4 -0.1M405.4 456.0l16.8 -1.5M405.8 455.6l-3.0 -14.5M407.5 454.2l3.2 -23.1M408.1 453.7l3.0 -18.8M412.8 449.7l3.4 -17.3M413.6 449.1l22.6 9.9M415.4 447.6l20.2 -0.9M417.2 446.0l15.4 4.0M422.2 441.8l-7.9 -22.6M422.6 441.4l25.8 -0.2M425.3 439.1l-0.4 -20.6M428.1 436.8l2.5 -22.1M429.6 435.5l-4.1 -16.0M430.6 434.7l-2.7 -14.8M430.6 434.7l20.7 5.6M435.2 431.1l-3.1 -15.4M438.4 428.6l-4.1 -15.3M443.1 425.0l-6.2 -21.6M443.1 425.0l19.9 6.0M443.9 424.3l5.2 -23.7M444.1 424.2l-3.0 -14.3M445.6 423.0l22.7 8.0M445.7 422.9l-4.7 -19.9M445.7 422.9l23.7 10.3M449.6 419.9l15.5 -0.5M451.2 418.6l17.9 6.1M454.5 416.1l-3.5 -18.3M457.0 414.1l23.5 2.5M458.4 413.0l19.9 -0.9M459.2 412.4l3.1 -18.0M460.6 411.3l-2.9 -24.2M461.5 410.6l5.0 -20.4M461.5 410.6l17.8 8.6M462.6 409.7l25.9 2.4M463.7 408.9l-1.3 -16.7M464.7 408.1l-2.8 -22.7M467.2 406.1l-5.7 -21.3M469.5 404.3l-4.5 -18.3M394.1 483.5l-13.8 11.3M394.1 484.3l17.3 6.6M394.2 486.5l14.6 15.1M394.4 489.1l12.2 6.5M394.4 490.8l15.0 7.7M394.7 495.8l14.4 9.8M394.7 495.8l-12.7 5.6M394.9 499.2l13.0 14.8M394.9 499.2l-13.8 14.1M395.0 501.6l-15.9 9.3M395.2 505.5l-13.1 6.0M395.2 506.4l13.8 8.5M395.3 508.1l-13.6 16.5M395.6 514.7l-14.0 14.5M395.7 515.9l-7.9 9.1M395.8 517.6l-14.1 6.0M396.2 525.9l-13.1 8.7M396.3 528.7l13.4 11.0M396.4 530.4l-12.9 10.9M396.4 530.7l16.2 10.6M396.7 535.3l-12.2 12.1M396.8 538.8l19.7 8.3M396.9 540.8l11.0 12.1M396.9 540.8l-11.3 16.9M397.2 543.7l-10.7 15.2M397.4 544.7l-9.9 12.5M397.5 545.6l14.8 6.3M397.9 548.1l-12.9 13.0M398.2 550.3l-6.8 10.9M398.4 551.2l15.1 15.9M398.6 552.6l-11.2 8.8M399.3 557.2l14.1 12.7M399.3 557.2l-16.2 10.2M401.1 569.3l-9.9 16.9M401.3 570.6l-8.8 13.1M402.0 575.4l-13.4 13.6M402.2 576.6l-11.8 10.5M402.2 576.7l14.5 14.3M363.8 517.1l6.4 11.1M363.4 518.1l-11.5 7.0M362.7 519.9l9.5 8.9M362.1 521.4l6.9 15.6M361.8 522.2l5.9 13.4M361.0 524.3l-14.0 0.4M360.3 526.0l11.5 11.5M358.7 530.2l9.3 15.9M358.0 532.0l8.4 16.8M358.0 532.0l-12.3 1.4M355.7 537.9l10.3 15.6M355.5 538.3l-11.6 4.4M354.2 541.7l-11.9 6.6M353.2 544.1l-11.2 4.4M352.9 545.1l-14.8 2.1M352.3 546.7l5.6 15.5M351.8 547.7l4.9 15.9M350.7 550.7l7.7 18.6M349.3 554.2l9.8 13.9M346.8 559.4l-13.5 1.1M345.5 562.1l5.6 16.6M345.5 562.1l-19.8 -0.7M344.7 563.6l-20.9 0.8M343.8 565.4l-20.2 -1.9M342.7 567.7l13.0 17.1M341.7 569.5l-17.8 0.1M337.7 577.6l-16.2 8.2M337.4 578.3l-21.4 1.0M336.7 579.6l-15.1 4.5M336.4 580.1l3.0 12.6M335.4 582.2l-20.6 5.9M334.2 584.6l6.1 11.5M334.2 584.6l-12.7 1.2M330.2 592.7l-17.8 0.8M272.0 425.2l9.9 10.2M272.0 425.2l-8.8 9.6M272.1 426.4l-6.3 8.9M272.5 430.6l-11.3 10.6M272.6 432.9l-11.4 11.1M272.8 434.3l10.7 7.9M273.0 437.3l11.8 12.7M273.1 438.3l7.9 8.8M273.2 439.3l-9.6 9.9M273.2 440.3l7.9 8.6M273.4 442.3l-11.5 6.4M273.5 443.6l-8.7 12.7M273.8 447.4l-17.3 8.5M274.1 450.3l8.2 7.1M274.1 450.7l-7.4 11.5M274.6 456.3l15.0 4.7M274.8 459.3l15.6 7.4M275.4 466.4l15.7 11.5M276.0 473.4l18.1 7.2M276.5 477.3l14.4 4.5M278.7 490.4l-10.2 12.4M280.1 499.3l-8.8 8.9M280.2 500.3l-6.3 8.8M280.7 503.2l-10.9 6.2M280.8 503.9l15.3 3.0M281.1 505.5l14.3 3.2M281.4 507.3l9.7 9.9M281.9 510.3l-6.2 9.5M282.1 512.0l-12.7 10.0M282.5 514.2l-7.0 8.4M282.7 515.4l15.1 10.0M282.8 516.3l-13.3 11.2M284.0 523.8l14.8 9.3M284.3 525.4l12.0 10.7M284.5 526.8l11.5 4.6M284.5 526.8l-6.2 8.9M285.0 530.1l10.9 3.9M285.0 530.1l-10.9 9.3M285.3 531.5l-5.9 10.7M477.5 502.1l4.1 17.8M474.0 509.4l5.0 11.4M473.9 509.6l-12.8 3.0M472.8 511.9l6.5 9.7M472.8 511.9l-12.3 5.6M471.2 515.5l-15.2 0.1M470.6 516.7l6.1 11.3M469.4 519.1l10.2 12.6M468.8 520.4l4.5 12.9M468.8 520.4l-12.2 4.6M468.2 521.7l5.6 12.3M468.2 521.7l-15.2 3.6M467.3 523.5l-13.9 2.4M465.9 526.5l7.9 13.1M465.6 527.1l-16.5 -1.0M463.4 531.8l-11.1 3.4M463.1 532.4l-17.2 1.5M461.3 536.2l-11.0 2.2M250.1 472.2l9.0 11.3M250.2 473.5l12.5 5.3M250.2 473.5l-8.5 11.7M250.3 475.5l-9.0 5.5M250.4 477.8l-10.6 8.6M250.5 479.1l10.3 8.4M250.6 480.7l-12.1 9.6M251.0 487.0l8.5 6.1M251.0 487.0l-10.6 6.6M251.2 490.6l13.9 7.8M251.3 492.9l-8.9 13.6M251.4 494.9l12.3 4.8M251.5 497.0l-10.6 12.1M251.6 497.7l15.7 9.0M251.7 499.6l-12.9 6.5M252.0 504.6l13.7 10.1M252.1 506.5l9.3 8.4M252.1 506.5l-10.0 13.9M252.3 509.9l12.7 3.9M252.6 516.3l-9.4 13.1M252.9 520.7l-12.7 7.3M253.0 522.9l-8.7 9.4M253.1 524.7l-13.1 11.0M253.2 525.6l16.2 7.6M253.4 530.4l-9.2 9.7M253.6 532.4l15.2 10.7M253.6 533.0l7.6 8.7M253.7 534.1l11.0 9.7M253.8 536.0l-14.7 6.9M254.0 539.2l8.2 8.2M254.1 541.1l10.9 12.6M254.4 546.1l-7.0 10.7M254.4 547.0l-5.5 8.8M254.8 552.2l15.8 6.7M255.1 557.1l12.2 5.3M255.3 561.9l-10.0 11.8M255.4 562.8l15.0 6.2M255.5 563.7l7.6 6.9M255.5 563.7l-15.1 6.8M255.6 566.0l12.7 4.1M255.9 570.5l11.9 11.8M256.2 575.8l-11.7 7.6M256.4 579.0l11.6 10.1M256.6 582.1l-11.9 12.9M256.7 583.7l16.3 8.8M256.7 584.3l15.5 6.1M256.7 584.3l-5.9 8.3M256.8 585.9l-9.5 7.5M257.2 591.3l-11.2 13.6M257.5 597.2l13.7 12.3M257.7 599.6l16.1 9.0M257.8 602.0l11.9 5.6M257.9 604.0l11.2 9.6M248.6 564.8l14.1 1.7M248.6 564.8l-2.4 11.2M249.0 565.7l16.7 5.3M250.2 567.9l-3.2 18.3M252.1 571.4l13.4 3.4M252.8 572.8l-4.7 14.3M253.2 573.4l-2.6 16.7M255.7 578.3l11.2 1.9M256.7 580.1l-2.3 11.3M258.1 582.7l-4.3 13.7M260.1 586.4l13.5 6.1M260.1 586.4l-4.1 16.9M262.2 590.5l-6.7 17.2M264.7 597.4l14.9 7.2M267.4 605.0l16.3 10.2M268.2 607.1l-8.0 12.7M268.7 608.5l-12.3 11.3M269.0 609.3l-11.5 15.5M269.8 611.5l17.8 1.4" stroke="#1a3022" stroke-width="1.6" fill="none" stroke-linecap="round"/><path d="M246.9 192.3l-9.5 13.4M250.1 200.3l-4.1 10.4M251.6 203.9l-10.8 12.1M252.8 207.0l17.4 -0.0M254.0 210.1l-6.7 13.5M255.1 212.8l13.2 6.3M256.1 215.3l11.4 1.7M256.6 216.7l13.1 2.6M257.3 218.8l-14.1 12.5M259.1 223.9l13.9 8.9M259.1 223.9l-11.1 12.4M260.5 227.6l-7.4 12.6M260.8 228.7l14.2 0.2M261.3 230.0l11.3 7.5M261.3 230.0l-11.0 14.0M261.3 230.1l-3.4 11.3M272.0 183.2l-12.9 3.7M271.6 185.0l-13.2 2.6M271.6 185.1l13.6 8.5M271.6 185.1l-12.3 6.1M270.9 188.8l12.8 12.0M270.6 190.4l-15.0 6.7M270.2 193.0l8.2 14.0M270.2 193.0l-8.5 5.7M269.7 195.5l-13.0 8.0M269.5 196.9l8.5 11.0M269.3 197.9l8.1 13.1M268.4 202.7l10.2 7.6M268.4 202.7l-8.4 4.9M268.2 203.6l-8.9 3.9M268.1 204.3l7.7 7.1M267.8 206.2l-15.3 5.6M266.9 211.1l-13.7 9.6M266.5 213.4l12.6 7.9M266.5 213.4l-14.4 5.7M266.4 214.0l7.8 5.8M266.4 214.0l-9.4 5.2M266.3 215.0l7.1 11.8M266.2 215.5l-12.2 5.5M265.2 221.2l-10.3 5.2M264.6 224.6l-8.2 8.2M264.4 226.0l7.4 15.1M324.9 183.9l12.4 -4.4M326.4 185.5l20.1 0.1M329.3 188.5l20.5 0.4M329.3 188.5l-0.3 18.4M331.8 191.1l-3.7 22.3M332.8 192.1l18.9 1.8M333.5 192.9l17.7 0.9M334.8 194.2l17.2 -1.2M335.6 195.0l20.7 -2.9M336.1 195.6l17.8 -3.4M340.2 199.8l14.5 -3.8M342.7 202.4l14.2 -2.0M346.9 206.8l2.0 16.6M347.9 207.8l-3.5 13.7M352.4 212.8l19.4 2.9M354.3 215.1l-8.0 16.7M357.1 218.2l22.8 0.7M360.7 222.4l-0.2 18.0M362.9 225.0l20.1 0.2M364.3 226.7l-4.6 14.3M365.5 228.1l1.4 20.0M368.4 231.4l14.3 2.3M369.4 232.6l16.4 -0.7M372.4 236.2l12.7 1.8M246.8 241.0l16.8 19.4M248.0 241.0l19.4 -14.0M249.0 241.0l16.7 -18.4M249.0 241.0l20.2 20.0M249.3 241.0l18.0 -19.1M250.4 241.0l14.1 -11.3M251.7 241.0l20.8 18.9M253.2 241.0l7.0 17.9M254.2 241.0l7.6 19.1M254.8 241.0l16.6 18.6M257.5 241.0l13.8 16.3M259.3 241.0l9.1 24.5M263.5 241.0l7.9 -17.1M266.0 241.0l8.3 -16.2M266.0 241.0l13.1 10.4M268.1 241.0l23.4 -18.0M272.1 241.0l10.3 -18.4M272.9 241.0l17.5 23.0M274.3 241.0l17.5 -16.5M275.3 241.0l18.2 -22.4M280.9 241.0l15.1 16.6M283.3 241.0l6.6 -17.8M288.7 241.0l9.1 -17.3M292.7 241.0l7.2 15.2M295.6 241.0l8.5 19.8M297.3 241.0l14.0 19.0M298.1 241.0l16.6 -13.2M300.4 241.0l11.9 -17.5M300.4 241.0l13.4 20.1M301.6 241.0l15.4 12.1M303.0 241.0l17.9 -21.3M304.2 241.0l9.0 -18.6M305.3 241.0l21.4 15.1M308.6 241.0l13.8 11.2M310.6 241.0l16.6 -23.4M312.7 241.0l15.6 -20.2M312.9 241.0l10.7 -15.6M315.9 241.0l17.6 -18.6M316.2 241.0l21.8 -16.5M322.2 241.0l9.8 -23.5M322.2 241.0l9.6 24.1M323.2 241.0l9.8 -17.2M323.2 241.0l19.0 13.7M323.7 241.0l14.3 14.1M327.5 241.0l18.1 -19.8M328.6 241.0l14.4 -19.0M332.4 241.0l17.5 -15.4M340.3 241.0l9.5 -19.5M340.6 241.0l13.2 -19.2M340.6 241.0l11.6 19.1M342.3 241.0l13.7 -12.0M342.3 241.0l16.6 21.0M342.7 241.0l20.2 19.5M344.7 241.0l9.2 -17.2M344.7 241.0l19.2 22.5M346.0 241.0l11.6 -27.2M347.1 241.0l9.8 -18.9M348.6 241.0l18.7 -13.3M352.2 241.0l11.5 -12.4M353.7 241.0l6.4 16.1M354.2 241.0l11.1 14.6M356.8 241.0l21.5 15.5M357.4 241.0l12.2 11.1M359.2 241.0l12.3 10.8M359.5 241.0l17.6 -17.1M359.5 241.0l15.3 19.3M360.9 241.0l9.8 -22.0M360.9 241.0l13.2 18.1M306.5 278.1l17.7 -10.2M313.8 280.1l12.7 -9.5M320.8 282.0l7.9 -10.6M320.8 282.0l5.3 18.9M322.0 282.4l7.8 20.5M324.1 282.9l4.3 16.0M326.2 283.5l10.9 -7.6M326.2 283.5l6.5 18.3M328.0 284.0l11.9 -4.4M329.8 284.5l11.0 -13.1M331.4 284.9l11.8 -11.6M334.4 285.7l5.4 17.9M335.3 286.0l17.5 -9.1M335.7 286.1l4.5 13.5M339.5 287.1l11.4 16.2M340.5 287.4l8.9 -11.8M342.4 287.9l7.3 20.3M343.6 288.3l5.5 19.5M346.7 289.1l10.2 -10.5M349.2 289.8l1.6 15.3M353.1 290.9l18.7 -11.3M354.1 291.2l5.1 18.3M355.6 291.6l15.4 -8.5M356.4 291.8l14.2 -5.0M358.9 292.6l13.0 -9.6M358.9 292.6l6.0 15.6M362.0 293.5l11.7 -11.7M363.2 293.8l1.5 17.4M364.5 294.2l7.0 20.2M366.6 294.8l14.4 -9.9M370.9 296.0l2.4 13.6M372.1 296.4l7.7 -9.8M375.5 297.4l13.5 -12.3M376.1 297.5l13.4 17.2M376.9 297.8l9.2 14.3M382.9 299.5l15.8 -7.3M382.9 299.5l9.8 14.7M384.1 299.9l10.1 -7.2M385.7 300.3l12.3 -10.1M385.7 300.3l1.4 13.2M388.6 301.2l2.3 15.4M390.9 301.8l14.7 -6.5M391.6 302.0l13.4 -7.3M381.5 188.5l1.1 14.0M385.2 189.5l11.6 -5.1M386.5 190.0l2.2 17.4M388.1 190.4l3.6 18.0M388.2 190.5l12.0 -8.4M389.4 190.8l2.7 14.6M390.8 191.2l5.8 14.9M391.6 191.5l7.5 -10.0M392.5 191.7l5.8 13.8M395.3 192.6l8.4 14.1M397.1 193.1l6.4 10.7M400.0 194.0l2.0 14.3M402.3 194.7l10.8 17.1M405.0 195.5l11.9 -10.3M405.0 195.5l7.9 16.7M406.9 196.1l1.6 14.9M408.9 196.7l10.2 -11.7M408.9 196.7l7.7 12.7M410.9 197.3l18.6 -7.1M410.9 197.3l10.1 13.1M412.1 197.6l15.3 -5.4M415.6 198.7l3.5 13.1M417.0 199.1l1.2 15.0M420.6 200.2l12.1 -10.7M425.9 201.8l11.5 -11.7M425.9 201.8l5.9 14.6M426.9 202.1l11.1 -10.4M426.9 202.1l6.8 10.4M427.5 202.3l12.1 -4.3M428.5 202.6l6.2 19.4M430.3 203.1l3.3 14.7M431.6 203.5l3.7 20.9M434.9 204.5l8.6 19.6M436.5 204.9l14.7 -9.4M438.1 205.4l14.6 -8.5M438.8 205.6l11.4 -4.7M438.8 205.6l12.7 16.5M439.9 206.0l3.3 17.3M442.2 206.7l14.3 -9.8M442.6 206.8l12.9 -12.8M442.6 206.8l1.4 12.4M444.0 207.2l8.5 -10.7M444.0 207.2l10.7 16.3M447.2 208.2l15.8 -5.6M447.8 208.3l8.7 12.6M470.4 188.2l11.9 -4.8M471.7 188.7l2.2 16.2M476.9 190.8l9.7 -5.0M476.9 190.8l7.0 18.4M477.3 190.9l9.3 -7.1M478.4 191.4l6.9 14.0M479.0 191.6l17.3 -7.6M479.0 191.6l4.3 14.9M480.5 192.2l13.4 -3.7M486.0 194.4l13.7 -13.3M489.7 195.9l5.0 14.7M492.6 197.0l15.9 -11.1M493.0 197.2l12.6 -7.4M497.3 198.9l18.1 -4.7M497.3 198.9l7.1 12.1M499.8 199.9l16.8 -6.9M500.6 200.1l4.3 12.1M508.2 201.6l7.9 -10.0M513.8 202.8l5.0 11.2M516.7 203.3l8.8 -13.5M516.7 203.3l10.6 11.8M518.1 203.6l14.6 -6.6M520.9 204.2l9.5 13.7M521.2 204.2l14.8 -6.9M524.5 204.9l6.5 9.0M528.7 205.7l10.5 -7.0M532.4 206.5l5.3 16.4M536.5 207.3l9.5 12.2M547.5 195.7l20.3 -5.5M548.0 196.3l-0.6 21.6M550.2 198.7l-4.9 11.9M551.9 200.5l18.6 -6.4M551.9 200.5l-1.8 17.5M554.4 203.4l19.1 3.3M556.2 205.3l-7.8 19.3M558.8 208.2l-3.0 17.7M559.8 209.3l16.8 1.1M560.3 209.8l17.8 -4.7M561.4 211.0l20.3 -1.4M561.4 211.0l-3.5 13.4M565.9 216.4l17.1 -0.1M570.0 222.4l14.1 -0.6M570.9 223.7l-7.7 20.4M572.0 225.2l-9.4 15.8M572.6 226.1l-1.6 15.2M496.9 250.1l12.0 17.1M502.1 250.2l8.6 -20.5M505.7 250.3l11.6 15.2M512.7 250.5l12.1 -23.7M513.2 250.5l12.8 24.3M518.9 250.7l14.8 14.4M521.0 250.7l19.3 20.7M522.4 250.8l14.5 -19.3M523.7 250.8l15.5 -21.2M527.2 250.9l12.3 17.7M527.6 250.9l23.1 -17.6M527.6 250.9l24.4 18.3M532.4 251.1l17.6 14.5M533.8 251.1l22.7 19.2M534.5 251.1l13.2 -18.1M534.5 251.1l19.9 17.6M537.6 251.2l18.9 -16.3M538.5 251.2l22.7 19.0M542.1 251.3l13.7 -25.3M542.9 251.4l12.2 -16.0M545.9 251.5l16.4 22.7M550.2 251.6l18.4 -23.6M550.2 251.6l17.3 16.3M551.4 251.6l9.5 -13.9M556.9 251.8l24.4 -18.1M556.9 251.8l14.4 23.2M563.3 252.0l13.9 11.6M566.3 252.0l20.1 -15.6M567.4 252.1l19.0 15.7M569.6 252.1l15.1 25.7M571.0 252.2l20.6 -17.7M572.5 252.2l11.1 17.1M573.5 252.2l18.7 -13.7M573.5 252.2l14.7 15.7M574.4 252.3l16.5 -11.5M575.7 252.3l15.3 -12.0M576.8 252.3l14.2 -9.6M576.8 252.3l10.5 13.2M577.0 252.3l8.7 -17.7M578.4 252.4l12.9 23.9M580.0 252.4l10.0 -23.7M581.0 252.5l10.4 -26.2M583.6 252.5l8.7 -17.2M583.6 252.5l11.7 12.9M587.1 252.6l20.7 -22.7M591.5 252.8l13.1 -23.4M592.4 252.8l15.1 24.9M597.4 252.9l19.8 19.6M600.6 253.0l7.2 19.3M602.7 253.2l13.8 -25.2M604.9 253.4l12.5 13.2M606.2 253.5l17.3 22.0M607.1 253.5l18.9 24.1M607.7 253.6l14.2 21.2M611.1 253.8l14.6 18.3M611.7 253.9l6.0 17.7M617.8 254.3l6.1 15.8M621.1 254.6l16.0 -23.2M624.2 254.8l7.4 21.8M630.1 255.3l9.8 24.5M630.7 255.3l23.0 -19.4M633.3 255.5l12.5 24.6M635.6 255.7l12.4 -13.9M639.5 256.0l22.2 -15.4M639.5 256.0l15.2 19.8M644.0 256.3l14.7 -18.9M647.0 256.5l7.9 22.2M651.5 256.9l24.8 -16.1M651.5 256.9l18.3 17.6M656.8 257.3l17.2 -18.0M660.6 257.5l12.7 -19.3M660.6 257.5l5.6 17.6M663.3 257.7l17.9 -19.0M666.6 258.0l15.4 18.3M667.9 258.1l12.8 14.8M668.8 258.2l5.8 19.6M670.0 258.3l12.5 21.7M672.0 258.4l9.1 -16.8M674.7 258.6l18.3 -11.1M681.0 259.1l15.4 -18.7M682.4 259.2l18.7 -15.9M683.2 259.2l17.1 19.3M685.8 259.4l7.1 21.4M689.6 259.7l18.5 15.6M691.4 259.8l11.0 -12.9M692.3 259.9l25.7 -15.4M692.7 259.9l18.2 23.6M698.2 260.3l16.2 22.5M699.3 260.4l14.4 -9.6M699.3 260.4l17.5 14.5M700.8 260.5l8.1 20.3M703.3 260.7l9.2 22.4M705.9 260.9l13.3 25.7M708.0 261.0l22.2 18.4M708.7 261.1l14.1 -20.4M711.3 261.3l20.6 -12.6M711.3 261.3l8.2 24.2M711.5 261.3l9.0 15.2M713.3 261.4l8.9 27.6M715.9 261.6l10.2 14.2M717.0 261.7l14.0 14.0M718.0 261.8l9.9 15.8M719.1 261.8l17.9 24.9M720.0 261.9l14.7 22.6M727.8 262.5l14.2 22.3M729.8 262.6l16.8 -12.7M730.8 262.7l13.9 13.3M735.2 263.0l10.1 -16.7M736.3 263.1l19.8 20.3M738.9 263.3l9.5 14.4M747.4 263.9l23.0 19.8M756.4 264.6l11.1 17.4M756.6 264.6l14.9 -21.3M759.8 264.8l9.2 15.2M761.0 264.9l9.4 -20.9M762.0 265.0l12.5 -17.8M762.0 265.0l21.2 18.1M763.8 265.1l21.5 21.8M765.0 265.2l13.1 10.9M771.1 265.6l15.5 15.4M775.1 265.9l9.0 -16.4M775.1 265.9l19.9 17.5M776.1 266.0l20.7 -15.3M778.4 266.2l6.8 22.7M779.4 266.2l22.6 -19.1M779.7 266.3l18.1 -24.8M782.4 266.4l11.3 14.3M784.9 266.6l15.0 -12.3M784.9 266.6l10.8 17.3M786.9 266.8l9.1 -14.8M788.5 266.9l10.1 -14.6M625.7 183.8l-5.9 18.5M626.7 184.8l2.2 18.1M631.2 189.7l-7.1 22.1M632.1 190.7l0.3 16.0M635.2 194.0l-3.7 24.3M635.9 194.7l23.9 -5.8M636.5 195.4l16.5 -2.1M637.9 197.0l15.3 0.9M638.9 198.0l1.7 19.0M641.0 200.3l13.8 -2.6M642.2 201.5l18.5 -0.9M644.2 203.8l21.1 -5.5M648.4 208.2l13.8 0.9M648.9 208.8l-1.6 19.3M649.4 209.3l15.1 -2.1M650.9 211.0l-9.9 18.8M653.2 213.7l-8.8 20.9M654.8 215.6l19.7 2.4M656.6 217.6l24.2 0.8M657.2 218.3l17.1 -0.9M660.7 222.3l-0.4 17.0M661.7 223.5l15.9 3.7M664.4 226.6l14.2 -4.5M667.2 229.7l20.0 -7.3M668.2 230.9l14.8 -1.8M668.2 230.9l-5.5 15.5M669.1 231.9l-4.5 13.1M675.4 238.6l18.2 -2.4M678.2 241.6l-0.9 14.0M679.7 243.1l22.0 0.6M680.5 244.0l2.5 24.4M681.3 244.8l22.9 3.6M682.4 246.0l-8.7 20.7M685.8 249.5l-0.8 19.7M686.4 250.2l13.3 -4.8M687.4 251.2l20.1 -5.0M691.3 255.3l22.1 -5.8M691.4 188.6l-4.7 14.2M692.5 190.9l13.3 1.3M692.5 190.9l-5.9 18.8M693.4 192.6l18.7 5.1M694.6 195.0l15.4 6.8M695.0 195.7l-8.2 10.3M695.6 196.8l11.3 2.3M696.4 198.5l-7.4 14.3M697.2 199.9l15.5 2.6M697.5 200.5l-5.2 11.6M698.8 203.0l15.2 -1.4M700.1 205.5l-4.5 14.8M701.5 208.3l15.2 -0.9M701.8 208.8l-8.1 15.7M702.6 210.4l16.0 5.3M703.1 211.3l14.1 6.8M704.8 214.6l11.4 3.8M705.1 215.2l16.1 4.9M705.8 216.3l-4.4 14.4M707.9 219.9l11.7 3.0M707.9 219.9l-7.4 13.9M708.9 221.5l-5.3 13.5M710.6 224.4l-2.6 14.1M712.8 228.1l-8.8 11.3M713.8 229.6l-7.1 11.7M714.2 230.4l14.9 2.2M716.3 233.9l16.1 -3.0M716.9 234.9l-1.7 18.9M717.6 236.0l-7.0 11.5M718.5 237.5l13.5 3.1M719.1 238.5l16.2 1.4M605.6 284.8l13.5 -12.3M605.6 284.8l1.4 12.5M607.0 285.5l2.5 12.1M607.8 285.9l11.3 -3.2M611.3 287.7l-0.2 14.6M618.2 291.1l9.9 -7.9M618.2 291.1l2.2 12.8M620.0 292.0l0.9 16.7M622.0 293.0l-0.6 11.0M626.6 295.3l4.7 13.9M627.3 295.6l13.9 -5.6M629.3 296.6l2.3 12.5M629.9 296.9l12.6 -4.0M632.4 298.2l18.2 -3.9M635.6 299.8l1.6 15.5M637.1 300.5l2.1 14.2M637.5 300.7l-1.2 14.1M642.1 303.9l12.2 -5.0M644.6 306.0l15.4 -6.5M646.9 308.0l2.1 12.2M652.3 312.7l-5.2 13.5M653.7 314.0l-2.5 16.0M656.4 316.3l12.7 0.5M657.5 317.3l12.5 -5.2M658.9 318.5l15.4 -0.3M663.4 322.5l-1.3 10.7M665.2 324.0l13.4 0.7M666.2 324.9l16.4 -2.6M666.8 325.4l12.9 -6.1M666.8 325.4l2.1 14.5M668.3 326.7l-3.0 13.0M671.2 329.3l19.1 0.4M744.5 295.5l-10.8 12.1M745.0 297.0l13.5 6.0M745.1 297.4l18.2 6.7M745.5 298.6l14.8 1.0M746.3 300.9l-6.7 19.3M746.9 302.8l-8.4 15.3M747.4 304.3l-10.4 10.3M747.7 305.2l-6.0 19.3M748.6 307.7l12.4 1.6M748.6 307.7l-6.6 14.9M749.0 308.9l13.2 7.4M749.4 310.2l18.8 5.8M749.8 311.4l19.7 1.2M751.1 315.2l14.5 2.2M751.1 315.2l-4.7 13.2M751.7 317.0l18.4 2.6M752.7 319.8l-7.8 15.3M753.2 321.0l-8.1 9.4M754.1 323.0l13.7 1.0M754.6 324.2l19.5 6.4M755.3 325.9l-6.1 18.5M756.9 329.7l-9.1 12.6M758.2 333.0l-6.1 19.8M759.4 335.7l11.4 2.5M759.6 336.3l-11.8 15.8M761.2 340.2l-5.9 12.4M761.6 341.2l-7.3 16.6M246.7 433.6l7.9 -21.5M247.4 433.1l6.4 -19.8M248.9 432.1l5.7 -21.1M249.7 431.6l2.2 -20.4M249.7 431.6l17.7 3.2M253.9 428.9l17.5 13.1M254.2 428.8l-0.7 -20.3M254.9 428.3l-2.7 -21.7M256.6 427.2l-1.6 -13.5M256.6 427.2l14.0 5.6M262.0 423.7l20.9 8.1M262.7 423.3l12.8 6.6M267.1 420.5l21.9 2.1M268.9 419.4l15.3 11.4M272.1 417.3l14.7 10.5M273.2 416.6l-4.5 -20.8M273.2 416.6l22.2 1.9M273.8 416.2l2.8 -20.4M282.4 410.7l-2.8 -17.8M283.7 409.9l0.4 -14.2M283.7 409.9l13.5 4.1M286.2 408.2l15.2 6.5M289.4 406.2l0.9 -13.1M289.8 406.0l1.1 -17.4M291.2 405.0l4.6 -21.3M293.4 403.7l2.3 -13.2M295.3 402.5l-0.5 -21.0M296.5 401.7l13.5 7.0M299.5 399.7l4.6 -18.5M300.9 398.9l19.0 3.9M303.1 397.5l6.5 -16.5M303.4 397.3l-3.1 -14.4M309.7 393.3l1.9 -20.8M310.7 392.6l1.5 -14.3M310.7 392.6l14.1 3.7M316.2 389.1l13.3 8.9M317.9 388.0l-0.9 -16.7M317.9 388.0l17.9 13.0M319.3 387.1l3.0 -19.7M320.1 386.6l-0.6 -14.7M325.1 384.4l7.3 -13.3M325.1 384.4l19.1 12.0M329.5 382.6l0.4 -16.4M331.3 381.9l19.6 5.4M332.9 381.2l11.9 10.0M333.7 380.9l8.1 -13.4M337.9 379.2l1.4 -12.8M337.9 379.2l11.3 5.9M340.0 378.4l6.0 -11.8M345.4 376.2l3.7 -16.0M350.7 374.1l13.3 6.2M352.6 373.3l7.3 -12.4M353.7 372.9l13.6 10.3M354.5 372.6l17.7 10.5M356.0 372.0l15.3 5.3M356.4 349.2l6.0 11.2M360.4 351.2l16.9 -6.8M360.4 351.2l7.5 16.3M361.5 351.7l4.3 13.9M364.7 353.3l5.9 13.9M366.1 354.0l15.1 -4.5M367.3 354.6l4.9 9.9M367.5 354.7l12.1 -4.8M368.9 355.4l10.7 -8.8M370.6 356.3l14.4 -3.2M374.0 358.0l3.2 10.9M374.9 358.5l12.2 -8.4M374.9 358.5l0.5 13.4M376.8 359.4l13.1 -6.4M378.1 360.1l0.1 16.9M378.8 360.4l14.8 -7.2M378.8 360.4l-0.6 11.2M379.9 360.9l11.0 -2.9M381.7 361.9l17.2 -4.2M381.7 361.9l6.1 12.6M383.1 362.5l11.9 -1.9M385.1 363.6l0.5 13.2M386.7 364.4l10.7 -6.5M387.3 364.7l1.8 10.1M388.1 365.1l16.3 -8.8M389.8 365.9l2.1 17.5M395.5 368.7l5.8 12.3M395.7 368.8l1.5 12.0M397.7 369.9l15.7 -9.8M399.8 370.9l12.8 -6.0M399.8 370.9l1.6 12.3M401.4 371.7l11.0 -2.9M401.4 371.7l0.5 17.3M403.5 372.8l8.6 -7.1M404.4 373.3l12.5 -1.1M407.8 375.8l17.3 -6.2M409.9 377.3l11.5 -7.4M411.1 378.2l-1.4 12.0M413.7 380.1l13.2 -0.1M419.5 384.3l12.8 0.0M421.5 385.8l1.1 13.1M423.8 387.5l1.3 13.1M424.3 387.8l2.8 11.5M425.8 389.0l0.3 10.6M429.7 391.8l2.2 17.9M311.2 491.0l4.7 -23.5M312.1 490.7l3.4 -25.0M314.0 490.3l9.6 -10.8M314.0 490.3l17.5 15.3M314.2 490.3l9.7 -10.7M314.2 490.3l11.0 16.0M315.3 490.0l7.9 -15.4M319.5 489.1l13.5 12.0M322.1 488.5l10.8 15.5M322.4 488.5l6.3 -18.5M324.3 488.0l12.0 -15.6M325.8 487.7l3.9 -16.8M327.4 487.3l5.3 -18.5M328.4 487.1l15.1 10.0M328.9 487.0l11.6 -16.5M339.8 484.6l21.6 11.7M341.8 484.2l9.4 -14.5M341.8 484.2l19.8 8.6M344.7 483.5l3.6 -15.8M344.7 483.5l15.5 14.7M345.5 483.3l4.2 -24.8M345.5 483.3l9.7 14.9M348.9 482.6l15.3 -20.9M349.8 482.4l12.4 -18.4M350.2 482.3l10.4 -11.8M351.2 482.1l14.4 -16.3M357.9 480.6l14.8 19.2M360.2 480.1l7.0 -14.4M364.9 479.0l3.5 -22.7M369.3 478.1l10.4 -13.5M374.2 476.9l17.5 7.5M375.3 476.7l11.3 -20.0M375.3 476.7l20.8 11.1M378.1 476.1l12.8 -19.6M379.0 475.9l12.0 -22.2M380.8 475.5l9.5 -13.0M380.8 475.5l14.6 10.2M381.1 475.4l16.2 8.9M383.3 474.7l24.6 1.5M384.3 473.9l-2.3 -14.5M387.4 471.3l23.5 -1.5M389.1 469.8l1.6 -19.2M390.1 469.0l-4.1 -17.2M390.5 468.6l0.1 -25.0M394.2 465.5l-5.3 -18.0M394.6 465.1l4.9 -25.8M395.4 464.5l15.2 2.3M397.9 462.4l15.9 8.3M402.1 458.8l0.2 -15.4M402.7 458.3l-3.0 -16.2M402.7 458.3l22.7 9.3M404.4 456.9l0.7 -14.9M405.8 455.6l14.7 -0.5M406.5 455.1l15.2 8.5M407.5 454.2l18.8 5.5M408.1 453.7l19.4 -1.4M409.4 452.6l20.8 5.5M410.1 452.0l-4.3 -16.7M414.2 448.5l2.2 -17.8M415.2 447.7l14.8 1.3M415.4 447.6l-4.8 -16.0M416.3 446.8l16.7 1.1M418.1 445.2l-0.8 -17.4M419.6 443.9l-6.4 -25.4M419.6 443.9l18.8 8.5M420.2 443.4l-0.9 -22.5M422.2 441.8l17.5 1.8M425.3 439.1l21.8 9.2M425.9 438.6l17.0 4.0M429.6 435.5l20.1 10.3M431.3 434.2l23.0 5.6M431.8 433.8l16.8 6.8M432.5 433.2l14.4 2.8M433.4 432.5l1.1 -18.2M433.4 432.5l13.2 6.8M434.5 431.7l22.4 3.7M435.2 431.1l22.8 5.9M436.2 430.3l18.9 9.0M437.2 429.6l0.8 -18.2M439.2 428.0l22.3 6.6M440.2 427.2l1.5 -25.4M441.4 426.3l19.8 10.3M441.6 426.2l-1.8 -25.5M443.9 424.3l22.8 10.3M448.2 420.9l2.2 -17.4M448.2 420.9l25.2 -0.4M451.8 418.2l22.1 12.2M452.5 417.6l-7.6 -24.8M458.1 413.2l0.9 -22.0M458.1 413.2l17.7 -0.6M459.2 412.4l25.3 0.1M460.6 411.3l20.3 4.6M462.2 410.0l22.4 1.4M462.6 409.7l-6.6 -23.8M463.7 408.9l15.6 9.3M465.1 407.8l24.6 2.9M466.0 407.1l16.3 5.6M468.2 405.3l1.8 -15.4M468.9 404.8l24.6 7.0M470.5 403.5l-5.4 -21.8M471.7 402.6l-3.4 -25.3M471.7 402.6l14.4 8.3M394.3 488.1l18.2 11.1M394.3 488.1l-12.6 5.8M394.4 490.8l-9.2 10.0M394.6 493.1l8.9 10.2M394.9 500.5l-7.4 10.9M395.0 502.3l-14.2 6.0M395.1 503.9l10.3 8.2M395.1 503.9l-10.7 11.4M395.1 504.7l-14.6 6.8M395.3 508.9l13.2 12.9M395.5 512.9l17.8 8.5M395.8 518.5l13.3 13.2M395.9 519.3l16.7 9.5M396.0 522.1l-12.8 15.8M396.1 523.5l15.1 5.1M396.1 524.4l-13.6 10.3M396.2 525.9l20.5 7.8M396.2 526.5l13.4 14.9M396.2 526.5l-7.5 11.9M396.3 527.4l12.5 7.6M396.4 530.4l12.7 9.3M396.4 530.7l-16.9 10.1M396.5 532.8l-15.0 10.0M396.6 534.4l-14.5 10.7M396.7 535.3l19.2 10.2M397.2 543.7l16.8 4.5M398.1 549.1l16.0 12.8M398.1 549.1l-16.0 10.6M398.4 551.2l-8.5 14.6M398.9 554.7l-9.5 16.1M399.1 556.1l13.4 4.9M400.0 561.7l11.2 8.2M400.0 562.1l16.0 5.3M400.5 565.1l-13.6 8.5M400.6 565.9l13.8 6.6M400.7 566.7l-13.4 9.6M400.8 567.5l-6.8 12.7M401.6 572.5l-10.5 14.7M401.6 572.6l-10.4 7.5M401.9 574.5l-15.8 14.7M402.0 575.4l16.0 11.6M402.2 576.6l11.8 7.0M402.4 577.9l13.0 7.8M402.4 577.9l-8.2 14.6M402.6 579.6l-9.3 9.8M402.9 581.2l14.6 12.8M363.8 517.1l-11.9 5.8M362.7 519.9l-17.0 2.5M361.8 522.2l-17.3 5.8M361.1 524.0l-20.3 4.6M361.0 524.3l8.8 15.8M360.4 525.7l14.5 13.8M360.4 525.7l-18.3 2.0M359.9 527.1l7.0 11.1M359.4 528.3l4.7 13.7M359.4 528.3l-13.4 8.7M358.9 529.5l9.0 12.6M358.7 530.2l-17.5 4.7M358.3 531.2l11.0 14.0M358.3 531.2l-13.2 2.0M357.4 533.6l8.9 16.0M357.2 534.1l-20.0 4.2M354.2 541.7l14.0 13.8M353.7 542.9l-14.5 8.0M353.6 543.3l8.5 11.2M353.6 543.3l-17.7 6.6M353.2 544.1l13.2 11.8M352.9 545.1l12.3 14.0M352.3 546.7l-21.7 2.6M351.8 547.7l-16.0 6.2M351.7 548.2l-20.7 0.4M351.2 549.4l5.9 14.1M350.5 551.1l-18.2 6.1M349.3 554.2l-19.6 3.9M348.3 556.5l3.8 17.4M348.3 556.5l-11.0 5.1M347.8 557.5l3.4 15.3M346.5 560.1l-11.9 5.1M346.0 560.9l-15.0 1.3M344.7 563.6l12.2 14.0M342.3 568.3l-17.0 6.2M341.7 569.5l11.5 16.6M340.0 573.0l-20.1 0.5M339.2 574.6l-13.6 1.7M338.7 575.6l6.5 12.8M336.4 580.1l-16.1 6.2M335.4 582.2l8.2 19.6M334.6 583.8l7.3 19.7M333.1 586.9l-13.3 2.4M332.8 587.4l-19.7 1.3M332.3 588.4l2.8 16.8M332.3 588.4l-19.5 0.8M272.6 432.3l-12.3 6.0M272.8 435.0l-12.8 8.2M273.2 440.3l-12.1 13.4M273.8 447.1l9.9 7.3M273.8 447.1l-9.5 10.0M273.9 448.8l12.2 5.8M274.2 452.4l-7.6 11.9M274.3 453.5l11.4 12.7M274.5 455.6l15.0 11.4M274.8 458.8l-15.2 11.3M275.0 461.2l-7.3 9.1M275.0 462.0l10.1 4.1M275.1 463.1l-10.0 12.4M275.5 467.8l10.0 11.7M275.6 469.6l15.1 6.1M275.6 469.6l-9.5 15.7M276.5 477.3l-12.0 7.0M277.5 483.1l17.8 4.6M277.5 483.1l-9.8 9.6M277.8 485.1l9.5 5.7M278.2 487.7l14.6 5.2M278.5 489.5l14.5 4.8M278.7 490.9l-10.5 8.0M279.1 493.5l9.3 6.6M279.6 496.2l-13.5 14.2M280.2 500.3l16.1 8.7M280.5 502.1l-8.4 7.3M281.1 505.5l-9.9 11.1M281.1 505.8l-7.3 8.7M282.1 511.8l-15.1 10.0M282.1 512.0l8.0 7.8M282.4 513.8l-14.6 9.7M283.1 517.9l-11.2 9.1M283.4 520.1l-12.7 10.6M283.5 520.7l15.9 9.8M283.5 520.7l-9.8 16.9M285.8 534.8l8.3 8.0M477.0 503.2l6.1 18.3M474.6 508.3l-12.6 -0.5M473.4 510.6l-16.8 3.3M471.4 514.9l-17.6 6.7M470.3 517.3l-18.4 -1.5M469.5 519.0l6.9 14.0M469.4 519.1l-19.6 -1.5M467.8 522.5l7.8 9.3M466.6 525.0l-16.2 0.8M465.9 526.5l-12.6 -0.8M465.2 528.0l9.4 16.7M465.2 528.0l-12.9 1.0M463.8 530.9l4.0 10.0M463.4 531.8l9.0 9.2M463.1 532.4l3.6 18.5M462.5 533.7l7.3 10.7M462.5 533.7l-18.5 2.7M462.2 534.4l-11.6 3.2M250.1 471.0l-7.9 7.7M250.1 472.2l-16.6 8.4M250.4 477.8l11.5 8.6M250.5 479.1l-7.6 6.8M250.6 479.9l9.1 4.8M250.6 479.9l-6.1 9.1M250.6 480.7l8.5 10.5M250.8 483.4l10.8 8.6M250.8 484.0l11.4 11.7M250.8 484.0l-8.9 5.6M250.9 485.3l-16.5 7.5M250.9 486.2l10.3 7.9M251.0 488.2l-10.5 13.8M251.1 489.9l16.3 7.5M251.1 489.9l-11.9 8.8M251.3 492.9l12.2 4.9M251.4 494.2l-12.4 7.1M251.6 497.7l-13.6 12.4M251.7 499.6l13.1 7.8M251.9 503.4l13.4 11.7M251.9 503.4l-7.4 10.2M252.1 506.0l-9.2 9.0M252.2 507.9l10.4 5.8M252.3 510.6l10.5 4.8M252.4 511.9l9.0 9.2M252.4 512.4l10.8 6.0M252.5 514.2l-5.8 8.7M252.6 516.3l12.0 3.8M252.7 516.8l14.0 8.0M252.7 516.8l-12.1 12.9M252.8 518.2l17.3 6.7M252.8 519.6l12.0 7.4M252.9 520.7l11.9 8.6M253.0 522.9l11.5 4.5M253.0 523.3l11.3 5.4M253.0 523.3l-12.7 13.0M253.3 527.7l11.0 4.7M253.3 527.7l-10.2 8.2M253.5 531.4l-13.2 9.1M253.7 535.0l12.9 12.8M253.8 536.0l13.1 9.1M253.9 538.9l-9.0 10.5M254.2 543.1l-10.9 10.4M254.3 544.3l11.4 4.5M254.4 546.1l11.1 4.2M254.4 547.0l12.2 7.5M254.5 547.8l9.7 9.7M254.6 549.0l-13.1 10.0M254.7 550.9l11.8 13.3M254.8 552.6l9.6 8.3M255.0 556.3l13.5 9.4M255.0 556.3l-9.2 11.2M255.1 558.0l12.0 9.8M255.2 559.1l-7.3 8.3M255.3 560.6l10.3 5.0M255.7 567.7l13.5 11.6M255.8 568.5l16.1 7.9M255.8 568.5l-14.0 6.8M255.8 569.5l-7.2 9.8M255.9 570.5l-13.5 7.6M255.9 571.6l15.7 6.9M256.0 572.9l-11.2 5.4M256.1 574.4l-8.8 12.1M256.3 576.8l11.3 3.6M256.4 578.3l15.7 4.8M256.4 579.0l-13.6 9.1M256.9 586.8l-11.1 11.3M256.9 587.6l9.3 9.4M257.0 588.6l8.7 6.6M257.0 588.6l-6.4 8.5M257.2 591.3l15.8 7.9M257.2 591.6l8.8 7.7M257.2 591.6l-12.7 5.6M257.3 593.3l10.1 7.6M257.3 593.3l-8.6 9.1M257.4 595.1l10.7 3.3M257.4 595.1l-9.3 11.6M257.5 596.4l-9.8 7.6M257.6 598.1l13.9 9.2M257.7 600.2l12.7 5.1M257.9 603.2l8.9 8.9M257.9 604.0l-9.9 4.6M247.9 563.5l-2.9 11.4M248.5 564.6l16.4 0.8M251.7 570.8l13.2 0.3M252.8 572.8l11.6 3.0M254.6 576.1l12.7 1.1M255.2 577.2l15.6 3.1M255.2 577.2l-7.8 13.1M255.7 578.3l-6.1 18.6M256.1 578.9l19.1 -2.6M258.9 584.1l15.5 2.0M259.2 584.7l11.2 0.7M259.8 585.8l11.0 5.3M259.8 585.8l-7.1 12.2M261.0 588.1l-7.4 15.5M261.1 588.4l-7.9 11.4M261.9 589.9l-6.5 13.6M262.7 592.0l18.0 3.3M262.8 592.3l-11.6 9.8M263.4 593.9l10.1 5.4M264.0 595.4l12.3 8.1M264.3 596.4l13.4 7.0M264.7 597.4l-4.7 10.8M265.5 599.6l17.7 5.2M266.0 600.9l16.4 10.6M266.2 601.6l16.3 4.8M266.2 601.6l-5.4 16.9M266.6 602.6l-12.2 13.8M266.9 603.4l-10.7 14.8M267.4 605.0l-5.4 16.4M267.7 605.8l10.6 5.9M268.0 606.4l12.8 5.1" stroke="#13231a" stroke-width="1.6" fill="none" stroke-linecap="round"/><path d="M246.8 191.9l-8.0 15.4M248.3 195.7l13.1 5.9M248.3 195.7l-4.9 13.3M250.1 200.3l13.3 1.9M251.8 204.6l12.1 3.7M253.5 208.8l-13.3 13.2M253.6 209.1l-4.5 15.0M254.5 211.3l18.2 2.3M255.6 214.1l11.5 0.5M271.2 187.2l8.5 7.7M271.1 187.9l7.8 7.6M270.3 192.2l10.7 13.1M269.7 195.5l12.0 8.8M269.1 199.1l8.3 6.1M268.9 200.0l-8.5 7.6M267.5 208.1l8.2 7.6M267.4 208.5l-13.2 11.4M266.8 211.9l-7.3 6.7M265.6 219.0l10.2 6.7M264.8 223.2l-15.2 7.2M326.1 185.2l-7.0 15.8M333.5 192.9l-3.5 17.5M334.1 193.5l0.6 14.2M335.6 195.0l1.1 15.8M336.8 196.2l-7.2 19.6M343.6 203.4l0.5 16.6M344.6 204.4l15.5 -0.4M346.1 206.0l21.4 -5.4M346.1 206.0l-0.7 16.6M347.1 206.9l18.8 1.9M349.5 209.5l13.0 0.8M353.7 214.3l16.5 3.6M365.8 228.4l0.4 16.1M373.1 237.0l18.0 1.1M373.1 237.0l-0.7 22.7M256.2 241.0l14.5 19.0M258.3 241.0l13.3 -19.0M267.0 241.0l7.7 -16.0M268.4 241.0l11.5 -18.7M269.6 241.0l14.3 -21.2M277.4 241.0l15.8 -15.0M282.7 241.0l15.0 -25.6M290.0 241.0l17.4 -21.5M291.0 241.0l7.9 20.3M291.7 241.0l17.8 15.2M297.3 241.0l22.0 -16.4M301.6 241.0l15.8 -21.1M303.0 241.0l17.9 17.9M307.1 241.0l10.0 -26.8M307.8 241.0l14.0 -17.1M307.8 241.0l18.1 18.9M310.7 241.0l9.3 -20.6M318.2 241.0l19.3 -19.8M326.3 241.0l9.2 17.4M328.6 241.0l21.2 19.8M329.7 241.0l18.6 14.9M330.8 241.0l19.5 -20.1M330.8 241.0l9.0 14.6M331.4 241.0l10.7 20.6M336.0 241.0l12.2 -26.1M336.7 241.0l15.9 -24.0M336.7 241.0l17.5 23.3M337.3 241.0l12.1 -26.5M348.6 241.0l22.7 17.3M349.0 241.0l19.6 21.0M350.7 241.0l7.0 -17.4M352.0 241.0l13.4 -16.5M352.0 241.0l20.6 20.3M363.7 241.0l17.5 16.5M365.7 241.0l12.8 -17.0M306.5 278.1l6.5 12.4M310.8 279.3l17.3 -7.0M310.8 279.3l1.9 20.6M314.4 280.3l5.6 14.1M316.5 280.9l3.4 15.0M318.5 281.4l15.9 -8.0M318.5 281.4l6.0 11.2M319.7 281.7l6.9 14.5M322.0 282.4l12.8 -16.7M322.6 282.5l8.6 -9.1M324.5 283.1l7.8 10.0M327.1 283.8l13.2 -12.5M327.1 283.8l3.4 12.8M329.4 284.4l14.3 -10.7M329.4 284.4l1.2 13.1M329.8 284.5l9.1 18.8M331.4 284.9l6.8 15.0M335.7 286.1l16.2 -11.1M337.7 286.6l18.9 -9.5M338.1 286.8l4.2 17.3M340.5 287.4l6.1 15.8M341.4 287.7l11.7 -14.5M341.4 287.7l3.2 15.9M344.1 288.4l14.7 -9.3M344.1 288.4l8.3 16.6M345.2 288.7l13.6 -16.4M345.2 288.7l7.3 11.0M347.8 289.4l9.7 18.4M349.2 289.8l16.1 -8.4M351.2 290.4l13.4 -15.8M352.1 290.6l6.1 16.8M353.1 290.9l1.9 12.5M354.1 291.2l10.0 -9.4M355.6 291.6l6.4 13.0M359.7 292.8l14.4 -15.2M359.7 292.8l9.3 11.8M361.0 293.2l11.3 -9.7M363.2 293.8l8.5 -9.5M363.6 293.9l13.0 17.7M364.5 294.2l15.5 -9.9M366.1 294.7l13.7 -11.4M366.6 294.8l5.9 17.4M367.6 295.1l10.5 -9.4M369.0 295.5l17.0 -7.0M369.5 295.6l18.8 -6.9M369.5 295.6l6.5 10.5M370.9 296.0l9.3 -12.1M372.1 296.4l8.7 18.3M374.2 297.0l12.9 -5.0M375.5 297.4l4.0 16.4M376.1 297.5l14.6 -9.3M378.4 298.2l11.2 -9.0M380.4 298.8l18.9 -7.2M380.4 298.8l6.8 10.4M381.6 299.1l10.9 -6.9M381.7 299.2l13.7 -5.8M384.1 299.9l8.2 13.0M386.5 300.6l9.0 11.8M390.9 301.8l11.2 16.4M392.9 302.4l10.9 17.3M393.5 302.6l10.3 -6.1M393.5 302.6l9.6 11.9M380.9 188.3l10.2 -12.6M382.2 188.7l15.2 -5.4M384.1 189.2l12.2 -4.5M384.7 189.4l10.5 -11.7M384.7 189.4l3.3 11.8M388.1 190.4l16.2 -14.6M388.2 190.5l6.0 16.0M391.6 191.5l10.9 15.3M394.2 192.3l4.9 12.4M395.4 192.6l9.7 -11.9M395.4 192.6l2.5 12.9M397.9 193.4l18.5 -10.2M399.4 193.8l2.3 19.8M402.3 194.7l10.9 -7.5M403.2 195.0l13.4 -8.1M403.2 195.0l1.3 18.0M410.0 197.0l2.7 15.0M413.7 198.1l10.1 14.4M417.0 199.1l11.4 -4.9M420.6 200.2l8.6 14.2M421.7 200.5l12.4 -5.0M421.7 200.5l6.0 16.8M423.1 200.9l10.7 -11.7M423.1 200.9l3.6 21.5M423.9 201.2l14.6 -15.6M423.9 201.2l7.6 11.3M425.0 201.5l10.7 -12.8M427.5 202.3l1.9 20.3M428.5 202.6l12.9 -7.8M431.6 203.5l16.4 -11.4M433.3 204.0l10.4 17.1M434.9 204.5l14.0 -5.1M436.2 204.9l6.3 12.8M436.5 204.9l4.7 14.1M438.1 205.4l6.0 11.0M439.9 206.0l9.8 -7.3M445.4 207.6l18.2 -10.1M451.1 209.3l12.2 -4.2M451.1 209.3l4.5 19.9M453.8 210.1l3.4 16.8M454.4 210.3l11.9 18.2M456.5 210.9l1.9 12.3M458.7 211.6l15.7 -9.5M459.4 211.8l4.3 12.4M472.3 188.9l16.2 -4.5M473.6 189.4l-0.4 14.9M481.6 192.6l12.7 -12.0M483.0 193.2l3.2 15.9M486.1 194.4l18.5 -5.5M486.1 194.4l2.2 15.4M487.8 195.1l4.0 14.3M490.3 196.1l4.4 11.7M492.0 196.8l6.3 10.5M492.6 197.0l5.4 11.6M496.9 198.8l11.0 -11.2M496.9 198.8l6.6 17.8M498.4 199.4l13.7 -9.5M499.8 199.9l6.0 16.9M501.6 200.3l13.2 -8.7M501.6 200.3l4.8 13.7M502.2 200.4l9.8 17.0M503.9 200.8l7.0 -10.6M505.9 201.2l11.3 -14.3M510.4 202.1l13.7 -9.0M513.1 202.6l13.1 -7.2M517.8 203.6l10.8 -6.5M521.2 204.2l11.5 13.6M526.9 205.4l9.4 -8.8M527.7 205.5l10.9 14.2M528.7 205.7l10.2 11.7M533.6 206.7l5.3 13.2M545.9 194.0l21.6 -2.4M558.8 208.2l20.7 -0.4M562.6 212.4l20.3 4.0M563.0 212.8l-2.8 14.3M565.4 215.6l15.2 0.4M569.8 222.0l17.3 4.5M578.3 234.6l-9.2 20.5M578.6 234.9l-5.6 12.4M581.0 238.6l-4.8 13.4M495.2 250.0l16.5 12.9M499.6 250.1l15.0 18.9M502.6 250.2l15.4 21.5M504.1 250.3l13.1 18.4M504.7 250.3l11.6 -21.0M510.9 250.5l10.4 17.1M512.7 250.5l7.7 15.1M513.2 250.5l6.8 -15.9M519.9 250.7l12.9 -16.9M521.3 250.8l11.5 -13.2M526.3 250.9l14.5 12.7M529.4 251.0l19.8 -23.0M529.4 251.0l15.5 20.7M530.6 251.0l18.5 -18.7M531.7 251.0l10.1 -22.0M532.4 251.1l11.5 -15.4M533.8 251.1l22.4 -15.8M543.4 251.4l13.2 -27.2M543.4 251.4l8.5 24.1M544.8 251.4l14.7 -15.2M554.5 251.7l14.7 -27.1M559.0 251.8l10.7 -17.7M564.7 252.0l13.6 -13.6M568.6 252.1l13.3 -23.3M577.0 252.3l21.1 19.5M581.0 252.5l8.2 24.0M590.3 252.7l9.5 17.4M591.5 252.8l17.4 22.2M594.7 252.8l14.0 -23.3M594.7 252.8l14.9 18.4M595.7 252.9l13.9 -14.6M596.5 252.9l12.6 -14.2M597.4 252.9l19.8 -21.8M601.7 253.1l14.2 -11.4M603.8 253.3l13.1 -17.2M604.9 253.4l17.9 -23.5M606.2 253.5l19.1 -20.5M607.1 253.5l16.1 -20.4M610.5 253.8l16.5 17.4M611.1 253.8l15.6 -9.7M618.2 254.4l13.9 26.1M620.8 254.6l10.1 26.6M621.1 254.6l9.8 25.6M622.3 254.7l15.1 -20.6M624.5 254.8l22.2 19.0M626.8 255.0l9.0 -14.8M626.8 255.0l19.1 20.8M628.8 255.2l14.0 -22.0M636.3 255.7l10.3 -22.0M640.9 256.1l19.6 -23.2M642.4 256.2l9.1 -17.8M648.1 256.6l17.0 19.5M653.4 257.0l8.7 16.2M655.8 257.2l13.3 17.0M656.9 257.3l16.5 23.3M658.1 257.4l9.2 -20.0M665.7 257.9l13.6 -19.8M670.0 258.3l22.0 -13.2M671.6 258.4l12.7 -11.3M674.9 258.6l16.5 -23.9M681.3 259.1l18.3 -12.1M692.7 259.9l20.9 -17.2M694.9 260.1l14.8 -17.6M700.8 260.5l25.8 -16.4M701.6 260.6l12.4 -11.7M705.9 260.9l18.5 -20.1M710.4 261.2l6.2 18.0M713.3 261.4l14.7 -12.7M718.0 261.8l21.5 -16.9M725.0 262.3l13.8 -20.6M725.0 262.3l13.6 16.5M725.4 262.3l16.3 -15.6M728.3 262.5l21.6 18.4M730.8 262.7l14.5 -9.4M735.2 263.0l8.3 21.3M737.8 263.2l21.4 -17.6M739.8 263.4l11.5 -15.0M741.1 263.4l9.6 16.0M742.5 263.5l19.8 -17.0M743.4 263.6l19.5 20.7M746.9 263.9l21.4 19.9M753.0 264.3l13.4 -11.1M753.6 264.4l18.2 -13.6M756.4 264.6l11.1 -23.0M758.6 264.7l21.8 -17.2M759.8 264.8l17.0 -17.3M761.0 264.9l13.3 16.2M771.1 265.6l13.6 -14.3M771.4 265.6l18.4 19.1M776.6 266.0l9.2 -14.9M781.0 266.3l17.6 21.5M782.9 266.5l11.8 -25.5M784.3 266.6l14.1 -24.8M789.1 266.9l14.4 -10.2M628.5 186.7l18.0 2.5M632.5 191.1l-5.2 13.3M634.2 193.0l21.4 -0.7M635.9 194.7l-0.9 18.5M637.6 196.6l1.5 22.3M640.3 199.5l24.4 -2.2M645.8 205.4l24.1 -3.2M648.4 208.2l1.7 19.6M650.9 211.0l22.6 -8.4M655.6 216.4l-0.6 20.2M656.6 217.6l-1.8 23.7M657.2 218.3l-2.8 13.9M661.8 223.6l-6.7 19.6M667.9 230.6l14.1 2.7M669.7 232.7l23.3 -1.9M672.8 235.9l15.0 -5.6M674.0 237.2l-9.9 22.9M682.4 246.0l20.4 -1.8M687.4 251.2l-3.1 16.8M690.3 186.7l-4.6 18.4M690.5 187.0l16.0 7.4M690.5 187.0l-9.0 11.6M691.4 188.6l11.5 3.3M692.2 190.3l12.8 0.4M693.1 192.0l16.8 7.7M693.1 192.0l-7.7 10.4M693.4 192.6l-5.8 16.5M694.2 194.2l18.4 -2.0M694.6 195.0l-7.4 16.1M697.5 200.5l15.1 6.9M697.8 201.2l13.9 5.0M697.8 201.2l-4.9 16.6M698.6 202.7l-5.0 13.2M698.8 203.0l-5.5 10.2M700.1 205.5l18.7 6.0M700.4 206.2l17.5 3.5M700.8 206.8l14.5 3.9M700.8 206.8l-8.3 17.4M701.8 208.8l17.3 5.9M702.6 210.4l-9.3 11.5M703.1 211.3l-3.0 18.7M703.7 212.5l17.0 0.2M704.2 213.5l19.3 1.7M705.8 216.3l18.7 -3.6M706.4 217.4l-7.9 12.2M706.8 218.0l11.9 0.6M707.5 219.2l13.2 4.5M708.4 220.7l17.2 4.4M708.4 220.7l-11.5 14.3M709.5 222.4l18.4 -0.7M709.5 222.4l-4.4 17.8M710.1 223.5l-2.3 11.8M711.2 225.3l11.6 4.7M712.4 227.3l19.4 1.3M712.8 228.1l16.4 3.0M714.2 230.4l-6.2 10.4M715.2 231.9l-5.4 18.5M715.7 232.9l13.7 1.6M716.3 233.9l-3.9 12.7M716.9 234.9l17.9 1.7M717.6 236.0l13.2 -1.5M717.8 236.3l14.7 0.9M718.5 237.5l-5.8 18.5M719.1 238.5l-7.2 12.8M602.1 283.1l6.0 14.6M604.6 284.3l2.2 12.0M606.5 285.2l1.1 17.0M607.0 285.5l10.4 -7.2M607.8 285.9l3.4 11.6M609.0 286.5l13.2 -2.6M609.7 286.8l5.4 11.3M613.9 289.0l16.5 -3.5M613.9 289.0l4.4 12.9M615.7 289.8l12.2 -6.4M623.0 293.5l13.7 -11.7M624.3 294.1l11.3 -5.8M624.3 294.1l6.0 14.2M631.5 297.8l10.7 -2.5M631.5 297.8l-1.5 18.7M639.3 301.6l5.2 13.1M640.7 302.6l-3.1 14.6M641.6 303.4l1.5 12.8M642.6 304.3l-2.3 11.6M643.2 304.8l15.9 -4.9M643.2 304.8l1.3 18.4M645.3 306.6l-2.5 15.0M647.4 308.5l3.4 18.5M648.7 309.6l14.0 -1.2M650.2 311.0l12.5 -6.1M653.1 313.5l10.7 -2.8M658.9 318.5l-5.6 17.1M659.7 319.3l17.0 -5.0M660.3 319.8l2.7 15.3M661.4 320.7l15.1 1.3M662.0 321.2l17.3 -3.1M662.0 321.2l0.4 15.1M670.1 328.3l14.2 0.5M744.2 294.5l14.2 5.6M744.5 295.5l12.2 6.6M745.5 298.6l-7.8 17.5M747.2 303.5l11.3 6.0M747.4 304.3l10.6 6.0M750.4 313.1l14.0 0.9M753.2 321.0l18.3 8.5M754.4 323.8l-12.9 13.9M756.9 329.7l14.5 6.3M757.3 330.7l13.4 1.0M757.3 330.7l-11.1 17.2M757.8 331.8l17.8 3.5M760.6 338.6l12.0 7.3M760.6 338.6l-4.1 15.9M761.2 340.2l18.9 6.0M246.7 433.6l14.1 7.6M248.4 432.5l17.6 10.4M251.1 430.7l-1.6 -15.0M257.6 426.6l-2.4 -14.1M257.6 426.6l16.1 9.2M262.0 423.7l1.6 -18.0M263.2 423.0l14.8 8.1M267.1 420.5l-3.8 -21.5M268.2 419.8l17.7 3.0M268.9 419.4l5.1 -16.3M270.9 418.1l12.8 2.3M275.9 414.9l20.1 9.6M277.4 413.9l4.7 -18.9M283.2 410.2l15.4 8.1M284.8 409.2l-3.3 -19.9M284.8 409.2l20.3 5.8M285.9 408.5l-0.7 -15.2M286.2 408.2l5.8 -19.3M289.8 406.0l17.1 2.7M292.3 404.4l17.6 4.7M293.2 403.8l2.3 -17.5M299.5 399.7l16.8 9.4M299.7 399.6l15.0 10.7M303.4 397.3l12.6 5.8M306.9 395.0l21.3 5.5M307.9 394.4l12.1 5.3M313.2 391.0l-1.3 -21.0M320.1 386.6l11.0 8.1M322.1 385.5l6.3 -16.7M323.8 384.9l14.0 12.6M326.2 383.9l3.8 -14.5M327.5 383.4l8.8 -14.8M330.2 382.3l9.7 -16.6M333.7 380.9l14.4 5.1M336.3 379.9l6.5 -16.0M336.3 379.9l9.4 8.4M338.3 379.1l17.9 6.7M340.0 378.4l12.4 5.0M346.7 375.7l9.9 10.0M349.0 374.8l7.2 -14.8M358.0 350.0l13.7 -11.5M363.2 352.6l1.6 13.1M363.7 352.9l12.5 -2.1M363.7 352.9l4.9 9.5M364.7 353.3l12.5 -2.6M366.1 354.0l2.9 12.0M368.9 355.4l2.6 18.5M369.8 355.9l11.8 -9.0M372.8 357.4l5.0 11.8M373.8 357.9l0.5 17.6M375.8 358.9l-1.6 18.3M380.6 361.3l-0.6 14.4M385.1 363.6l10.9 -5.9M385.7 363.8l13.0 -8.1M388.1 365.1l-1.3 18.0M389.8 365.9l9.7 -6.4M393.1 367.6l-1.4 13.4M396.6 369.3l11.0 -6.5M401.1 371.6l2.2 17.3M402.8 372.4l13.6 -3.6M405.2 373.8l-2.5 13.9M415.4 381.4l-2.9 9.9M416.4 382.1l0.8 18.6M420.8 385.3l9.4 -5.1M420.8 385.3l3.9 13.5M422.8 386.7l15.8 -3.3M422.8 386.7l2.8 14.6M423.8 387.5l12.2 -6.6M424.3 387.8l10.7 -0.7M425.8 389.0l13.2 -7.3M427.3 390.0l14.1 -3.1M427.8 390.4l15.5 -10.2M322.4 488.5l21.3 12.1M324.3 488.0l13.8 6.3M328.4 487.1l16.1 -19.3M328.9 487.0l19.8 17.1M332.0 486.3l13.7 12.4M335.1 485.6l10.1 14.8M338.0 485.0l2.8 -14.4M338.0 485.0l11.2 9.9M340.1 484.5l13.7 6.4M343.4 483.8l7.9 12.3M347.8 482.8l5.5 -20.9M349.8 482.4l8.8 13.2M350.2 482.3l14.4 13.6M352.6 481.8l18.4 17.6M353.5 481.5l9.0 -15.5M355.1 481.2l3.5 -16.4M355.1 481.2l19.0 17.8M355.7 481.1l15.6 18.1M357.0 480.8l4.0 -17.8M357.0 480.8l15.6 19.7M361.9 479.7l20.5 8.9M367.2 478.5l11.4 9.8M368.5 478.2l7.9 -17.3M370.6 477.8l17.7 16.5M372.8 477.3l6.9 -20.1M376.2 476.5l4.9 -18.2M376.8 476.4l19.7 15.5M378.1 476.1l16.8 7.4M382.8 475.0l9.8 -15.1M390.5 468.6l25.0 -0.5M393.2 466.4l-4.2 -15.2M393.2 466.4l23.7 1.7M394.2 465.5l20.4 6.0M395.4 464.5l-5.3 -18.8M399.1 461.3l1.7 -26.2M399.2 461.3l2.0 -14.6M399.2 461.3l16.8 3.8M401.5 459.3l1.3 -14.4M402.1 458.8l20.5 6.8M404.4 456.9l24.7 6.0M409.4 452.6l-6.1 -18.6M410.6 451.6l23.0 3.7M411.7 450.6l16.8 3.9M413.6 449.1l-0.4 -22.4M414.2 448.5l24.1 9.5M416.3 446.8l-4.5 -25.1M418.9 444.6l0.6 -15.2M420.2 443.4l21.9 7.1M421.2 442.6l-3.2 -23.9M423.9 440.4l3.1 -25.2M426.7 438.0l-2.1 -20.8M428.8 436.2l15.3 -0.3M447.0 421.9l-0.9 -18.8M447.0 421.9l15.0 7.4M450.5 419.1l4.2 -20.0M450.5 419.1l24.8 6.9M451.2 418.6l0.5 -15.4M453.8 416.6l5.0 -19.0M453.8 416.6l21.0 10.4M454.5 416.1l20.8 -0.6M458.4 413.0l0.2 -19.6M470.5 403.5l17.7 10.2M471.1 403.0l-3.8 -15.4M472.8 401.7l-4.0 -21.1M474.7 400.3l4.8 -17.4M474.7 400.3l17.1 0.2M394.0 482.3l-16.3 13.4M394.1 483.5l13.8 4.5M394.2 486.5l-11.3 7.6M394.4 490.3l10.3 8.9M394.5 492.0l-15.8 10.0M394.6 493.1l-15.8 8.2M394.6 494.1l-19.6 8.5M394.7 495.7l19.7 8.3M395.0 501.6l15.0 11.2M395.0 502.3l16.5 14.3M395.2 506.4l-16.4 11.2M395.4 510.1l17.3 6.6M395.6 514.7l15.8 7.3M395.7 515.9l10.7 7.4M395.9 519.3l-13.1 16.9M395.9 520.3l-13.8 11.4M396.0 521.8l-11.5 16.4M396.3 527.4l-16.8 12.9M396.3 528.7l-10.6 16.0M396.5 532.1l-14.4 7.4M396.8 537.7l-10.8 6.7M396.9 539.2l14.3 15.2M397.0 541.3l-18.6 8.5M397.1 542.9l-10.2 8.8M397.5 545.6l-15.2 15.8M397.7 546.6l18.8 6.4M397.7 546.6l-13.6 13.3M398.2 550.3l14.0 8.1M398.5 551.8l-15.9 9.7M398.7 553.6l14.5 11.1M398.9 554.7l13.2 7.6M399.4 557.9l-17.1 12.6M399.7 560.3l-11.9 14.9M400.0 561.7l-15.7 8.7M400.5 565.1l11.8 4.2M400.6 565.9l-14.0 16.5M401.2 569.9l12.8 9.6M401.9 574.5l18.9 9.0M402.2 576.7l-9.8 14.9M402.6 579.6l19.1 4.9M402.8 580.6l-13.4 17.0M364.0 516.6l16.3 14.3M362.3 520.9l4.8 17.7M358.9 529.5l-15.0 9.4M357.4 533.6l-19.5 4.4M356.5 535.7l14.7 13.5M355.0 539.7l11.7 14.0M354.5 540.9l-11.9 2.3M353.7 542.9l8.1 16.4M350.5 551.1l10.4 12.0M349.9 552.7l-11.7 7.6M349.4 553.9l10.6 15.7M349.4 553.9l-18.5 9.9M348.7 555.5l-13.2 6.5M346.8 559.4l9.5 10.8M343.4 566.1l4.1 13.3M341.2 570.6l9.1 15.4M340.0 573.0l10.7 16.0M338.2 576.7l7.1 10.6M337.4 578.3l8.4 13.7M336.0 581.0l7.6 19.8M336.0 581.0l-11.1 5.0M333.7 585.6l7.6 17.2M331.4 590.2l6.6 10.2M330.6 591.8l6.0 20.9M330.6 591.8l-19.9 3.5M330.2 592.7l5.4 16.6M272.1 426.4l12.7 6.4M274.1 450.3l-9.5 14.0M274.3 453.5l-10.5 5.7M275.9 472.3l-9.6 8.5M276.4 476.2l9.5 5.8M276.4 476.2l-9.9 14.5M276.8 479.1l-9.0 11.1M277.2 481.5l13.0 9.9M277.9 485.7l-16.3 9.2M278.5 489.5l-14.3 10.6M280.1 499.1l-13.6 9.1M280.5 502.1l15.3 10.6M281.4 507.3l-8.9 11.6M282.7 515.4l-8.2 9.4M284.4 526.3l11.4 2.3M284.4 526.3l-13.5 14.2M285.3 531.8l-8.1 9.7M477.9 501.3l-15.4 8.1M476.6 504.0l5.5 15.9M476.6 504.0l-11.4 6.2M476.1 505.0l-17.8 5.1M475.3 506.7l9.9 14.0M474.6 508.3l8.6 9.7M473.9 509.6l3.8 16.7M472.2 513.3l12.4 13.1M471.2 515.5l7.3 8.4M470.6 516.7l-12.8 0.3M470.3 517.3l5.9 11.1M469.5 519.0l-18.8 6.3M467.8 522.5l-16.8 8.3M467.3 523.5l7.9 12.6M466.6 525.0l11.6 13.6M465.6 527.1l3.5 10.2M464.8 528.9l8.3 14.7M464.8 528.9l-15.2 5.3M464.2 530.0l11.3 11.7M460.0 538.9l-16.0 5.4M250.1 471.0l11.7 14.0M250.1 471.6l-8.8 9.0M250.2 474.3l13.6 8.6M250.2 474.3l-13.7 9.1M250.3 475.5l16.0 9.2M250.4 476.7l15.5 5.8M250.4 476.7l-11.6 11.8M250.7 482.7l8.7 6.2M250.8 483.4l-8.6 12.9M250.9 485.3l11.9 6.9M251.0 488.2l16.5 8.4M251.2 490.6l-12.6 6.8M251.2 491.5l10.5 9.0M251.2 491.5l-11.0 12.6M251.4 494.2l11.9 13.1M251.5 496.2l9.8 4.4M251.5 496.2l-9.8 14.8M251.5 497.0l10.8 13.3M251.7 500.2l-9.0 13.7M251.8 501.5l-10.1 4.4M251.8 502.2l12.7 12.1M251.8 502.2l-10.3 5.0M252.1 506.0l14.1 8.7M252.2 507.9l-9.5 9.3M252.2 508.3l-11.6 14.3M252.3 509.9l-9.0 12.1M252.4 511.9l-13.6 9.9M252.4 512.4l-13.2 8.9M252.5 514.2l9.3 7.1M252.6 514.7l10.9 7.3M252.8 519.6l-10.0 9.4M253.0 521.8l10.6 12.2M253.0 521.8l-8.4 8.1M253.2 525.6l-10.8 5.2M253.4 529.3l16.4 7.8M253.5 531.4l9.9 9.1M253.6 532.4l-7.5 11.0M253.7 534.1l-10.9 15.1M253.8 536.9l8.2 6.8M254.0 540.6l10.9 7.0M254.0 540.6l-10.4 15.5M254.2 544.0l9.7 5.5M254.5 547.8l-13.7 9.5M254.6 550.2l11.7 8.9M254.6 550.2l-5.9 8.4M254.7 550.9l-11.1 12.8M254.8 552.2l-14.5 11.4M254.8 552.6l-14.5 10.5M254.9 554.1l13.3 5.2M254.9 554.1l-8.2 7.9M255.1 557.1l-7.8 11.6M255.1 558.0l-14.1 6.9M255.3 560.6l-9.6 6.7M255.6 566.0l-15.2 7.0M255.6 566.4l13.5 5.7M255.6 566.4l-10.1 5.2M255.7 567.7l-14.4 10.9M255.8 569.5l12.7 5.8M255.9 571.6l-8.3 6.9M256.1 574.4l13.2 7.3M256.2 575.3l10.2 9.8M256.2 575.3l-13.0 9.0M256.3 576.8l-11.3 9.1M256.4 578.3l-10.9 5.4M256.5 580.4l10.7 10.5M256.5 580.4l-9.1 11.7M256.5 581.4l-7.9 7.0M256.6 582.1l14.5 8.6M256.9 586.8l12.0 6.3M257.1 589.8l11.7 6.9M257.1 589.8l-15.4 8.2M257.3 593.5l7.6 7.6M257.3 593.5l-8.8 7.9M257.5 596.4l9.7 10.2M257.5 597.2l-14.7 7.3M257.6 598.1l-13.3 6.3M257.7 599.6l-10.5 9.7M257.7 600.2l-10.7 5.0M257.7 600.9l-14.6 11.0M257.8 602.0l-7.1 10.3M246.2 560.5l14.4 0.8M246.2 560.5l-5.3 18.8M247.0 561.8l15.0 -1.8M247.0 561.8l-8.8 11.0M247.1 562.0l-3.4 16.8M247.9 563.5l17.9 6.0M249.6 566.8l17.5 -0.0M250.8 568.9l13.4 2.8M250.8 568.9l-2.8 10.5M251.1 569.6l14.2 5.8M251.1 569.6l-5.0 12.5M251.7 570.8l-4.4 14.0M252.1 571.4l-6.4 17.0M254.1 575.2l-4.2 12.4M254.6 576.1l-6.6 10.5M256.7 580.1l18.5 2.9M257.1 580.8l13.4 -1.4M257.1 580.8l-9.7 11.2M257.8 582.2l16.5 3.1M257.8 582.2l-4.9 11.3M258.1 582.7l13.1 -0.5M258.9 584.1l-4.9 11.7M259.2 584.7l-9.7 10.9M261.0 588.1l18.2 7.4M261.1 588.4l11.4 0.9M262.2 590.5l17.0 10.0M262.7 592.0l-10.2 11.2M263.4 593.9l-8.0 11.1M263.6 594.5l-8.5 7.4M264.3 596.4l-3.1 10.9M265.1 598.6l13.1 1.6M265.1 598.6l-7.0 9.0M266.0 600.9l-6.7 12.6M268.0 606.4l-12.4 12.9M268.2 607.1l13.5 5.6M269.6 611.0l14.5 1.0M269.6 611.0l-8.0 9.1M269.8 611.5l-13.7 12.8" stroke="#0e1a12" stroke-width="1.6" fill="none" stroke-linecap="round"/><path d="M246 190L256 215L262 232" stroke="#6e6a50" stroke-width="1.2" fill="none" opacity="0.75"/><path d="M272 183L268 205L264 228" stroke="#6e6a50" stroke-width="1.2" fill="none" opacity="0.75"/><path d="M324 183L350 210L374 238" stroke="#6e6a50" stroke-width="1.2" fill="none" opacity="0.75"/><path d="M246 241L300 241L369 241" stroke="#6e6a50" stroke-width="1.2" fill="none" opacity="0.75"/><path d="M306 278L350 290L395 303" stroke="#6e6a50" stroke-width="1.2" fill="none" opacity="0.75"/><path d="M380 188L420 200L460 212" stroke="#6e6a50" stroke-width="1.2" fill="none" opacity="0.75"/><path d="M470 188L500 200L540 208" stroke="#6e6a50" stroke-width="1.2" fill="none" opacity="0.75"/><path d="M545 193L565 215L582 240" stroke="#6e6a50" stroke-width="1.2" fill="none" opacity="0.75"/><path d="M495 250L600 253L680 259L790 267" stroke="#6e6a50" stroke-width="1.2" fill="none" opacity="0.75"/><path d="M625 183L650 210L670 233L692 256" stroke="#6e6a50" stroke-width="1.2" fill="none" opacity="0.75"/><path d="M690 186L705 215L720 240" stroke="#6e6a50" stroke-width="1.2" fill="none" opacity="0.75"/><path d="M600 282L640 302L672 330" stroke="#6e6a50" stroke-width="1.2" fill="none" opacity="0.75"/><path d="M744 294L752 318L762 342" stroke="#6e6a50" stroke-width="1.2" fill="none" opacity="0.75"/><path d="M246 434L321 386L356 372" stroke="#6e6a50" stroke-width="1.2" fill="none" opacity="0.75"/><path d="M356 349L404 373L430 392" stroke="#6e6a50" stroke-width="1.2" fill="none" opacity="0.75"/><path d="M311 491L383 475L429 436L475 400" stroke="#6e6a50" stroke-width="1.2" fill="none" opacity="0.75"/><path d="M394 482L397 542L403 582" stroke="#6e6a50" stroke-width="1.2" fill="none" opacity="0.75"/><path d="M365 514L349 555L330 593" stroke="#6e6a50" stroke-width="1.2" fill="none" opacity="0.75"/><path d="M272 425L276 474L286 536" stroke="#6e6a50" stroke-width="1.2" fill="none" opacity="0.75"/><path d="M478 501L460 539" stroke="#6e6a50" stroke-width="1.2" fill="none" opacity="0.75"/><path d="M250 470L254 540L258 605" stroke="#6e6a50" stroke-width="1.2" fill="none" opacity="0.75"/><path d="M246 560L262 590L270 612" stroke="#6e6a50" stroke-width="1.2" fill="none" opacity="0.75"/><ellipse cx="715" cy="200" rx="60" ry="50" fill="url(#shade)"/><circle cx="782" cy="204" r="55" fill="url(#apA)"/><path d="M777.6 159.9L762.8 171.8M775.3 158.2L758.3 167.7M799.0 159.0L813.5 173.6M802.0 160.6L810.7 168.3M780.6 168.6L769.6 190.4M781.9 158.8L767.6 174.4M778.3 164.1L764.7 180.5M798.9 163.9L805.2 173.8M786.9 162.2L781.5 183.5M786.4 166.4L782.0 186.5M785.2 172.4L781.0 192.1M781.3 172.9L772.9 195.1M798.8 160.2L806.5 169.2M798.8 162.5L812.9 182.5M796.7 160.4L806.0 175.0M793.4 170.5L796.8 190.7" stroke="#e85a48" stroke-width="1.5" opacity="0.16" fill="none"/><ellipse cx="790" cy="212" rx="24" ry="14" fill="url(#hl)"/><circle cx="790" cy="150" r="14" fill="url(#cav)"/><circle cx="284" cy="321" r="56" fill="url(#apB)"/><path d="M269.7 333.1L269.4 349.1M292.1 308.5L304.8 303.0M277.7 307.7L291.0 290.1M266.0 305.8L261.2 291.4M297.3 317.1L311.3 316.7M270.9 301.1L271.9 283.0M279.1 307.0L288.9 295.1M284.4 314.6L299.6 311.1M277.5 293.4L284.1 272.1M282.5 320.2L305.1 324.1M251.1 319.1L233.2 320.1M284.4 311.6L301.6 304.0M287.4 303.5L306.5 287.7M279.6 329.0L287.0 337.4M269.2 338.8L268.6 353.6M289.8 314.0L312.9 309.4M267.1 303.5L263.3 284.3M293.9 314.3L309.5 311.9M296.5 314.4L318.8 311.3M251.5 319.0L240.2 319.6M278.6 328.5L292.1 345.0M269.0 335.0L268.2 346.8M293.4 309.2L306.0 304.5M265.3 331.7L257.1 355.5M270.3 338.6L270.6 356.2M280.6 298.5L292.6 276.6M293.2 319.4L310.0 320.3M253.7 321.7L236.7 325.6M291.2 315.4L302.6 313.9M261.4 337.5L255.3 351.5M251.2 317.9L232.7 317.8M284.2 326.0L302.9 336.5M287.1 339.8L297.3 352.8M260.9 341.6L256.2 353.8M277.2 298.1L281.4 286.5" stroke="#e85a48" stroke-width="1.5" opacity="0.16" fill="none"/><ellipse cx="305" cy="338" rx="14" ry="10" fill="url(#hl)"/><circle cx="270" cy="318" r="4" fill="url(#cav)"/><path d="M250 305l20 13" stroke="#2a1c10" stroke-width="2.4"/><circle cx="704" cy="360" r="53" fill="url(#apC)"/><path d="M695.2 342.2L690.8 329.0M711.8 355.5L723.6 341.4M699.9 348.4L696.4 328.8M718.4 350.9L734.4 335.1M704.9 388.6L706.2 404.7M723.8 377.4L733.1 382.5M696.0 376.3L686.5 390.4M716.2 353.6L731.9 338.9M682.9 371.1L670.0 374.3M716.1 380.1L725.3 390.1M704.1 352.9L705.4 337.6M689.5 356.0L679.9 348.9M696.0 352.5L685.4 331.9M709.1 354.7L714.5 344.7M714.0 377.3L725.6 389.3M693.2 349.9L684.5 335.7M712.0 342.6L716.3 331.3M687.5 371.3L666.7 378.4M720.5 357.8L734.9 351.1M684.2 355.0L664.7 343.7M690.7 373.6L671.2 385.6M691.9 350.2L685.7 341.4M696.6 357.2L689.8 347.9M719.9 354.0L733.6 344.4M694.3 376.1L682.6 389.7M686.6 371.9L665.8 379.4M705.8 339.8L708.1 318.4M679.9 359.2L657.4 352.5M697.4 376.8L690.1 390.8M700.2 344.6L697.5 323.6M691.6 361.3L678.2 355.8M703.3 378.6L704.0 400.5M697.1 383.3L692.2 397.9M695.8 373.9L682.0 389.3M718.3 356.4L737.6 344.2M709.7 352.1L715.5 339.9M702.1 384.4L701.1 404.8" stroke="#e85a48" stroke-width="1.5" opacity="0.16" fill="none"/><ellipse cx="690" cy="338" rx="12" ry="8" fill="url(#hl)"/><circle cx="703" cy="366" r="4" fill="url(#cav)"/><path d="M712 356l-9 10" stroke="#2a1c10" stroke-width="2.2"/><path d="M474.0 222.0L493.1 226.3L501.5 230.7L508.0 235.1L513.5 239.4L518.3 243.8L522.6 248.1L526.4 252.4L529.9 256.8L533.0 261.1L535.8 265.5L538.4 269.9L540.6 274.2L542.7 278.6L544.4 282.9L545.9 287.2L547.2 291.6L548.3 295.9L549.1 300.3L549.6 304.6L549.9 309.0L550.0 313.4L549.8 317.7L549.4 322.1L548.7 326.4L547.8 330.8L546.6 335.1L545.2 339.4L543.5 343.8L541.5 348.1L539.2 352.5L536.5 356.9L533.6 361.2L530.2 365.6L526.5 369.9L522.2 374.2L517.4 378.6L511.7 382.9L504.9 387.3L495.9 391.6L474.0 396.0L474.0 396.0L452.1 391.6L443.1 387.3L436.3 382.9L430.6 378.6L425.8 374.2L421.5 369.9L417.8 365.6L414.4 361.2L411.5 356.9L408.8 352.5L406.5 348.1L404.5 343.8L402.8 339.4L401.4 335.1L400.2 330.8L399.3 326.4L398.6 322.1L398.2 317.7L398.0 313.4L398.1 309.0L398.4 304.6L398.9 300.3L399.7 295.9L400.8 291.6L402.1 287.2L403.6 282.9L405.3 278.6L407.4 274.2L409.6 269.9L412.2 265.5L415.0 261.1L418.1 256.8L421.6 252.4L425.4 248.1L429.7 243.8L434.5 239.4L440.0 235.1L446.5 230.7L454.9 226.3L474.0 222.0z" fill="#1a0f0e"/><g transform="translate(474.6 225.9) rotate(2)"><ellipse cx="0" cy="0" rx="10.9" ry="7.3" fill="#3a2220"/><path d="M-9.3 0.7Q0 10.9 9.3 0.7" stroke="#e8e4ec" stroke-width="4.4" fill="none" stroke-linecap="round" opacity="0.83"/></g><g transform="translate(457.3 240.0) rotate(-22)"><ellipse cx="0" cy="0" rx="11.2" ry="8.1" fill="#4a2e2a"/><path d="M-9.6 0.8Q0 12.1 9.6 0.8" stroke="#e8e4ec" stroke-width="4.4" fill="none" stroke-linecap="round" opacity="0.90"/></g><g transform="translate(478.8 241.2) rotate(-2)"><ellipse cx="0" cy="0" rx="12.0" ry="8.1" fill="#4a2e2a"/><path d="M-10.2 0.8Q0 12.1 10.2 0.8" stroke="#e8e4ec" stroke-width="4.6" fill="none" stroke-linecap="round" opacity="0.96"/></g><g transform="translate(505.5 241.4) rotate(34)"><ellipse cx="0" cy="0" rx="9.2" ry="8.1" fill="#4a2e2a"/><path d="M-7.8 0.8Q0 12.1 7.8 0.8" stroke="#e8e4ec" stroke-width="4.0" fill="none" stroke-linecap="round" opacity="0.99"/></g><g transform="translate(436.6 252.8) rotate(-33)"><ellipse cx="0" cy="0" rx="10.1" ry="8.6" fill="#3a2220"/><path d="M-8.6 0.9Q0 12.9 8.6 0.9" stroke="#e8e4ec" stroke-width="4.2" fill="none" stroke-linecap="round" opacity="0.95"/></g><g transform="translate(456.3 252.6) rotate(-7)"><ellipse cx="0" cy="0" rx="12.3" ry="8.6" fill="#4a2e2a"/><path d="M-10.5 0.9Q0 12.9 10.5 0.9" stroke="#e8e4ec" stroke-width="4.6" fill="none" stroke-linecap="round" opacity="0.89"/></g><g transform="translate(473.5 251.7) rotate(-7)"><ellipse cx="0" cy="0" rx="12.9" ry="8.6" fill="#3a2220"/><path d="M-11.0 0.9Q0 12.9 11.0 0.9" stroke="#e8e4ec" stroke-width="4.7" fill="none" stroke-linecap="round" opacity="0.86"/></g><g transform="translate(495.3 252.8) rotate(6)"><ellipse cx="0" cy="0" rx="12.3" ry="8.6" fill="#4a2e2a"/><path d="M-10.5 0.9Q0 12.9 10.5 0.9" stroke="#e8e4ec" stroke-width="4.6" fill="none" stroke-linecap="round" opacity="0.82"/></g><g transform="translate(512.8 252.8) rotate(25)"><ellipse cx="0" cy="0" rx="10.1" ry="8.6" fill="#3a2220"/><path d="M-8.6 0.9Q0 12.9 8.6 0.9" stroke="#e8e4ec" stroke-width="4.2" fill="none" stroke-linecap="round" opacity="0.95"/></g><g transform="translate(432.8 265.6) rotate(-21)"><ellipse cx="0" cy="0" rx="11.4" ry="9.0" fill="#35201e"/><path d="M-9.7 0.9Q0 13.5 9.7 0.9" stroke="#e8e4ec" stroke-width="4.5" fill="none" stroke-linecap="round" opacity="0.81"/></g><g transform="translate(456.9 266.5) rotate(-3)"><ellipse cx="0" cy="0" rx="13.2" ry="9.0" fill="#221413"/><path d="M-11.2 0.9Q0 13.5 11.2 0.9" stroke="#e8e4ec" stroke-width="4.8" fill="none" stroke-linecap="round" opacity="0.87"/></g><g transform="translate(479.1 265.9) rotate(0)"><ellipse cx="0" cy="0" rx="13.5" ry="9.0" fill="#35201e"/><path d="M-11.5 0.9Q0 13.5 11.5 0.9" stroke="#e8e4ec" stroke-width="4.8" fill="none" stroke-linecap="round" opacity="0.76"/></g><g transform="translate(503.6 267.1) rotate(22)"><ellipse cx="0" cy="0" rx="12.5" ry="9.0" fill="#2c1a19"/><path d="M-10.6 0.9Q0 13.5 10.6 0.9" stroke="#e8e4ec" stroke-width="4.7" fill="none" stroke-linecap="round" opacity="0.78"/></g><g transform="translate(525.2 266.8) rotate(29)"><ellipse cx="0" cy="0" rx="9.3" ry="9.0" fill="#35201e"/><path d="M-7.9 0.9Q0 13.5 7.9 0.9" stroke="#e8e4ec" stroke-width="4.1" fill="none" stroke-linecap="round" opacity="0.91"/></g><g transform="translate(419.4 279.4) rotate(-22)"><ellipse cx="0" cy="0" rx="10.5" ry="9.3" fill="#2c1a19"/><path d="M-8.9 0.9Q0 13.9 8.9 0.9" stroke="#e8e4ec" stroke-width="4.3" fill="none" stroke-linecap="round" opacity="0.85"/></g><g transform="translate(441.3 279.1) rotate(-24)"><ellipse cx="0" cy="0" rx="12.9" ry="9.3" fill="#281716"/><path d="M-11.0 0.9Q0 13.9 11.0 0.9" stroke="#e8e4ec" stroke-width="4.7" fill="none" stroke-linecap="round" opacity="0.96"/></g><g transform="translate(462.6 280.5) rotate(-12)"><ellipse cx="0" cy="0" rx="13.8" ry="9.3" fill="#35201e"/><path d="M-11.8 0.9Q0 13.9 11.8 0.9" stroke="#e8e4ec" stroke-width="4.9" fill="none" stroke-linecap="round" opacity="0.87"/></g><g transform="translate(486.5 280.5) rotate(5)"><ellipse cx="0" cy="0" rx="13.8" ry="9.3" fill="#35201e"/><path d="M-11.8 0.9Q0 13.9 11.8 0.9" stroke="#e8e4ec" stroke-width="4.9" fill="none" stroke-linecap="round" opacity="0.77"/></g><g transform="translate(507.3 277.7) rotate(15)"><ellipse cx="0" cy="0" rx="12.9" ry="9.3" fill="#221413"/><path d="M-11.0 0.9Q0 13.9 11.0 0.9" stroke="#e8e4ec" stroke-width="4.7" fill="none" stroke-linecap="round" opacity="0.90"/></g><g transform="translate(526.4 277.8) rotate(27)"><ellipse cx="0" cy="0" rx="10.5" ry="9.3" fill="#2c1a19"/><path d="M-8.9 0.9Q0 13.9 8.9 0.9" stroke="#e8e4ec" stroke-width="4.3" fill="none" stroke-linecap="round" opacity="0.82"/></g><g transform="translate(425.0 292.9) rotate(-21)"><ellipse cx="0" cy="0" rx="11.6" ry="9.5" fill="#2c1a19"/><path d="M-9.8 0.9Q0 14.2 9.8 0.9" stroke="#e8e4ec" stroke-width="4.5" fill="none" stroke-linecap="round" opacity="0.97"/></g><g transform="translate(444.5 292.9) rotate(-17)"><ellipse cx="0" cy="0" rx="13.5" ry="9.5" fill="#35201e"/><path d="M-11.5 0.9Q0 14.2 11.5 0.9" stroke="#e8e4ec" stroke-width="4.8" fill="none" stroke-linecap="round" opacity="0.93"/></g><g transform="translate(466.5 292.3) rotate(-10)"><ellipse cx="0" cy="0" rx="14.2" ry="9.5" fill="#221413"/><path d="M-12.1 0.9Q0 14.2 12.1 0.9" stroke="#e8e4ec" stroke-width="5.0" fill="none" stroke-linecap="round" opacity="0.97"/></g><g transform="translate(491.6 291.4) rotate(7)"><ellipse cx="0" cy="0" rx="14.0" ry="9.5" fill="#35201e"/><path d="M-11.9 0.9Q0 14.2 11.9 0.9" stroke="#e8e4ec" stroke-width="4.9" fill="none" stroke-linecap="round" opacity="0.90"/></g><g transform="translate(512.4 292.4) rotate(19)"><ellipse cx="0" cy="0" rx="12.8" ry="9.5" fill="#281716"/><path d="M-10.8 0.9Q0 14.2 10.8 0.9" stroke="#e8e4ec" stroke-width="4.7" fill="none" stroke-linecap="round" opacity="0.95"/></g><g transform="translate(534.1 291.5) rotate(36)"><ellipse cx="0" cy="0" rx="9.5" ry="9.5" fill="#281716"/><path d="M-8.1 0.9Q0 14.2 8.1 0.9" stroke="#e8e4ec" stroke-width="4.1" fill="none" stroke-linecap="round" opacity="0.76"/></g><g transform="translate(414.4 305.9) rotate(-34)"><ellipse cx="0" cy="0" rx="10.5" ry="9.6" fill="#281716"/><path d="M-9.0 1.0Q0 14.4 9.0 1.0" stroke="#e8e4ec" stroke-width="4.3" fill="none" stroke-linecap="round" opacity="0.84"/></g><g transform="translate(436.1 305.0) rotate(-16)"><ellipse cx="0" cy="0" rx="13.0" ry="9.6" fill="#221413"/><path d="M-11.0 1.0Q0 14.4 11.0 1.0" stroke="#e8e4ec" stroke-width="4.7" fill="none" stroke-linecap="round" opacity="0.95"/></g><g transform="translate(453.3 303.9) rotate(-14)"><ellipse cx="0" cy="0" rx="14.0" ry="9.6" fill="#35201e"/><path d="M-11.9 1.0Q0 14.4 11.9 1.0" stroke="#e8e4ec" stroke-width="4.9" fill="none" stroke-linecap="round" opacity="0.80"/></g><g transform="translate(474.2 305.8) rotate(1)"><ellipse cx="0" cy="0" rx="14.4" ry="9.6" fill="#35201e"/><path d="M-12.2 1.0Q0 14.4 12.2 1.0" stroke="#e8e4ec" stroke-width="5.0" fill="none" stroke-linecap="round" opacity="1.00"/></g><g transform="translate(494.2 304.3) rotate(9)"><ellipse cx="0" cy="0" rx="14.0" ry="9.6" fill="#35201e"/><path d="M-11.9 1.0Q0 14.4 11.9 1.0" stroke="#e8e4ec" stroke-width="4.9" fill="none" stroke-linecap="round" opacity="0.88"/></g><g transform="translate(515.1 304.0) rotate(14)"><ellipse cx="0" cy="0" rx="13.0" ry="9.6" fill="#35201e"/><path d="M-11.0 1.0Q0 14.4 11.0 1.0" stroke="#e8e4ec" stroke-width="4.7" fill="none" stroke-linecap="round" opacity="0.83"/></g><g transform="translate(533.1 305.8) rotate(35)"><ellipse cx="0" cy="0" rx="10.5" ry="9.6" fill="#281716"/><path d="M-9.0 1.0Q0 14.4 9.0 1.0" stroke="#e8e4ec" stroke-width="4.3" fill="none" stroke-linecap="round" opacity="0.97"/></g><g transform="translate(417.3 319.3) rotate(-20)"><ellipse cx="0" cy="0" rx="11.4" ry="9.6" fill="#221413"/><path d="M-9.7 1.0Q0 14.4 9.7 1.0" stroke="#e8e4ec" stroke-width="4.4" fill="none" stroke-linecap="round" opacity="0.97"/></g><g transform="translate(439.3 317.8) rotate(-13)"><ellipse cx="0" cy="0" rx="13.3" ry="9.6" fill="#221413"/><path d="M-11.3 1.0Q0 14.4 11.3 1.0" stroke="#e8e4ec" stroke-width="4.8" fill="none" stroke-linecap="round" opacity="0.93"/></g><g transform="translate(457.5 318.1) rotate(-7)"><ellipse cx="0" cy="0" rx="14.2" ry="9.6" fill="#221413"/><path d="M-12.1 1.0Q0 14.4 12.1 1.0" stroke="#e8e4ec" stroke-width="5.0" fill="none" stroke-linecap="round" opacity="0.87"/></g><g transform="translate(478.7 318.5) rotate(4)"><ellipse cx="0" cy="0" rx="14.4" ry="9.6" fill="#281716"/><path d="M-12.2 1.0Q0 14.4 12.2 1.0" stroke="#e8e4ec" stroke-width="5.0" fill="none" stroke-linecap="round" opacity="0.92"/></g><g transform="translate(499.9 318.1) rotate(19)"><ellipse cx="0" cy="0" rx="13.9" ry="9.6" fill="#221413"/><path d="M-11.8 1.0Q0 14.4 11.8 1.0" stroke="#e8e4ec" stroke-width="4.9" fill="none" stroke-linecap="round" opacity="0.93"/></g><g transform="translate(520.1 318.0) rotate(30)"><ellipse cx="0" cy="0" rx="12.5" ry="9.6" fill="#2c1a19"/><path d="M-10.7 1.0Q0 14.4 10.7 1.0" stroke="#e8e4ec" stroke-width="4.7" fill="none" stroke-linecap="round" opacity="0.83"/></g><g transform="translate(538.1 318.2) rotate(37)"><ellipse cx="0" cy="0" rx="9.4" ry="9.6" fill="#2c1a19"/><path d="M-8.0 1.0Q0 14.4 8.0 1.0" stroke="#e8e4ec" stroke-width="4.1" fill="none" stroke-linecap="round" opacity="0.91"/></g><g transform="translate(415.3 331.1) rotate(-23)"><ellipse cx="0" cy="0" rx="10.5" ry="9.5" fill="#281716"/><path d="M-8.9 1.0Q0 14.3 8.9 1.0" stroke="#e8e4ec" stroke-width="4.3" fill="none" stroke-linecap="round" opacity="0.96"/></g><g transform="translate(433.9 331.7) rotate(-15)"><ellipse cx="0" cy="0" rx="12.9" ry="9.5" fill="#281716"/><path d="M-10.9 1.0Q0 14.3 10.9 1.0" stroke="#e8e4ec" stroke-width="4.7" fill="none" stroke-linecap="round" opacity="0.89"/></g><g transform="translate(456.1 329.8) rotate(-7)"><ellipse cx="0" cy="0" rx="13.9" ry="9.5" fill="#2c1a19"/><path d="M-11.8 1.0Q0 14.3 11.8 1.0" stroke="#e8e4ec" stroke-width="4.9" fill="none" stroke-linecap="round" opacity="0.82"/></g><g transform="translate(473.9 329.5) rotate(-8)"><ellipse cx="0" cy="0" rx="14.3" ry="9.5" fill="#2c1a19"/><path d="M-12.1 1.0Q0 14.3 12.1 1.0" stroke="#e8e4ec" stroke-width="5.0" fill="none" stroke-linecap="round" opacity="0.98"/></g><g transform="translate(495.3 332.1) rotate(3)"><ellipse cx="0" cy="0" rx="13.9" ry="9.5" fill="#281716"/><path d="M-11.8 1.0Q0 14.3 11.8 1.0" stroke="#e8e4ec" stroke-width="4.9" fill="none" stroke-linecap="round" opacity="0.89"/></g><g transform="translate(511.4 329.9) rotate(26)"><ellipse cx="0" cy="0" rx="12.9" ry="9.5" fill="#35201e"/><path d="M-10.9 1.0Q0 14.3 10.9 1.0" stroke="#e8e4ec" stroke-width="4.7" fill="none" stroke-linecap="round" opacity="0.76"/></g><g transform="translate(532.5 331.4) rotate(22)"><ellipse cx="0" cy="0" rx="10.5" ry="9.5" fill="#221413"/><path d="M-8.9 1.0Q0 14.3 8.9 1.0" stroke="#e8e4ec" stroke-width="4.3" fill="none" stroke-linecap="round" opacity="0.96"/></g><g transform="translate(424.8 344.6) rotate(-30)"><ellipse cx="0" cy="0" rx="11.4" ry="9.3" fill="#35201e"/><path d="M-9.7 0.9Q0 14.0 9.7 0.9" stroke="#e8e4ec" stroke-width="4.4" fill="none" stroke-linecap="round" opacity="0.89"/></g><g transform="translate(447.3 342.7) rotate(-12)"><ellipse cx="0" cy="0" rx="13.3" ry="9.3" fill="#2c1a19"/><path d="M-11.3 0.9Q0 14.0 11.3 0.9" stroke="#e8e4ec" stroke-width="4.8" fill="none" stroke-linecap="round" opacity="0.80"/></g><g transform="translate(468.0 342.8) rotate(-2)"><ellipse cx="0" cy="0" rx="14.0" ry="9.3" fill="#35201e"/><path d="M-11.9 0.9Q0 14.0 11.9 0.9" stroke="#e8e4ec" stroke-width="4.9" fill="none" stroke-linecap="round" opacity="0.80"/></g><g transform="translate(488.9 345.0) rotate(5)"><ellipse cx="0" cy="0" rx="13.7" ry="9.3" fill="#221413"/><path d="M-11.7 0.9Q0 14.0 11.7 0.9" stroke="#e8e4ec" stroke-width="4.9" fill="none" stroke-linecap="round" opacity="0.85"/></g><g transform="translate(512.1 343.0) rotate(14)"><ellipse cx="0" cy="0" rx="12.5" ry="9.3" fill="#35201e"/><path d="M-10.7 0.9Q0 14.0 10.7 0.9" stroke="#e8e4ec" stroke-width="4.7" fill="none" stroke-linecap="round" opacity="0.86"/></g><g transform="translate(532.8 344.8) rotate(34)"><ellipse cx="0" cy="0" rx="9.4" ry="9.3" fill="#221413"/><path d="M-8.0 0.9Q0 14.0 8.0 0.9" stroke="#e8e4ec" stroke-width="4.1" fill="none" stroke-linecap="round" opacity="0.80"/></g><g transform="translate(429.6 355.7) rotate(-33)"><ellipse cx="0" cy="0" rx="10.6" ry="9.0" fill="#221413"/><path d="M-9.0 0.9Q0 13.5 9.0 0.9" stroke="#e8e4ec" stroke-width="4.3" fill="none" stroke-linecap="round" opacity="0.82"/></g><g transform="translate(452.1 356.0) rotate(-12)"><ellipse cx="0" cy="0" rx="12.9" ry="9.0" fill="#221413"/><path d="M-11.0 0.9Q0 13.5 11.0 0.9" stroke="#e8e4ec" stroke-width="4.7" fill="none" stroke-linecap="round" opacity="0.76"/></g><g transform="translate(473.1 355.6) rotate(-6)"><ellipse cx="0" cy="0" rx="13.5" ry="9.0" fill="#35201e"/><path d="M-11.5 0.9Q0 13.5 11.5 0.9" stroke="#e8e4ec" stroke-width="4.8" fill="none" stroke-linecap="round" opacity="0.99"/></g><g transform="translate(496.6 356.2) rotate(10)"><ellipse cx="0" cy="0" rx="12.9" ry="9.0" fill="#281716"/><path d="M-11.0 0.9Q0 13.5 11.0 0.9" stroke="#e8e4ec" stroke-width="4.7" fill="none" stroke-linecap="round" opacity="0.82"/></g><g transform="translate(520.8 357.6) rotate(23)"><ellipse cx="0" cy="0" rx="10.6" ry="9.0" fill="#2c1a19"/><path d="M-9.0 0.9Q0 13.5 9.0 0.9" stroke="#e8e4ec" stroke-width="4.3" fill="none" stroke-linecap="round" opacity="0.81"/></g><g transform="translate(442.6 368.8) rotate(-16)"><ellipse cx="0" cy="0" rx="11.4" ry="8.6" fill="#2c1a19"/><path d="M-9.6 0.9Q0 12.9 9.6 0.9" stroke="#e8e4ec" stroke-width="4.4" fill="none" stroke-linecap="round" opacity="0.82"/></g><g transform="translate(467.7 370.8) rotate(-8)"><ellipse cx="0" cy="0" rx="12.9" ry="8.6" fill="#281716"/><path d="M-10.9 0.9Q0 12.9 10.9 0.9" stroke="#e8e4ec" stroke-width="4.7" fill="none" stroke-linecap="round" opacity="0.78"/></g><g transform="translate(493.1 370.2) rotate(16)"><ellipse cx="0" cy="0" rx="12.4" ry="8.6" fill="#221413"/><path d="M-10.5 0.9Q0 12.9 10.5 0.9" stroke="#e8e4ec" stroke-width="4.6" fill="none" stroke-linecap="round" opacity="0.88"/></g><g transform="translate(515.8 369.0) rotate(33)"><ellipse cx="0" cy="0" rx="9.2" ry="8.6" fill="#221413"/><path d="M-7.9 0.9Q0 12.9 7.9 0.9" stroke="#e8e4ec" stroke-width="4.1" fill="none" stroke-linecap="round" opacity="0.79"/></g><g transform="translate(450.7 383.3) rotate(-29)"><ellipse cx="0" cy="0" rx="10.3" ry="8.0" fill="#2c1a19"/><path d="M-8.8 0.8Q0 12.0 8.8 0.8" stroke="#e8e4ec" stroke-width="4.3" fill="none" stroke-linecap="round" opacity="0.83"/></g><g transform="translate(472.5 383.3) rotate(7)"><ellipse cx="0" cy="0" rx="12.0" ry="8.0" fill="#35201e"/><path d="M-10.2 0.8Q0 12.0 10.2 0.8" stroke="#e8e4ec" stroke-width="4.6" fill="none" stroke-linecap="round" opacity="0.86"/></g><g transform="translate(496.9 382.9) rotate(26)"><ellipse cx="0" cy="0" rx="10.3" ry="8.0" fill="#281716"/><path d="M-8.8 0.8Q0 12.0 8.8 0.8" stroke="#e8e4ec" stroke-width="4.3" fill="none" stroke-linecap="round" opacity="0.82"/></g><ellipse cx="591" cy="329" rx="49.0" ry="49.0" fill="#1a0f0e"/><g transform="translate(628.6 307.7) rotate(8250)"><ellipse cx="0" cy="0" rx="7.0" ry="8.4" fill="#341e1c"/><path d="M1.4 -7.7Q10.5 0 1.4 7.7" stroke="#e8e4ec" stroke-width="4.0" fill="none" stroke-linecap="round" opacity="0.78"/></g><g transform="translate(549.3 319.4) rotate(8113)"><ellipse cx="0" cy="0" rx="7.0" ry="8.3" fill="#2e1a19"/><path d="M1.4 -7.7Q10.4 0 1.4 7.7" stroke="#e8e4ec" stroke-width="4.0" fill="none" stroke-linecap="round" opacity="0.83"/></g><g transform="translate(615.1 364.0) rotate(7975)"><ellipse cx="0" cy="0" rx="6.9" ry="8.3" fill="#2a1817"/><path d="M1.4 -7.6Q10.4 0 1.4 7.6" stroke="#e8e4ec" stroke-width="4.0" fill="none" stroke-linecap="round" opacity="0.81"/></g><g transform="translate(596.8 287.3) rotate(7838)"><ellipse cx="0" cy="0" rx="6.9" ry="8.2" fill="#341e1c"/><path d="M1.4 -7.6Q10.3 0 1.4 7.6" stroke="#e8e4ec" stroke-width="4.0" fill="none" stroke-linecap="round" opacity="0.81"/></g><g transform="translate(558.8 355.6) rotate(7700)"><ellipse cx="0" cy="0" rx="6.8" ry="8.2" fill="#2a1817"/><path d="M1.4 -7.5Q10.2 0 1.4 7.5" stroke="#e8e4ec" stroke-width="4.0" fill="none" stroke-linecap="round" opacity="0.90"/></g><g transform="translate(632.3 331.1) rotate(7563)"><ellipse cx="0" cy="0" rx="6.8" ry="8.1" fill="#2a1817"/><path d="M1.4 -7.5Q10.2 0 1.4 7.5" stroke="#e8e4ec" stroke-width="4.0" fill="none" stroke-linecap="round" opacity="0.94"/></g><g transform="translate(562.2 299.8) rotate(7425)"><ellipse cx="0" cy="0" rx="6.7" ry="8.1" fill="#341e1c"/><path d="M1.3 -7.4Q10.1 0 1.3 7.4" stroke="#e8e4ec" stroke-width="4.0" fill="none" stroke-linecap="round" opacity="0.87"/></g><g transform="translate(592.5 369.6) rotate(7288)"><ellipse cx="0" cy="0" rx="6.7" ry="8.0" fill="#2a1817"/><path d="M1.3 -7.4Q10.0 0 1.3 7.4" stroke="#e8e4ec" stroke-width="3.9" fill="none" stroke-linecap="round" opacity="0.81"/></g><g transform="translate(617.1 298.4) rotate(7150)"><ellipse cx="0" cy="0" rx="6.7" ry="8.0" fill="#3e2623"/><path d="M1.3 -7.3Q10.0 0 1.3 7.3" stroke="#e8e4ec" stroke-width="3.9" fill="none" stroke-linecap="round" opacity="0.90"/></g><g transform="translate(551.5 333.9) rotate(7013)"><ellipse cx="0" cy="0" rx="6.6" ry="7.9" fill="#3e2623"/><path d="M1.3 -7.3Q9.9 0 1.3 7.3" stroke="#e8e4ec" stroke-width="3.9" fill="none" stroke-linecap="round" opacity="0.74"/></g><g transform="translate(623.1 351.8) rotate(6875)"><ellipse cx="0" cy="0" rx="6.6" ry="7.9" fill="#3e2623"/><path d="M1.3 -7.2Q9.8 0 1.3 7.2" stroke="#e8e4ec" stroke-width="3.9" fill="none" stroke-linecap="round" opacity="0.91"/></g><g transform="translate(582.8 290.8) rotate(6738)"><ellipse cx="0" cy="0" rx="6.5" ry="7.8" fill="#3e2623"/><path d="M1.3 -7.2Q9.8 0 1.3 7.2" stroke="#e8e4ec" stroke-width="3.9" fill="none" stroke-linecap="round" opacity="0.72"/></g><g transform="translate(571.5 362.3) rotate(6600)"><ellipse cx="0" cy="0" rx="6.5" ry="7.8" fill="#2e1a19"/><path d="M1.3 -7.1Q9.7 0 1.3 7.1" stroke="#e8e4ec" stroke-width="3.9" fill="none" stroke-linecap="round" opacity="0.96"/></g><g transform="translate(627.5 317.7) rotate(6463)"><ellipse cx="0" cy="0" rx="6.4" ry="7.7" fill="#3e2623"/><path d="M1.3 -7.1Q9.6 0 1.3 7.1" stroke="#e8e4ec" stroke-width="3.9" fill="none" stroke-linecap="round" opacity="0.72"/></g><g transform="translate(556.8 312.8) rotate(6325)"><ellipse cx="0" cy="0" rx="6.4" ry="7.7" fill="#2e1a19"/><path d="M1.3 -7.0Q9.6 0 1.3 7.0" stroke="#e8e4ec" stroke-width="3.8" fill="none" stroke-linecap="round" opacity="0.70"/></g><g transform="translate(605.1 363.7) rotate(6188)"><ellipse cx="0" cy="0" rx="6.3" ry="7.6" fill="#341e1c"/><path d="M1.3 -7.0Q9.5 0 1.3 7.0" stroke="#e8e4ec" stroke-width="3.8" fill="none" stroke-linecap="round" opacity="0.72"/></g><g transform="translate(603.9 294.3) rotate(6050)"><ellipse cx="0" cy="0" rx="6.3" ry="7.5" fill="#341e1c"/><path d="M1.3 -6.9Q9.4 0 1.3 6.9" stroke="#e8e4ec" stroke-width="3.8" fill="none" stroke-linecap="round" opacity="0.74"/></g><g transform="translate(558.5 345.7) rotate(5913)"><ellipse cx="0" cy="0" rx="6.2" ry="7.5" fill="#2a1817"/><path d="M1.2 -6.9Q9.3 0 1.2 6.9" stroke="#e8e4ec" stroke-width="3.8" fill="none" stroke-linecap="round" opacity="0.96"/></g><g transform="translate(625.9 338.6) rotate(5775)"><ellipse cx="0" cy="0" rx="6.2" ry="7.4" fill="#341e1c"/><path d="M1.2 -6.8Q9.3 0 1.2 6.8" stroke="#e8e4ec" stroke-width="3.8" fill="none" stroke-linecap="round" opacity="0.98"/></g><g transform="translate(572.0 298.8) rotate(5638)"><ellipse cx="0" cy="0" rx="6.1" ry="7.4" fill="#3e2623"/><path d="M1.2 -6.7Q9.2 0 1.2 6.7" stroke="#e8e4ec" stroke-width="3.8" fill="none" stroke-linecap="round" opacity="0.85"/></g><g transform="translate(584.7 363.7) rotate(5500)"><ellipse cx="0" cy="0" rx="6.1" ry="7.3" fill="#2a1817"/><path d="M1.2 -6.7Q9.1 0 1.2 6.7" stroke="#e8e4ec" stroke-width="3.7" fill="none" stroke-linecap="round" opacity="0.75"/></g><g transform="translate(618.7 307.9) rotate(5363)"><ellipse cx="0" cy="0" rx="6.0" ry="7.2" fill="#341e1c"/><path d="M1.2 -6.6Q9.0 0 1.2 6.6" stroke="#e8e4ec" stroke-width="3.7" fill="none" stroke-linecap="round" opacity="0.96"/></g><g transform="translate(556.8 325.8) rotate(5225)"><ellipse cx="0" cy="0" rx="6.0" ry="7.2" fill="#341e1c"/><path d="M1.2 -6.6Q9.0 0 1.2 6.6" stroke="#e8e4ec" stroke-width="3.7" fill="none" stroke-linecap="round" opacity="0.97"/></g><g transform="translate(613.8 354.1) rotate(5088)"><ellipse cx="0" cy="0" rx="5.9" ry="7.1" fill="#2a1817"/><path d="M1.2 -6.5Q8.9 0 1.2 6.5" stroke="#e8e4ec" stroke-width="3.7" fill="none" stroke-linecap="round" opacity="0.80"/></g><g transform="translate(591.2 295.5) rotate(4950)"><ellipse cx="0" cy="0" rx="5.9" ry="7.0" fill="#2a1817"/><path d="M1.2 -6.5Q8.8 0 1.2 6.5" stroke="#e8e4ec" stroke-width="3.7" fill="none" stroke-linecap="round" opacity="0.91"/></g><g transform="translate(568.6 353.2) rotate(4813)"><ellipse cx="0" cy="0" rx="5.8" ry="7.0" fill="#2e1a19"/><path d="M1.2 -6.4Q8.7 0 1.2 6.4" stroke="#e8e4ec" stroke-width="3.7" fill="none" stroke-linecap="round" opacity="0.82"/></g><g transform="translate(623.4 326.3) rotate(4675)"><ellipse cx="0" cy="0" rx="5.8" ry="6.9" fill="#3e2623"/><path d="M1.2 -6.3Q8.6 0 1.2 6.3" stroke="#e8e4ec" stroke-width="3.6" fill="none" stroke-linecap="round" opacity="0.82"/></g><g transform="translate(565.7 309.4) rotate(4538)"><ellipse cx="0" cy="0" rx="5.7" ry="6.8" fill="#3e2623"/><path d="M1.1 -6.3Q8.6 0 1.1 6.3" stroke="#e8e4ec" stroke-width="3.6" fill="none" stroke-linecap="round" opacity="0.72"/></g><g transform="translate(596.3 360.1) rotate(4400)"><ellipse cx="0" cy="0" rx="5.7" ry="6.8" fill="#341e1c"/><path d="M1.1 -6.2Q8.5 0 1.1 6.2" stroke="#e8e4ec" stroke-width="3.6" fill="none" stroke-linecap="round" opacity="0.71"/></g><g transform="translate(607.8 302.9) rotate(4263)"><ellipse cx="0" cy="0" rx="5.6" ry="6.7" fill="#341e1c"/><path d="M1.1 -6.2Q8.4 0 1.1 6.2" stroke="#e8e4ec" stroke-width="3.6" fill="none" stroke-linecap="round" opacity="0.94"/></g><g transform="translate(561.5 336.8) rotate(4125)"><ellipse cx="0" cy="0" rx="5.5" ry="6.6" fill="#2a1817"/><path d="M1.1 -6.1Q8.3 0 1.1 6.1" stroke="#e8e4ec" stroke-width="3.6" fill="none" stroke-linecap="round" opacity="0.80"/></g><g transform="translate(617.6 343.0) rotate(3988)"><ellipse cx="0" cy="0" rx="5.5" ry="6.6" fill="#2a1817"/><path d="M1.1 -6.0Q8.2 0 1.1 6.0" stroke="#e8e4ec" stroke-width="3.6" fill="none" stroke-linecap="round" opacity="0.85"/></g><g transform="translate(581.0 301.2) rotate(3850)"><ellipse cx="0" cy="0" rx="5.4" ry="6.5" fill="#2e1a19"/><path d="M1.1 -6.0Q8.1 0 1.1 6.0" stroke="#e8e4ec" stroke-width="3.5" fill="none" stroke-linecap="round" opacity="0.97"/></g><g transform="translate(579.8 355.7) rotate(3713)"><ellipse cx="0" cy="0" rx="5.4" ry="6.4" fill="#2e1a19"/><path d="M1.1 -5.9Q8.0 0 1.1 5.9" stroke="#e8e4ec" stroke-width="3.5" fill="none" stroke-linecap="round" opacity="0.89"/></g><g transform="translate(616.8 317.1) rotate(3575)"><ellipse cx="0" cy="0" rx="5.3" ry="6.3" fill="#2e1a19"/><path d="M1.1 -5.8Q7.9 0 1.1 5.8" stroke="#e8e4ec" stroke-width="3.5" fill="none" stroke-linecap="round" opacity="0.75"/></g><g transform="translate(564.4 320.5) rotate(3438)"><ellipse cx="0" cy="0" rx="5.2" ry="6.3" fill="#341e1c"/><path d="M1.0 -5.8Q7.8 0 1.0 5.8" stroke="#e8e4ec" stroke-width="3.5" fill="none" stroke-linecap="round" opacity="0.85"/></g><g transform="translate(604.6 352.7) rotate(3300)"><ellipse cx="0" cy="0" rx="5.2" ry="6.2" fill="#2a1817"/><path d="M1.0 -5.7Q7.7 0 1.0 5.7" stroke="#e8e4ec" stroke-width="3.5" fill="none" stroke-linecap="round" opacity="0.72"/></g><g transform="translate(596.9 302.9) rotate(3163)"><ellipse cx="0" cy="0" rx="5.1" ry="6.1" fill="#341e1c"/><path d="M1.0 -5.6Q7.6 0 1.0 5.6" stroke="#e8e4ec" stroke-width="3.4" fill="none" stroke-linecap="round" opacity="0.99"/></g><g transform="translate(569.5 343.9) rotate(3025)"><ellipse cx="0" cy="0" rx="5.0" ry="6.0" fill="#2a1817"/><path d="M1.0 -5.5Q7.5 0 1.0 5.5" stroke="#e8e4ec" stroke-width="3.4" fill="none" stroke-linecap="round" opacity="0.77"/></g><g transform="translate(616.3 332.4) rotate(2888)"><ellipse cx="0" cy="0" rx="5.0" ry="5.9" fill="#3e2623"/><path d="M1.0 -5.5Q7.4 0 1.0 5.5" stroke="#e8e4ec" stroke-width="3.4" fill="none" stroke-linecap="round" opacity="0.93"/></g><g transform="translate(575.0 309.8) rotate(2750)"><ellipse cx="0" cy="0" rx="4.9" ry="5.9" fill="#341e1c"/><path d="M1.0 -5.4Q7.3 0 1.0 5.4" stroke="#e8e4ec" stroke-width="3.4" fill="none" stroke-linecap="round" opacity="0.87"/></g><g transform="translate(589.9 353.3) rotate(2613)"><ellipse cx="0" cy="0" rx="4.8" ry="5.8" fill="#341e1c"/><path d="M1.0 -5.3Q7.2 0 1.0 5.3" stroke="#e8e4ec" stroke-width="3.3" fill="none" stroke-linecap="round" opacity="0.99"/></g><g transform="translate(607.8 312.3) rotate(2475)"><ellipse cx="0" cy="0" rx="4.7" ry="5.7" fill="#341e1c"/><path d="M0.9 -5.2Q7.1 0 0.9 5.2" stroke="#e8e4ec" stroke-width="3.3" fill="none" stroke-linecap="round" opacity="0.82"/></g><g transform="translate(568.0 329.9) rotate(2338)"><ellipse cx="0" cy="0" rx="4.7" ry="5.6" fill="#341e1c"/><path d="M0.9 -5.1Q7.0 0 0.9 5.1" stroke="#e8e4ec" stroke-width="3.3" fill="none" stroke-linecap="round" opacity="0.74"/></g><g transform="translate(608.1 343.4) rotate(2200)"><ellipse cx="0" cy="0" rx="4.6" ry="5.5" fill="#2a1817"/><path d="M0.9 -5.0Q6.9 0 0.9 5.0" stroke="#e8e4ec" stroke-width="3.3" fill="none" stroke-linecap="round" opacity="0.96"/></g><g transform="translate(588.2 307.6) rotate(2063)"><ellipse cx="0" cy="0" rx="4.5" ry="5.4" fill="#2e1a19"/><path d="M0.9 -5.0Q6.8 0 0.9 5.0" stroke="#e8e4ec" stroke-width="3.2" fill="none" stroke-linecap="round" opacity="0.71"/></g><g transform="translate(579.0 346.1) rotate(1925)"><ellipse cx="0" cy="0" rx="4.4" ry="5.3" fill="#341e1c"/><path d="M0.9 -4.9Q6.6 0 0.9 4.9" stroke="#e8e4ec" stroke-width="3.2" fill="none" stroke-linecap="round" opacity="0.81"/></g><g transform="translate(610.6 324.7) rotate(1788)"><ellipse cx="0" cy="0" rx="4.3" ry="5.2" fill="#2a1817"/><path d="M0.9 -4.8Q6.5 0 0.9 4.8" stroke="#e8e4ec" stroke-width="3.2" fill="none" stroke-linecap="round" opacity="0.75"/></g><g transform="translate(574.3 319.3) rotate(1650)"><ellipse cx="0" cy="0" rx="4.2" ry="5.1" fill="#2a1817"/><path d="M0.8 -4.7Q6.4 0 0.8 4.7" stroke="#e8e4ec" stroke-width="3.2" fill="none" stroke-linecap="round" opacity="0.74"/></g><g transform="translate(596.5 346.6) rotate(1513)"><ellipse cx="0" cy="0" rx="4.1" ry="5.0" fill="#3e2623"/><path d="M0.8 -4.6Q6.2 0 0.8 4.6" stroke="#e8e4ec" stroke-width="3.1" fill="none" stroke-linecap="round" opacity="0.94"/></g><g transform="translate(598.5 313.0) rotate(1375)"><ellipse cx="0" cy="0" rx="4.0" ry="4.8" fill="#341e1c"/><path d="M0.8 -4.4Q6.1 0 0.8 4.4" stroke="#e8e4ec" stroke-width="3.1" fill="none" stroke-linecap="round" opacity="0.85"/></g><g transform="translate(575.5 335.4) rotate(1238)"><ellipse cx="0" cy="0" rx="3.9" ry="4.7" fill="#2e1a19"/><path d="M0.8 -4.3Q5.9 0 0.8 4.3" stroke="#e8e4ec" stroke-width="3.1" fill="none" stroke-linecap="round" opacity="0.97"/></g><g transform="translate(605.8 334.4) rotate(1100)"><ellipse cx="0" cy="0" rx="3.8" ry="4.6" fill="#2e1a19"/><path d="M0.8 -4.2Q5.7 0 0.8 4.2" stroke="#e8e4ec" stroke-width="3.0" fill="none" stroke-linecap="round" opacity="0.99"/></g><g transform="translate(584.2 315.9) rotate(963)"><ellipse cx="0" cy="0" rx="3.7" ry="4.4" fill="#2a1817"/><path d="M0.7 -4.1Q5.6 0 0.7 4.1" stroke="#e8e4ec" stroke-width="3.0" fill="none" stroke-linecap="round" opacity="0.74"/></g><g transform="translate(587.5 342.2) rotate(825)"><ellipse cx="0" cy="0" rx="3.6" ry="4.3" fill="#2e1a19"/><path d="M0.7 -3.9Q5.4 0 0.7 3.9" stroke="#e8e4ec" stroke-width="2.9" fill="none" stroke-linecap="round" opacity="0.96"/></g><g transform="translate(601.5 322.3) rotate(688)"><ellipse cx="0" cy="0" rx="3.4" ry="4.1" fill="#341e1c"/><path d="M0.7 -3.8Q5.2 0 0.7 3.8" stroke="#e8e4ec" stroke-width="2.9" fill="none" stroke-linecap="round" opacity="0.73"/></g><g transform="translate(580.0 327.1) rotate(550)"><ellipse cx="0" cy="0" rx="3.3" ry="3.9" fill="#341e1c"/><path d="M0.7 -3.6Q4.9 0 0.7 3.6" stroke="#e8e4ec" stroke-width="2.9" fill="none" stroke-linecap="round" opacity="0.95"/></g><g transform="translate(596.9 336.7) rotate(413)"><ellipse cx="0" cy="0" rx="3.1" ry="3.7" fill="#341e1c"/><path d="M0.6 -3.4Q4.7 0 0.6 3.4" stroke="#e8e4ec" stroke-width="2.8" fill="none" stroke-linecap="round" opacity="0.71"/></g><g transform="translate(591.7 321.1) rotate(275)"><ellipse cx="0" cy="0" rx="2.9" ry="3.5" fill="#2e1a19"/><path d="M0.6 -3.2Q4.4 0 0.6 3.2" stroke="#e8e4ec" stroke-width="2.7" fill="none" stroke-linecap="round" opacity="0.84"/></g><g transform="translate(586.9 332.8) rotate(138)"><ellipse cx="0" cy="0" rx="2.6" ry="3.2" fill="#2a1817"/><path d="M0.5 -2.9Q4.0 0 0.5 2.9" stroke="#e8e4ec" stroke-width="2.6" fill="none" stroke-linecap="round" opacity="0.76"/></g><circle cx="546.4" cy="464" r="76.5" fill="#f4e2e6"/><circle cx="546.4" cy="464" r="73.5" fill="url(#cup)"/><path d="M534 460.1a6 6.9 0 0 0 0 13.8" stroke="#f6e6ea" stroke-width="3.5" fill="none" opacity="0.92"/><path d="M534 452.1a13 14.9 0 0 0 0 29.9" stroke="#f6e6ea" stroke-width="4" fill="none" opacity="0.92"/><path d="M534 444.0a20 23.0 0 0 0 0 46.0" stroke="#f6e6ea" stroke-width="4.5" fill="none" opacity="0.92"/><path d="M534 435.9a27 31.0 0 0 0 0 62.1" stroke="#f6e6ea" stroke-width="4" fill="none" opacity="0.92"/></svg>
<div class="a" style="left:961px;top:81px;width:212px;height:9.5px;background:#3d3d3d;"></div>
<div class="t" style="left:978.5px;top:81.50px;font-size:8px;color:#9a9a9a;font-weight:bold;">&#8249;&#8249;</div>
<div class="t" style="left:1162px;top:81.50px;font-size:8px;color:#9a9a9a;font-weight:bold;">&#8250;&#8250;</div>
<div class="a" style="left:960.5px;top:90.5px;width:30.5px;height:598.5px;background:#505050;border-left:1px solid #2e2e2e;border-right:1px solid #3c3c3c;"></div>
<div class="a" style="left:962px;top:92px;width:27.5px;height:27.5px;background:#535353;border-bottom:1px solid #3a3a3a;"></div>
<div class="a" style="left:962px;top:122px;width:27.5px;height:27.400000000000006px;background:#535353;border-bottom:1px solid #3a3a3a;"></div>
<div class="a" style="left:962px;top:152px;width:27.5px;height:48px;background:#535353;border-bottom:1px solid #3a3a3a;"></div>
<div class="a" style="left:962px;top:203px;width:27.5px;height:27px;background:#535353;border-bottom:1px solid #3a3a3a;"></div>
<div class="a" style="left:962px;top:233px;width:27.5px;height:49px;background:#535353;border-bottom:1px solid #3a3a3a;"></div>
<div class="a" style="left:962px;top:284px;width:27.5px;height:51px;background:#535353;border-bottom:1px solid #3a3a3a;"></div>
<svg class="a" style="left:969px;top:99.5px" width="13" height="13" viewBox="0 0 13 13"><rect x="1" y="1" width="4" height="3" fill="none" stroke="#d8d8d8"/><rect x="1" y="5" width="4" height="3" fill="none" stroke="#d8d8d8"/><rect x="1" y="9" width="4" height="3" fill="#d8d8d8"/><path d="M8 3q4 0 4 4t-4 5" fill="none" stroke="#d8d8d8" stroke-width="1.3"/><path d="M7 1l2 2-2 2" fill="#d8d8d8"/></svg>
<svg class="a" style="left:969px;top:130.5px" width="13" height="13" viewBox="0 0 13 13"><circle cx="4" cy="4.5" r="3.3" fill="none" stroke="#d8d8d8"/><rect x="9" y="1" width="3" height="3" fill="#d8d8d8"/><rect x="9" y="5" width="3" height="3" fill="#d8d8d8"/><rect x="1" y="10" width="11" height="2" fill="#d8d8d8"/></svg>
<svg class="a" style="left:969px;top:161.1px" width="13" height="13" viewBox="0 0 13 13"><path d="M1 2h2M1 4.5h2M1 7h2" stroke="#d8d8d8"/><path d="M12 1L6 8" stroke="#d8d8d8" stroke-width="1.5"/><path d="M6 7.5q-3 0-3.5 4.5q4-0.5 4.5-3.5z" fill="#d8d8d8"/></svg>
<svg class="a" style="left:969px;top:182.2px" width="13" height="13" viewBox="0 0 13 13"><path d="M1 3h8M3 9h8" stroke="#d8d8d8" stroke-width="1.3"/><rect x="2" y="1.5" width="3" height="3" fill="#d8d8d8"/><path d="M8 6l4-1v7l-4-2z" fill="#d8d8d8"/></svg>
<svg class="a" style="left:969px;top:210.5px" width="13" height="13" viewBox="0 0 13 13"><path d="M1 2h2M1 4.5h2M1 7h2" stroke="#d8d8d8"/><circle cx="8" cy="4" r="2.2" fill="#d8d8d8"/><rect x="7" y="6" width="2" height="2" fill="#d8d8d8"/><rect x="4" y="8" width="8" height="2.5" fill="#d8d8d8"/><rect x="4" y="11" width="8" height="1" fill="#d8d8d8"/></svg>
<svg class="a" style="left:969px;top:242.1px" width="13" height="13" viewBox="0 0 13 13"><path d="M1 12L5 1l4 11M2.5 8h5" fill="none" stroke="#d8d8d8" stroke-width="1.2"/><path d="M11 1v11" stroke="#d8d8d8" stroke-width="1"/></svg>
<svg class="a" style="left:969px;top:263.5px" width="13" height="13" viewBox="0 0 13 13"><path d="M7 1h4M8 1v11M10 1v11" stroke="#d8d8d8" stroke-width="1.2"/><path d="M8 1a3 3 0 0 0 0 6z" fill="#d8d8d8"/></svg>
<svg class="a" style="left:969px;top:293.1px" width="13" height="13" viewBox="0 0 13 13"><rect x="1.5" y="1.5" width="10" height="10" fill="none" stroke="#d8d8d8" stroke-width="1.3"/><path d="M1.5 6.5h10M6.5 1.5v5" stroke="#d8d8d8" stroke-width="1.2"/></svg>
<svg class="a" style="left:969px;top:313.5px" width="13" height="13" viewBox="0 0 13 13"><path d="M1.5 1h8l2 2v9h-10z" fill="#d8d8d8"/><path d="M3.5 5h6M3.5 7h6M3.5 9h4" stroke="#535353"/></svg>
<div class="a" style="left:991px;top:90.5px;width:182px;height:598.5px;background:#535353;"></div>
<div class="a" style="left:991px;top:90.5px;width:182px;height:20.5px;background:#434343;"></div>
<div class="a" style="left:991px;top:91px;width:34px;height:20px;background:#535353;"></div>
<div class="a" style="left:1025px;top:91px;width:49px;height:20px;background:#484848;border-right:1px solid #3c3c3c;"></div>
<div class="t" style="left:998px;top:96.60px;font-size:8.4px;color:#e8e8e8;font-weight:bold;">Color</div>
<div class="t" style="left:1032px;top:96.60px;font-size:8.4px;color:#a8a8a8;font-weight:bold;">Swatches</div>
<svg class="a" style="left:1161.5px;top:97.2px" width="8" height="7" viewBox="0 0 8 7"><path d="M0 1h7.5M0 3.2h7.5M0 5.4h7.5" stroke="#a8a8a8" stroke-width="1.3"/></svg>
<div class="a" style="left:1025px;top:116.2px;width:109px;height:159.8px;background:linear-gradient(to bottom,rgba(0,0,0,0),#000),linear-gradient(to right,#fff,#ff0000);"></div>
<div class="a" style="left:1146.8px;top:116.2px;width:14.6px;height:159.8px;background:linear-gradient(to bottom,#ff0000 0%,#ff00ff 17%,#0000ff 33%,#00ffff 50%,#00ff00 67%,#ffff00 83%,#ff0000 100%);"></div>
<svg class="a" style="left:1136.5px;top:272px" width="7" height="7" viewBox="0 0 7 7"><path d="M0.5 0.5l6 3-6 3z" fill="#eee"/></svg>
<div class="a" style="left:1021.5px;top:272px;width:7px;height:7px;border-radius:50%;border:1px solid #ddd"></div>
<div class="a" style="left:1005.6px;top:126.4px;width:14.4px;height:14.2px;background:#fff;border:1px solid #999;"></div>
<div class="a" style="left:999px;top:119.3px;width:13px;height:12.9px;background:#000;border:1px solid #aaa;"></div>
<div class="a" style="left:991px;top:288.5px;width:182px;height:3.5px;background:#3a3a3a;"></div>
<div class="a" style="left:991px;top:292px;width:182px;height:21px;background:#434343;"></div>
<div class="a" style="left:991px;top:292px;width:47px;height:21px;background:#535353;"></div>
<div class="a" style="left:1038px;top:292px;width:62px;height:21px;background:#484848;border-right:1px solid #3c3c3c;"></div>
<div class="t" style="left:998.4px;top:298.10px;font-size:8.4px;color:#e8e8e8;font-weight:bold;">Libraries</div>
<div class="t" style="left:1044.5px;top:298.10px;font-size:8.4px;color:#a8a8a8;font-weight:bold;">Adjustments</div>
<svg class="a" style="left:1161.5px;top:298.2px" width="8" height="7" viewBox="0 0 8 7"><path d="M0 1h7.5M0 3.2h7.5M0 5.4h7.5" stroke="#a8a8a8" stroke-width="1.3"/></svg>
<div class="a" style="left:991px;top:313px;width:182px;height:140px;background:#3e3e3e;"></div>
<div class="a" style="left:997.2px;top:322.3px;width:170.3px;height:129px;background:#fff;border-radius:2px 2px 0 0;overflow:hidden"><svg width="171" height="97" viewBox="0 0 171 97" style="position:absolute;left:0;top:0"><rect width="171" height="97" fill="#bc9ff2"/><path d="M0 14q40-12 80 4t91 0V0H0z" fill="#cdc0f8"/><path d="M0 50q50-20 100 0t71-10v65H0z" fill="#b292f0"/><path d="M0 78q60-25 120 0t51-5v30H0z" fill="#a48ae6"/><path d="M120 0q20 25 51 18V0z" fill="#b4a4f0" opacity="0.7"/></svg><div class="a" style="left:28.7px;top:14.3px;width:112.9px;height:82.5px;background:#2e2e2e;border-radius:3px 3px 0 0"></div><div class="a" style="left:40.6px;top:23.9px;width:82.6px;height:16.8px;background:#1d1d1d"></div><div class="a" style="left:40.6px;top:46.7px;width:82.6px;height:17px;background:#1d1d1d;border:1px solid #4e4e4e;border-radius:2px"></div><div class="a" style="left:40.6px;top:70.1px;width:82.6px;height:16px;background:#1d1d1d"></div><div class="a" style="left:135px;top:24px;width:3.2px;height:54px;background:#4a4a4a;border-radius:2px"></div><div class="t" style="left:44px;top:29px;font-size:6px;color:#bdbdbd">Your Library</div><div class="t" style="left:44px;top:52px;font-size:6px;color:#bdbdbd">Team Brand</div><div class="t" style="left:44px;top:75px;font-size:6px;color:#bdbdbd">Design System</div><svg class="a" style="left:111px;top:50px" width="8" height="9" viewBox="0 0 8 9"><circle cx="4" cy="2.5" r="2" fill="#ccc"/><path d="M0.5 8.5q0-4 3.5-4t3.5 4z" fill="#ccc"/></svg><svg class="a" style="left:111px;top:73px" width="8" height="9" viewBox="0 0 8 9"><circle cx="4" cy="2.5" r="2" fill="#ccc"/><path d="M0.5 8.5q0-4 3.5-4t3.5 4z" fill="#ccc"/></svg><svg class="a" style="left:96px;top:56px" width="8" height="11" viewBox="0 0 8 11"><path d="M0.5 0.5v9l2.3-2 1.6 3.2 1.4-0.7-1.6-3.1h3z" fill="#111" stroke="#eee" stroke-width="0.8"/></svg><div class="t" style="left:10.5px;top:109.5px;font-size:11.9px;font-weight:bold;color:#1a1a1a">View all libraries at a</div><div class="t" style="left:10.5px;top:121.5px;font-size:11.9px;font-weight:bold;color:#1a1a1a">glance</div></div>
<div class="a" style="left:991px;top:451.5px;width:182px;height:3px;background:#3a3a3a;"></div>
<div class="a" style="left:991px;top:454.2px;width:182px;height:18.6px;background:#434343;"></div>
<div class="a" style="left:991px;top:454.2px;width:38.3px;height:18.6px;background:#535353;"></div>
<div class="a" style="left:1029.3px;top:454.2px;width:49px;height:18.6px;background:#484848;border-right:1px solid #3c3c3c;"></div>
<div class="a" style="left:1078.3px;top:454.2px;width:34.3px;height:18.6px;background:#484848;border-right:1px solid #3c3c3c;"></div>
<div class="t" style="left:998px;top:459.30px;font-size:8.4px;color:#e8e8e8;font-weight:bold;">Layers</div>
<div class="t" style="left:1036.7px;top:459.30px;font-size:8.4px;color:#a8a8a8;font-weight:bold;">Channels</div>
<div class="t" style="left:1085px;top:459.30px;font-size:8.4px;color:#a8a8a8;font-weight:bold;">Paths</div>
<svg class="a" style="left:1161.5px;top:459.7px" width="8" height="7" viewBox="0 0 8 7"><path d="M0 1h7.5M0 3.2h7.5M0 5.4h7.5" stroke="#a8a8a8" stroke-width="1.3"/></svg>
<div class="a" style="left:995px;top:481.6px;width:62.8px;height:11.6px;background:#474747;border-radius:2px;"></div>
<svg class="a" style="left:1000px;top:483.5px" width="8" height="9" viewBox="0 0 8 9"><circle cx="3.3" cy="3.3" r="2.5" fill="none" stroke="#ddd" stroke-width="1"/><path d="M5 5l2.5 3" stroke="#ddd" stroke-width="1.1"/></svg>
<div class="t" style="left:1008.5px;top:484.00px;font-size:8px;color:#dcdcdc;font-weight:normal;">Kind</div>
<div class="a" style="left:991px;top:497.5px;width:170px;height:1px;background:#494949;"></div>
<div class="a" style="left:991px;top:518.5px;width:170px;height:1px;background:#494949;"></div>
<svg class="a" style="left:1051px;top:485.5px" width="6" height="4" viewBox="0 0 6 4"><path d="M0.5 0.5l2.5 2.5 2.5-2.5" stroke="#bbb" fill="none" stroke-width="1"/></svg>
<svg class="a" style="left:1067.5px;top:482.5px" width="10" height="10" viewBox="0 0 10 10"><rect x="0.5" y="1.5" width="9" height="7" fill="none" stroke="#cfcfcf"/><path d="M2 7l2-2.5 1.5 1.5 1.5-2 1.5 3z" fill="#cfcfcf"/></svg>
<svg class="a" style="left:1084.4px;top:482.5px" width="10" height="10" viewBox="0 0 10 10"><circle cx="5" cy="5" r="4.2" fill="none" stroke="#cfcfcf" stroke-width="1.2"/><path d="M5 0.8a4.2 4.2 0 0 1 0 8.4z" fill="#cfcfcf"/></svg>
<svg class="a" style="left:1102.4px;top:482.5px" width="10" height="10" viewBox="0 0 10 10"><path d="M0.5 1h9M0.5 1v2M9.5 1v2M5 1v8.5M3 9.5h4" fill="none" stroke="#cfcfcf" stroke-width="1.2"/></svg>
<svg class="a" style="left:1120.3px;top:482.5px" width="10" height="10" viewBox="0 0 10 10"><rect x="1.5" y="1.5" width="7" height="7" fill="none" stroke="#cfcfcf" stroke-width="1.1"/><rect x="0" y="0" width="3" height="3" fill="#cfcfcf"/><rect x="7" y="0" width="3" height="3" fill="#cfcfcf"/><rect x="0" y="7" width="3" height="3" fill="#cfcfcf"/><rect x="7" y="7" width="3" height="3" fill="#cfcfcf"/></svg>
<svg class="a" style="left:1138.2px;top:482.5px" width="10" height="10" viewBox="0 0 10 10"><rect x="1" y="4" width="8" height="6" fill="#cfcfcf"/><path d="M3 4V2.5a2 2 0 0 1 4 0" fill="none" stroke="#cfcfcf" stroke-width="1"/></svg>
<div class="a" style="left:1157px;top:481px;width:7px;height:13px;background:#3e3e3e;border-radius:3.5px;"></div>
<div class="a" style="left:1156.5px;top:480.5px;width:8px;height:8px;border-radius:50%;background:#eee"></div>
<div class="a" style="left:995px;top:502.3px;width:94.4px;height:12.1px;background:#474747;border-radius:2px;"></div>
<div class="t" style="left:999.3px;top:504.40px;font-size:8px;color:#dcdcdc;font-weight:normal;">Normal</div>
<svg class="a" style="left:1083px;top:507px" width="6" height="4" viewBox="0 0 6 4"><path d="M0.5 0.5l2.5 2.5 2.5-2.5" stroke="#bbb" fill="none" stroke-width="1"/></svg>
<div class="t" style="left:1093.7px;top:504.40px;font-size:8px;color:#b4b4b4;font-weight:normal;">Opacity:</div>
<div class="a" style="left:1126px;top:502.3px;width:25.7px;height:12.1px;background:#474747;border-radius:2px;"></div>
<div class="t" style="left:1128px;top:504.40px;font-size:8px;color:#dcdcdc;font-weight:normal;">100%</div>
<div class="a" style="left:1153.8px;top:502.3px;width:8px;height:12.1px;background:#474747;border-radius:2px;"></div>
<svg class="a" style="left:1155px;top:507px" width="6" height="4" viewBox="0 0 6 4"><path d="M0.5 0.5l2.5 2.5 2.5-2.5" stroke="#bbb" fill="none" stroke-width="1"/></svg>
<div class="t" style="left:995px;top:525.00px;font-size:8px;color:#a8a8a8;font-weight:normal;">Lock:</div>
<svg class="a" style="left:1018.5px;top:524.5px" width="9" height="9" viewBox="0 0 9 9"><rect x="0.5" y="0.5" width="8" height="8" fill="none" stroke="#a8a8a8" stroke-dasharray="1 1"/><rect x="2.5" y="2.5" width="4" height="4" fill="#a8a8a8" opacity="0.6"/></svg>
<svg class="a" style="left:1034.9px;top:524.5px" width="9" height="9" viewBox="0 0 9 9"><path d="M8.5 0.5L2 7.5" stroke="#a8a8a8" stroke-width="1.3"/><path d="M2 7q-2 0-1.5 2q2 0 2.5-1.5z" fill="#a8a8a8"/></svg>
<svg class="a" style="left:1051.2px;top:524.5px" width="9" height="9" viewBox="0 0 9 9"><path d="M4.5 0v9M0 4.5h9" stroke="#d0d0d0" stroke-width="1"/><path d="M4.5 0L3 2h3zM4.5 9L3 7h3zM0 4.5l2-1.5v3zM9 4.5L7 3v3z" fill="#d0d0d0"/></svg>
<svg class="a" style="left:1067.0px;top:524.5px" width="9" height="9" viewBox="0 0 9 9"><path d="M1 8.5h7.5M1.5 8V2h5l2 2.5" fill="none" stroke="#a8a8a8" stroke-width="1.1"/></svg>
<svg class="a" style="left:1083.9px;top:524.5px" width="9" height="9" viewBox="0 0 9 9"><rect x="1" y="4" width="7" height="5" fill="#d0d0d0"/><path d="M2.5 4V2.8a2 2 0 0 1 4 0V4" fill="none" stroke="#d0d0d0" stroke-width="1.1"/></svg>
<div class="t" style="left:1111px;top:525.00px;font-size:8px;color:#a8a8a8;font-weight:normal;">Fill:</div>
<div class="a" style="left:1126px;top:523.8px;width:25.7px;height:11px;background:#474747;border-radius:2px;"></div>
<div class="t" style="left:1128px;top:525.20px;font-size:8px;color:#dcdcdc;font-weight:normal;">100%</div>
<div class="a" style="left:1153.8px;top:523.8px;width:8px;height:11px;background:#474747;border-radius:2px;"></div>
<svg class="a" style="left:1155px;top:528px" width="6" height="4" viewBox="0 0 6 4"><path d="M0.5 0.5l2.5 2.5 2.5-2.5" stroke="#bbb" fill="none" stroke-width="1"/></svg>
<div class="a" style="left:991px;top:539.5px;width:182px;height:1px;background:#474747;"></div>
<div class="a" style="left:1163px;top:540px;width:10px;height:130px;background:#4a4a4a;"></div>
<svg class="a" style="left:998px;top:549.9px" width="10" height="7" viewBox="0 0 10 7"><path d="M0.5 3.5q4.5-5.5 9 0q-4.5 5.5-9 0z" fill="#ddd"/><circle cx="5" cy="3.5" r="1.6" fill="#535353"/></svg>
<div class="a" style="left:1017px;top:545px;width:23px;height:17px;background:#1c211c;border:1px dashed #d8d8d8;overflow:hidden"><div class="a" style="left:9px;top:7px;width:6px;height:6px;border-radius:50%;background:#e04a60"></div><div class="a" style="left:2px;top:4px;width:4px;height:4px;border-radius:50%;background:#a01818"></div><div class="a" style="left:16px;top:1px;width:4px;height:4px;border-radius:50%;background:#a01818"></div><div class="a" style="left:6px;top:2px;width:4px;height:4px;border-radius:50%;background:#4a3a3a"></div></div>
<div class="t" style="left:1046.2px;top:549.40px;font-size:8px;color:#dcdcdc;font-weight:normal;">Layer 0</div>
<div class="a" style="left:989.2px;top:565px;width:174.1px;height:31.6px;background:#646464;border:3px solid #e01010;border-radius:2px;"></div>
<svg class="a" style="left:998px;top:577.7px" width="10" height="7" viewBox="0 0 10 7"><path d="M0.5 3.5q4.5-5.5 9 0q-4.5 5.5-9 0z" fill="#ddd"/><circle cx="5" cy="3.5" r="1.6" fill="#535353"/></svg>
<div class="a" style="left:1015.6px;top:568.6px;width:24.7px;height:24.4px;background:#606060;border:1px solid #e0e0e0;"></div>
<div class="a" style="left:1017px;top:570px;width:22px;height:16px;background:#f95656;"></div>
<div class="a" style="left:1018px;top:587.5px;width:20px;height:3px;background:#b4bac4;"></div>
<svg class="a" style="left:1042.5px;top:575px" width="5" height="12" viewBox="0 0 5 12"><rect x="0.6" y="0.6" width="3.8" height="4.5" rx="1.5" fill="none" stroke="#cfcfcf" stroke-width="0.9"/><rect x="0.6" y="6.5" width="3.8" height="4.5" rx="1.5" fill="none" stroke="#cfcfcf" stroke-width="0.9"/></svg>
<div class="a" style="left:1050.5px;top:571.4px;width:25px;height:20px;background:#fff;border:1px solid #3a3a3a;"></div>
<div class="t" style="left:1081px;top:577.00px;font-size:8px;color:#e0e0e0;font-weight:normal;">border</div>
<div class="a" style="left:991px;top:670.5px;width:182px;height:18.5px;background:#4b4b4b;border-top:1px solid #444;"></div>
<svg class="a" style="left:1021.5px;top:673.5px" width="11" height="11" viewBox="0 0 11 11"><rect x="0.5" y="2.5" width="5" height="4" rx="2" fill="none" stroke="#8a8a8a"/><rect x="5.5" y="2.5" width="5" height="4" rx="2" fill="none" stroke="#8a8a8a"/></svg>
<svg class="a" style="left:1042.8px;top:673.5px" width="11" height="11" viewBox="0 0 11 11"><text x="0" y="8.5" font-family="Liberation Serif" font-style="italic" font-size="10" fill="#cfcfcf">fx</text></svg>
<svg class="a" style="left:1062.5px;top:673.5px" width="11" height="11" viewBox="0 0 11 11"><rect x="0.5" y="1" width="10" height="8" fill="#cfcfcf"/><circle cx="5.5" cy="5" r="2.5" fill="#535353"/></svg>
<svg class="a" style="left:1082.2px;top:673.5px" width="11" height="11" viewBox="0 0 11 11"><circle cx="5" cy="5" r="4.2" fill="none" stroke="#cfcfcf" stroke-width="1.2"/><path d="M5 0.8a4.2 4.2 0 0 1 0 8.4z" fill="#cfcfcf"/></svg>
<svg class="a" style="left:1102.8px;top:673.5px" width="11" height="11" viewBox="0 0 11 11"><path d="M0.5 2h3.5l1 1.2h5.5v6.3H0.5z" fill="#cfcfcf"/></svg>
<svg class="a" style="left:1122.5px;top:673.5px" width="11" height="11" viewBox="0 0 11 11"><rect x="1" y="1" width="9" height="9" fill="none" stroke="#cfcfcf" stroke-width="1.1"/><path d="M5.5 3v5M3 5.5h5" stroke="#cfcfcf" stroke-width="1.1"/></svg>
<svg class="a" style="left:1142.2px;top:673.5px" width="11" height="11" viewBox="0 0 11 11"><path d="M1 2h9M4 1h3" stroke="#cfcfcf" stroke-width="1"/><path d="M2 3h7l-0.6 7H2.6z" fill="none" stroke="#cfcfcf" stroke-width="1.1"/><path d="M4.5 4.5v4M6.5 4.5v4" stroke="#cfcfcf" stroke-width="0.8"/></svg>
<div class="a" style="left:529.2px;top:377.2px;width:409.2px;height:290.3px;background:#535353;border-radius:4px 4px 2px 2px;box-shadow:0 3px 10px rgba(0,0,0,0.45);overflow:hidden"><div class="a" style="left:0;top:0;width:409.2px;height:16px;background:linear-gradient(#dadada,#c6c6c6);border-bottom:1px solid #a8a8a8"></div></div>
<div class="t" style="left:675px;top:381.10px;font-size:10.2px;color:#424242;font-weight:normal;">Color Picker (Solid Color)</div>
<div class="a" style="left:536.4px;top:418.5px;width:196.3px;height:196.8px;background:linear-gradient(to bottom,rgba(0,0,0,0),#000),linear-gradient(to right,#fff,#ff1000);"></div>
<div class="a" style="left:689.5px;top:440.5px;width:9px;height:9px;border-radius:50%;border:1px solid #f0f0f0"></div>
<div class="a" style="left:742.3px;top:418.7px;width:14.4px;height:196.6px;background:linear-gradient(to bottom,#ff0000 0%,#ff00ff 17%,#0000ff 33%,#00ffff 50%,#00ff00 67%,#ffff00 83%,#ff0000 100%);"></div>
<svg class="a" style="left:735px;top:610.5px" width="5" height="8" viewBox="0 0 5 8"><path d="M0.5 0.5l4 3.5-4 3.5z" fill="#eee"/></svg>
<svg class="a" style="left:759px;top:610.5px" width="5" height="8" viewBox="0 0 5 8"><path d="M4.5 0.5l-4 3.5 4 3.5z" fill="#eee"/></svg>
<div class="t" style="left:780.9px;top:421.30px;font-size:9px;color:#d4d4d4;font-weight:normal;">new</div>
<div class="a" style="left:766.4px;top:432.4px;width:46.2px;height:26.2px;background:#dc342b;"></div>
<div class="a" style="left:766.4px;top:458.6px;width:46.2px;height:25.3px;background:#f95555;"></div>
<div class="t" style="left:774px;top:488.30px;font-size:9px;color:#d4d4d4;font-weight:normal;">current</div>
<svg class="a" style="left:819.5px;top:461.5px" width="9" height="10" viewBox="0 0 9 10"><path d="M4.5 0.8L8.3 3v4.2L4.5 9.3 0.7 7.2V3z" fill="none" stroke="#ccc" stroke-width="0.9"/><path d="M0.7 3l3.8 2.2L8.3 3M4.5 5.2v4" stroke="#ccc" stroke-width="0.9" fill="none"/></svg>
<div class="a" style="left:820.2px;top:474.3px;width:8.5px;height:9px;background:#dc342b;border:1px solid #e8a0a0;"></div>
<div class="a" style="left:842px;top:401.6px;width:89.3px;height:20.0px;border:1.3px solid #cdcdcd;border-radius:10.0px;background:#535353"></div><div class="t" style="left:842px;top:406.9px;width:89.3px;text-align:center;font-size:9.2px;color:#e4e4e4">OK</div>
<div class="a" style="left:842px;top:429.2px;width:89.3px;height:20.8px;border:1px solid #6e6e6e;border-radius:10.4px;background:#535353"></div><div class="t" style="left:842px;top:434.9px;width:89.3px;text-align:center;font-size:9.2px;color:#e4e4e4">Cancel</div>
<div class="a" style="left:842px;top:462.4px;width:89.3px;height:20.3px;border:1px solid #6e6e6e;border-radius:10.2px;background:#535353"></div><div class="t" style="left:842px;top:467.8px;width:89.3px;text-align:center;font-size:9.2px;color:#e4e4e4">Add to Swatches</div>
<div class="a" style="left:842px;top:495.2px;width:89.3px;height:20.7px;border:1px solid #6e6e6e;border-radius:10.3px;background:#535353"></div><div class="t" style="left:842px;top:500.8px;width:89.3px;text-align:center;font-size:9.2px;color:#e4e4e4">Color Libraries</div>
<div class="a" style="left:767.2px;top:531.4px;width:9px;height:9px;border-radius:50%;background:#f0f0f0"></div><div class="a" style="left:769.7px;top:533.9px;width:4px;height:4px;border-radius:50%;background:#3a3a3a"></div>
<div class="t" style="left:779.9px;top:531.70px;font-size:9px;color:#dcdcdc;font-weight:normal;">H:</div>
<div class="a" style="left:803px;top:529.3px;width:24.399999999999977px;height:13.2px;background:#474747;border:1px solid #4e4e4e;"></div><div class="t" style="left:805px;top:531.70px;font-size:9px;color:#e0e0e0;font-weight:normal;">3</div>
<div class="t" style="left:831px;top:530.90px;font-size:7px;color:#dcdcdc;font-weight:normal;">&#176;</div>
<div class="a" style="left:767.2px;top:550.2px;width:9px;height:9px;border-radius:50%;border:1px solid #6a6a6a;background:#4a4a4a"></div>
<div class="t" style="left:779.9px;top:550.50px;font-size:9px;color:#dcdcdc;font-weight:normal;">S:</div>
<div class="a" style="left:803px;top:548.1px;width:24.399999999999977px;height:13.2px;background:#474747;border:1px solid #4e4e4e;"></div><div class="t" style="left:805px;top:550.50px;font-size:9px;color:#e0e0e0;font-weight:normal;">80</div>
<div class="t" style="left:831px;top:550.50px;font-size:9px;color:#dcdcdc;font-weight:normal;">%</div>
<div class="a" style="left:767.2px;top:568.5px;width:9px;height:9px;border-radius:50%;border:1px solid #6a6a6a;background:#4a4a4a"></div>
<div class="t" style="left:779.9px;top:568.80px;font-size:9px;color:#dcdcdc;font-weight:normal;">B:</div>
<div class="a" style="left:803px;top:566.4px;width:24.399999999999977px;height:13.2px;background:#474747;border:1px solid #4e4e4e;"></div><div class="t" style="left:805px;top:568.80px;font-size:9px;color:#e0e0e0;font-weight:normal;">86</div>
<div class="t" style="left:831px;top:568.80px;font-size:9px;color:#dcdcdc;font-weight:normal;">%</div>
<div class="a" style="left:767.2px;top:589.9px;width:9px;height:9px;border-radius:50%;border:1px solid #6a6a6a;background:#4a4a4a"></div>
<div class="t" style="left:779.9px;top:590.20px;font-size:9px;color:#dcdcdc;font-weight:normal;">R:</div>
<div class="a" style="left:803px;top:587.8px;width:24.399999999999977px;height:13.2px;background:#474747;border:1px solid #4e4e4e;"></div><div class="t" style="left:805px;top:590.20px;font-size:9px;color:#e0e0e0;font-weight:normal;">220</div>
<div class="a" style="left:767.2px;top:608.3px;width:9px;height:9px;border-radius:50%;border:1px solid #6a6a6a;background:#4a4a4a"></div>
<div class="t" style="left:779.9px;top:608.60px;font-size:9px;color:#dcdcdc;font-weight:normal;">G:</div>
<div class="a" style="left:803px;top:606.1999999999999px;width:24.399999999999977px;height:13.2px;background:#474747;border:1px solid #4e4e4e;"></div><div class="t" style="left:805px;top:608.60px;font-size:9px;color:#e0e0e0;font-weight:normal;">52</div>
<div class="a" style="left:767.2px;top:626.6px;width:9px;height:9px;border-radius:50%;border:1px solid #6a6a6a;background:#4a4a4a"></div>
<div class="t" style="left:779.9px;top:626.90px;font-size:9px;color:#dcdcdc;font-weight:normal;">B:</div>
<div class="a" style="left:803px;top:624.5px;width:24.399999999999977px;height:13.2px;background:#474747;border:1px solid #4e4e4e;"></div><div class="t" style="left:805px;top:626.90px;font-size:9px;color:#e0e0e0;font-weight:normal;">43</div>
<div class="a" style="left:856.1px;top:531.4px;width:9px;height:9px;border-radius:50%;border:1px solid #6a6a6a;background:#4a4a4a"></div>
<div class="t" style="left:869.2px;top:531.70px;font-size:9px;color:#dcdcdc;font-weight:normal;">L:</div>
<div class="a" style="left:886.5px;top:529.3px;width:31.200000000000045px;height:13.2px;background:#474747;border:1px solid #4e4e4e;"></div><div class="t" style="left:888.5px;top:531.70px;font-size:9px;color:#e0e0e0;font-weight:normal;">50</div>
<div class="a" style="left:856.1px;top:550.2px;width:9px;height:9px;border-radius:50%;border:1px solid #6a6a6a;background:#4a4a4a"></div>
<div class="t" style="left:869.2px;top:550.50px;font-size:9px;color:#dcdcdc;font-weight:normal;">a:</div>
<div class="a" style="left:886.5px;top:548.1px;width:31.200000000000045px;height:13.2px;background:#474747;border:1px solid #4e4e4e;"></div><div class="t" style="left:888.5px;top:550.50px;font-size:9px;color:#e0e0e0;font-weight:normal;">64</div>
<div class="a" style="left:856.1px;top:568.5px;width:9px;height:9px;border-radius:50%;border:1px solid #6a6a6a;background:#4a4a4a"></div>
<div class="t" style="left:869.2px;top:568.80px;font-size:9px;color:#dcdcdc;font-weight:normal;">b:</div>
<div class="a" style="left:886.5px;top:566.4px;width:31.200000000000045px;height:13.2px;background:#474747;border:1px solid #4e4e4e;"></div><div class="t" style="left:888.5px;top:568.80px;font-size:9px;color:#e0e0e0;font-weight:normal;">47</div>
<div class="t" style="left:860px;top:590.2px;width:21.5px;text-align:right;font-size:9px;color:#dcdcdc">C:</div>
<div class="a" style="left:886.5px;top:587.8px;width:24.5px;height:13.2px;background:#474747;border:1px solid #4e4e4e;"></div><div class="t" style="left:888.5px;top:590.20px;font-size:9px;color:#e0e0e0;font-weight:normal;">8</div>
<div class="t" style="left:915px;top:590.20px;font-size:9px;color:#dcdcdc;font-weight:normal;">%</div>
<div class="t" style="left:860px;top:608.6px;width:21.5px;text-align:right;font-size:9px;color:#dcdcdc">M:</div>
<div class="a" style="left:886.5px;top:606.1999999999999px;width:24.5px;height:13.2px;background:#474747;border:1px solid #4e4e4e;"></div><div class="t" style="left:888.5px;top:608.60px;font-size:9px;color:#e0e0e0;font-weight:normal;">94</div>
<div class="t" style="left:915px;top:608.60px;font-size:9px;color:#dcdcdc;font-weight:normal;">%</div>
<div class="t" style="left:860px;top:626.9px;width:21.5px;text-align:right;font-size:9px;color:#dcdcdc">Y:</div>
<div class="a" style="left:886.5px;top:624.5px;width:24.5px;height:13.2px;background:#474747;border:1px solid #4e4e4e;"></div><div class="t" style="left:888.5px;top:626.90px;font-size:9px;color:#e0e0e0;font-weight:normal;">97</div>
<div class="t" style="left:915px;top:626.90px;font-size:9px;color:#dcdcdc;font-weight:normal;">%</div>
<div class="t" style="left:860px;top:645.2px;width:21.5px;text-align:right;font-size:9px;color:#dcdcdc">K:</div>
<div class="a" style="left:886.5px;top:642.8px;width:24.5px;height:13.2px;background:#474747;border:1px solid #4e4e4e;"></div><div class="t" style="left:888.5px;top:645.20px;font-size:9px;color:#e0e0e0;font-weight:normal;">1</div>
<div class="t" style="left:915px;top:645.20px;font-size:9px;color:#dcdcdc;font-weight:normal;">%</div>
<div class="t" style="left:767.6px;top:648.55px;font-size:8.5px;color:#cfcfcf;font-weight:normal;">#</div>
<div class="a" style="left:776.4px;top:645.5px;width:63.3px;height:14.3px;background:#474747;border:1px solid #2f6fc0;"></div>
<div class="a" style="left:778px;top:647px;width:35px;height:11.3px;background:#2e6bc4;"></div>
<div class="t" style="left:779px;top:648.30px;font-size:9.2px;color:#f0f4ff;font-weight:normal;">dc342b</div>
<div class="a" style="left:536.5px;top:627.3px;width:9.3px;height:8.7px;background:#4a4a4a;border:1px solid #777;border-radius:1.5px;"></div>
<div class="t" style="left:549.6px;top:627.30px;font-size:9.4px;color:#dcdcdc;font-weight:normal;">Only Web Colors</div>
</div></body></html>
